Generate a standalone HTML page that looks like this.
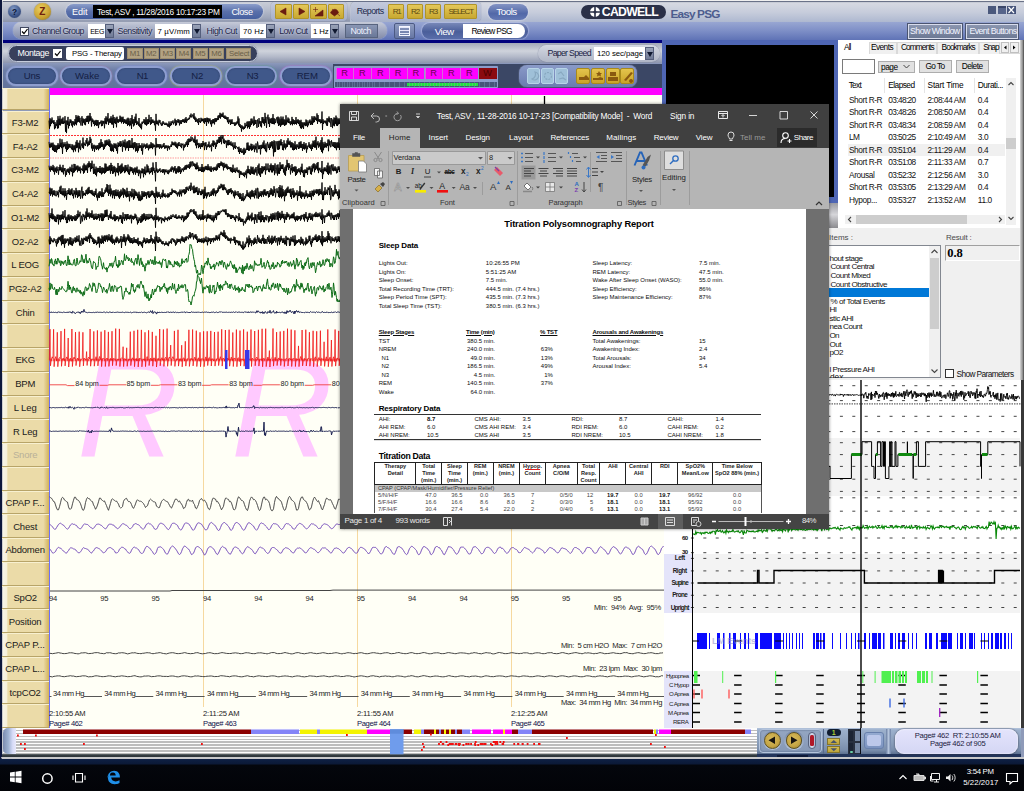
<!DOCTYPE html><html><head><meta charset="utf-8"><title>Easy PSG</title><style>

*{box-sizing:border-box;margin:0;padding:0}
html,body{width:1024px;height:791px;overflow:hidden}
body{position:relative;background:#8e9ab8;font-family:"Liberation Sans",sans-serif;font-size:10px;color:#000}
.a{position:absolute}
.t{position:absolute;white-space:pre;line-height:1}
svg{position:absolute;overflow:visible}


.r1{left:0;top:0;width:1024px;height:22px;background:linear-gradient(#f0f0f0 0,#f0f0f0 1.500px,#6a7288 1.500px,#6a7288 2.500px,#c8ccd6 2.500px,#b6bccb 10px,#9ea6ba 18px,#8c94aa 22px)}
.r2{left:0;top:22px;width:1024px;height:18px;background:linear-gradient(#98a6d2,#7d8ec6 50%,#5f73b6)}
.r2p{left:13px;top:22.400px;width:374px;height:16.600px;border-radius:8.300px;background:linear-gradient(#c6cad8,#a4acc4 45%,#828ba8);box-shadow:0 0 1px #dfe4f0}
.navy{left:0;top:40px;width:662px;height:3px;background:#00007c}
.r3{left:0;top:43px;width:662px;height:20px;background:linear-gradient(#a2a8b8,#cfd3dc 40%,#b2b8c8 70%,#8d96ae)}
.r4{left:0;top:63px;width:662px;height:25px;background:linear-gradient(#8c99bb,#6c7da6 30%,#61729c)}
.wb{background:#fff;top:24px;height:14px}
.ar{top:24px;height:14px;width:9px;background:linear-gradient(#9aa3b8,#6f7a96);border:1px solid #555f7c}
.ar:after{content:"";position:absolute;left:1px;top:4px;border:3px solid transparent;border-top:5px solid #101830;border-bottom:0}
.yb{background:linear-gradient(#e4c85a,#c8a830);border:1px solid #b09428;top:4px;height:15px;border-radius:1px}
.pill{border-radius:9px}
.stg{top:66.4px;height:19.800px;width:52.800px;border-radius:10px;background:#40588a;border:2.400px solid #8e9ecf}
.mb{top:47.8px;height:11.400px;background:#b3a383;border:1px solid #9c8d6e}
.rb{top:67.5px;height:11.800px;width:17.8px;background:#ff00ff;border-left:1px solid #d868d8}
.sh{text-shadow:0 0 2px #e8ecf8}


.lc{left:2px;width:46.5px;background:linear-gradient(90deg,#bcbcc4 0,#f8f4e6 1.500px,#f6f0dc 4.500px,#ebdba8 6px,#ebdba8 88%,#d2b25a 100%);border-top:1px solid #f8f0d0;border-bottom:1px solid #b8a468;height:23.75px}


.tab{top:42px;height:12px;background:#f0f0f0;border:1px solid #d9d9d9;border-bottom:0}
.btn{background:#e1e1e1;border:1px solid #adadad}


.wg{color:#222}


</style></head><body>
<div class="a r1"></div><div class="a r2"></div><div class="a r2p"></div>
<div class="a" style="left:350px;top:2.500px;width:674px;height:19.500px;background:linear-gradient(#d6d9e2,#c6ccdb 50%,#aeb8d0);border-radius:6px 0 0 0"></div>
<div class="a" style="left:7.800px;top:5.300px;width:12.800px;height:12.800px;border-radius:7px;background:radial-gradient(circle at 40% 30%,#8098c4,#3c5488 60%,#283c68);box-shadow:0 0 1px #5a6a8c"></div>
<div class="t" style="left:11.90px;top:8.19px;font-size:8.4px;color:#0c1838;font-weight:bold;">?</div>
<div class="a" style="left:34px;top:3.300px;width:17px;height:17px;border-radius:9px;background:radial-gradient(circle at 40% 35%,#ecd060,#c8a030 60%,#8a6c14);box-shadow:0 0 1px #6a5a20"></div>
<div class="t" style="left:39.30px;top:7.04px;font-size:10px;color:#70200c;font-weight:bold;">Z</div>
<div class="a pill" style="left:65.500px;top:4.300px;width:197px;height:14.700px;border-radius:7.500px;background:linear-gradient(#8c9ecc,#5a70aa 50%,#4660a0);box-shadow:0 0 2px #e8ecf8"></div>
<div class="t" style="left:72.10px;top:8.30px;font-size:9.1px;color:#fff;letter-spacing:-0.118px;">Edit</div>
<div class="a" style="left:93px;top:5px;width:129px;height:13.2px;background:#000;"></div>
<div class="t" style="left:97.00px;top:7.57px;font-size:8.3px;color:#fff;letter-spacing:-0.313px;">Test, ASV , 11/28/2016 10:17:23 PM</div>
<div class="t" style="left:231.50px;top:8.10px;font-size:9.1px;color:#fff;letter-spacing:-0.452px;">Close</div>
<div class="a" style="left:271px;top:2px;width:76px;height:19px;border-radius:4px;background:linear-gradient(#c4cadc,#a4aec8);box-shadow:0 0 1px #6a7694"></div>
<div class="a yb" style="left:275px;width:16.5px"></div>
<div class="a yb" style="left:292.5px;width:16.5px"></div>
<div class="a yb" style="left:310px;width:16.5px"></div>
<div class="a yb" style="left:327.5px;width:16.5px"></div>
<svg style="left:275px;top:4px" width="70" height="15" viewBox="0 0 70 15"><g fill="#6a1c10" stroke="#6a1c10" stroke-width="0.6"><path d="M5 7.5l6-3.5v7zM30 7.5l-6-3.5v7z"/><path d="M38 5.5h5M40.500 3v5M40 12l8-6v6z"/><path d="M57 5l8 7M55.500 9c2-5 7-5 8 0l-4 3z"/></g></svg>
<div class="a" style="left:351px;top:2px;width:130px;height:19px;border-radius:4px;background:linear-gradient(#c4cadc,#a8b2cc);box-shadow:0 0 1px #6a7694"></div>
<div class="t" style="left:356.80px;top:7.15px;font-size:8.8px;color:#20284a;letter-spacing:-0.585px;">Reports</div>
<div class="a yb" style="left:388px;width:16px"></div>
<div class="a yb" style="left:406.5px;width:16px"></div>
<div class="a yb" style="left:425px;width:16px"></div>
<div class="a yb" style="left:444px;width:33px"></div>
<div class="t" style="left:392.80px;top:7.73px;font-size:8px;color:#5a4810;letter-spacing:-1.263px;">R1</div>
<div class="t" style="left:411.00px;top:7.73px;font-size:8px;color:#5a4810;letter-spacing:-1.113px;">R2</div>
<div class="t" style="left:429.00px;top:7.73px;font-size:8px;color:#5a4810;letter-spacing:-1.113px;">R3</div>
<div class="t" style="left:448.50px;top:7.73px;font-size:8px;color:#5a4810;letter-spacing:-1.104px;">SELECT</div>
<div class="a pill" style="left:488px;top:4px;width:40px;height:16px;background:linear-gradient(#8494c4,#5268a8 60%,#6478b4);box-shadow:0 0 2px #eef"></div>
<div class="t" style="left:496.30px;top:6.90px;font-size:9.8px;color:#fff;letter-spacing:-0.474px;">Tools</div>
<div class="a" style="left:581px;top:5px;width:85px;height:14px;background:#2a3048;border-radius:7px"></div>
<svg style="left:589px;top:6px" width="12" height="12" viewBox="0 0 12 12"><circle cx="6" cy="6" r="5" fill="#fff"/><path d="M6 0v12M0 6h12" stroke="#2a3048" stroke-width="1.6"/><circle cx="6" cy="6" r="1.6" fill="#2a3048"/></svg>
<div class="t" style="left:601.80px;top:5.79px;font-size:12.3px;color:#fff;letter-spacing:-0.753px;font-weight:bold;">CADWELL</div>
<div class="t" style="left:670.50px;top:8.61px;font-size:11.8px;color:#4d5c8e;letter-spacing:-0.843px;font-weight:bold;">Easy PSG</div>
<div class="a" style="left:988px;top:5.500px;width:8px;height:8px;background:#4a587c"></div><div class="a" style="left:997.500px;top:5.500px;width:8px;height:8px;background:#56648a;border-top:2px solid #3a4668"></div><div class="a" style="left:1007px;top:5.500px;width:8.500px;height:8px;background:#46547a"></div><svg style="left:1007px;top:5.500px" width="9" height="8"><path d="M1.500 1l5.500 6M7 1l-5.500 6" stroke="#fff" stroke-width="1.200"/></svg>
<div class="a" style="left:20px;top:27px;width:9px;height:9px;background:#fff;border:1px solid #404860"></div><svg style="left:21px;top:28px" width="7" height="7"><path d="M1 3.500l2 2 3.500-4.500" stroke="#000" stroke-width="1.2" fill="none"/></svg>
<div class="t" style="left:32.00px;top:27.05px;font-size:8.8px;color:#1c2446;letter-spacing:-0.604px;text-shadow:0 0 2px #e8ecf8;">Channel Group</div>
<div class="a wb" style="left:88px;width:17px"></div><div class="a ar" style="left:105px"></div>
<div class="t" style="left:90.30px;top:28.47px;font-size:7.0px;color:#000;letter-spacing:-0.360px;">EEG</div>
<div class="t" style="left:117.50px;top:27.05px;font-size:8.8px;color:#1c2446;letter-spacing:-0.481px;text-shadow:0 0 2px #e8ecf8;">Sensitivity</div>
<div class="a wb" style="left:155px;width:37px"></div><div class="a ar" style="left:192px"></div>
<div class="t" style="left:157.50px;top:27.90px;font-size:7.8px;color:#000;letter-spacing:0.164px;">7 &micro;V/mm</div>
<div class="t" style="left:206.50px;top:27.05px;font-size:8.8px;color:#1c2446;letter-spacing:-0.465px;text-shadow:0 0 2px #e8ecf8;">High Cut</div>
<div class="a wb" style="left:240px;width:26px"></div><div class="a ar" style="left:266px"></div>
<div class="t" style="left:243.00px;top:27.90px;font-size:7.8px;color:#000;letter-spacing:0.127px;">70 Hz</div>
<div class="t" style="left:279.30px;top:27.05px;font-size:8.8px;color:#1c2446;letter-spacing:-0.609px;text-shadow:0 0 2px #e8ecf8;">Low Cut</div>
<div class="a wb" style="left:311px;width:19px"></div><div class="a ar" style="left:330px"></div>
<div class="t" style="left:313.00px;top:27.90px;font-size:7.8px;color:#000;letter-spacing:-0.133px;">1 Hz</div>
<div class="a" style="left:345px;top:24px;width:33px;height:14px;background:linear-gradient(#8a96b4,#6a7898);border:1px solid #58647e"></div>
<div class="t" style="left:350.50px;top:27.05px;font-size:8.8px;color:#eef2ff;letter-spacing:-0.495px;">Notch</div>
<div class="a" style="left:394px;top:23px;width:21px;height:16px;background:linear-gradient(#8e9cc0,#6676a4);border:1px solid #4c5a84;border-radius:2px"></div>
<div class="a" style="left:399px;top:26px;width:11px;height:10px;border:1px solid #f4f6ff;background:repeating-linear-gradient(#e4e8f8 0 1px,transparent 1px 3px)"></div>
<div class="a pill" style="left:422px;top:23px;width:106px;height:16px;background:linear-gradient(#7888b8,#4a5e9a 55%,#5a6eaa);box-shadow:0 0 2px #eef"></div>
<div class="t" style="left:434.80px;top:26.50px;font-size:9.8px;color:#fff;letter-spacing:-0.590px;">View</div>
<div class="a" style="left:463px;top:24px;width:62px;height:14px;background:#fff;border-radius:0 7px 7px 0"></div>
<div class="t" style="left:471.50px;top:27.19px;font-size:8.4px;color:#000;letter-spacing:-0.711px;">Review PSG</div>
<div class="a" style="left:908px;top:24px;width:54px;height:15px;background:linear-gradient(#8b96b0,#6d7994);border:1px solid #d8dcec;outline:1px solid #4a5470"></div>
<div class="a" style="left:966px;top:24px;width:52px;height:15px;background:linear-gradient(#8b96b0,#6d7994);border:1px solid #d8dcec;outline:1px solid #4a5470"></div>
<div class="t" style="left:910.00px;top:27.35px;font-size:8.8px;color:#f2f4ff;letter-spacing:-0.557px;">Show Window</div>
<div class="t" style="left:969.40px;top:27.35px;font-size:8.8px;color:#f2f4ff;letter-spacing:-0.590px;">Event Buttons</div>
<div class="a navy"></div><div class="a r3"></div><div class="a r4"></div>
<div class="a pill" style="left:8px;top:45px;width:250px;height:17px;background:#38405c;border:1.500px solid #c6ccdc;box-shadow:0 0 1px #707890"></div>
<div class="t" style="left:17.50px;top:48.85px;font-size:8.8px;color:#fff;letter-spacing:-0.390px;">Montage</div>
<div class="a" style="left:53px;top:49px;width:9px;height:9px;background:#fff"></div><svg style="left:54px;top:50px" width="7" height="7"><path d="M1 3.500l2 2 3.500-4.500" stroke="#000" stroke-width="1.2" fill="none"/></svg>
<div class="a" style="left:66px;top:47px;width:58px;height:13px;background:#fff;border-radius:2px"></div>
<div class="t" style="left:72.00px;top:49.90px;font-size:7.8px;color:#000;letter-spacing:-0.158px;">PSG - Therapy</div>
<div class="a mb" style="left:127.3px;width:15.300px"></div>
<div class="t" style="left:129.80px;top:49.80px;font-size:7.8px;color:#6a5e48;letter-spacing:-0.216px;">M1</div>
<div class="a mb" style="left:143.6px;width:15.300px"></div>
<div class="t" style="left:146.10px;top:49.80px;font-size:7.8px;color:#6a5e48;letter-spacing:-0.216px;">M2</div>
<div class="a mb" style="left:159.9px;width:15.300px"></div>
<div class="t" style="left:162.40px;top:49.80px;font-size:7.8px;color:#6a5e48;letter-spacing:-0.216px;">M3</div>
<div class="a mb" style="left:176.2px;width:15.300px"></div>
<div class="t" style="left:178.70px;top:49.80px;font-size:7.8px;color:#6a5e48;letter-spacing:-0.216px;">M4</div>
<div class="a mb" style="left:192.5px;width:15.300px"></div>
<div class="t" style="left:195.00px;top:49.80px;font-size:7.8px;color:#6a5e48;letter-spacing:-0.216px;">M5</div>
<div class="a mb" style="left:208.8px;width:15.300px"></div>
<div class="t" style="left:211.30px;top:49.80px;font-size:7.8px;color:#6a5e48;letter-spacing:-0.216px;">M6</div>
<div class="a mb" style="left:226.300px;width:24.700px"></div>
<div class="t" style="left:229.00px;top:49.80px;font-size:7.8px;color:#6a5e48;letter-spacing:-0.228px;">Select</div>
<div class="a pill" style="left:538px;top:45px;width:122px;height:17px;background:linear-gradient(#d4d8e2,#b0b6c6);box-shadow:0 0 1px #5a6480"></div>
<div class="t" style="left:547.50px;top:49.05px;font-size:8.8px;color:#1c2446;letter-spacing:-0.731px;">Paper Speed</div>
<div class="a wb" style="left:594px;top:47px;width:51px;height:13px"></div><div class="a ar" style="left:645px;top:47px;height:13px"></div>
<div class="t" style="left:597.00px;top:49.90px;font-size:7.8px;color:#000;letter-spacing:-0.068px;">120 sec/page</div>
<div class="a stg" style="left:5.6px;box-shadow:0 0 1.500px .3px #8b9ccc,inset 0 0 2px #2a3a60"></div>
<div class="t" style="left:23.80px;top:70.87px;font-size:9.6px;color:#141e44;letter-spacing:-0.289px;">Uns</div>
<div class="a stg" style="left:59.6px;box-shadow:0 0 1.500px .3px #9a7aa8,inset 0 0 2px #2a3a60"></div>
<div class="t" style="left:75.00px;top:70.87px;font-size:9.6px;color:#141e44;letter-spacing:0.081px;">Wake</div>
<div class="a stg" style="left:114.6px;box-shadow:0 0 1.500px .3px #7a8cd8,inset 0 0 2px #2a3a60"></div>
<div class="t" style="left:136.80px;top:70.87px;font-size:9.6px;color:#141e44;letter-spacing:-0.783px;">N1</div>
<div class="a stg" style="left:169.6px;box-shadow:0 0 1.500px .3px #a8b070,inset 0 0 2px #2a3a60"></div>
<div class="t" style="left:191.30px;top:70.87px;font-size:9.6px;color:#141e44;letter-spacing:-0.283px;">N2</div>
<div class="a stg" style="left:224.6px;box-shadow:0 0 1.500px .3px #5a9a90,inset 0 0 2px #2a3a60"></div>
<div class="t" style="left:246.80px;top:70.87px;font-size:9.6px;color:#141e44;letter-spacing:-0.533px;">N3</div>
<div class="a stg" style="left:279.6px;box-shadow:0 0 1.500px .3px #b070d0,inset 0 0 2px #2a3a60"></div>
<div class="t" style="left:296.80px;top:70.87px;font-size:9.6px;color:#141e44;letter-spacing:-0.109px;">REM</div>
<div class="a" style="left:333px;top:64px;width:329px;height:24px;background:#3b4765;"></div>
<div class="a" style="left:333.500px;top:66px;width:164.500px;height:21.500px;background:#8c9cca;border-radius:1px"></div>
<div class="a rb" style="left:335.5px"></div>
<div class="t" style="left:341.30px;top:68.91px;font-size:9.2px;color:#6a0050;">R</div>
<div class="a rb" style="left:353.3px"></div>
<div class="t" style="left:359.10px;top:68.91px;font-size:9.2px;color:#6a0050;">R</div>
<div class="a rb" style="left:371.1px"></div>
<div class="t" style="left:376.90px;top:68.91px;font-size:9.2px;color:#6a0050;">R</div>
<div class="a rb" style="left:388.9px"></div>
<div class="t" style="left:394.70px;top:68.91px;font-size:9.2px;color:#6a0050;">R</div>
<div class="a rb" style="left:406.7px"></div>
<div class="t" style="left:412.50px;top:68.91px;font-size:9.2px;color:#6a0050;">R</div>
<div class="a rb" style="left:424.5px"></div>
<div class="t" style="left:430.30px;top:68.91px;font-size:9.2px;color:#6a0050;">R</div>
<div class="a rb" style="left:442.3px"></div>
<div class="t" style="left:448.10px;top:68.91px;font-size:9.2px;color:#6a0050;">R</div>
<div class="a rb" style="left:460.1px"></div>
<div class="t" style="left:465.90px;top:68.91px;font-size:9.2px;color:#6a0050;">R</div>
<div class="a rb" style="left:478.5px;width:18px;background:#8b0a10;border:0"></div>
<div class="t" style="left:483.30px;top:68.91px;font-size:9.2px;color:#4a0000;">W</div>
<div class="a" style="left:335px;top:81.800px;width:161.500px;height:5px;background:repeating-linear-gradient(90deg,#46547a 0 1.500px,#5c6c96 1.500px 2.500px)"></div>
<div class="a" style="left:406.800px;top:82.500px;width:71.200px;height:3.500px;background:repeating-linear-gradient(90deg,#20e040 0 2px,#50c868 2px 3px)"></div>
<div class="a" style="left:519px;top:65px;width:118px;height:22px;border-radius:8px;background:linear-gradient(#8a9ac8,#6a7cb0);box-shadow:0 0 1px #c0c8e8"></div>
<div class="a" style="left:527px;top:68px;width:13px;height:16px;background:#9fc0d8;border:1px solid #b8d4e8;border-radius:2px"></div>
<div class="a" style="left:541px;top:68px;width:13px;height:16px;background:#9fc0d8;border:1px solid #b8d4e8;border-radius:2px"></div>
<div class="a" style="left:555px;top:68px;width:13px;height:16px;background:#9fc0d8;border:1px solid #b8d4e8;border-radius:2px"></div>
<div class="a" style="left:576px;top:68px;width:14px;height:16px;background:linear-gradient(#e4c44c,#caa428);border:1px solid #a88a1c;border-radius:2px"></div>
<div class="a" style="left:591px;top:68px;width:14px;height:16px;background:linear-gradient(#e4c44c,#caa428);border:1px solid #a88a1c;border-radius:2px"></div>
<div class="a" style="left:605.5px;top:68px;width:14px;height:16px;background:linear-gradient(#e4c44c,#caa428);border:1px solid #a88a1c;border-radius:2px"></div>
<div class="a" style="left:620px;top:68px;width:14px;height:16px;background:linear-gradient(#e4c44c,#caa428);border:1px solid #a88a1c;border-radius:2px"></div>
<svg style="left:527px;top:68px" width="110" height="16" viewBox="0 0 110 16"><g fill="none" stroke="#88a8c0" stroke-width="1.2"><path d="M8 4a4 4 0 1 1-3 7 5 5 0 0 0 3-7z"/><circle cx="21" cy="8" r="3.5" stroke-dasharray="2 1"/><path d="M31 6l3-2 3 4M32 11l4-1 3 2"/></g><g fill="#8a5a10" stroke="none"><path d="M52 12h10v-2l-3-3-2 2h-5zM66 12h10v-2l-3-1-2 1h-5zM72 3l1 2h2l-1.500 1.500.5 2-2-1-2 1 .5-2L69 5h2zM81 13h10V9h-10zM83 8h6V4h-6zM97 12l7-8 2 1-7 8zM104 11a2 2 0 1 0 .1 0z"/></g></svg>
<div class="a" style="left:50px;top:87.8px;width:612px;height:7.8px;background:#ff00ff;"></div>
<div class="a" style="left:0px;top:0px;width:1.5px;height:759.5px;background:#0c163c;"></div>
<div class="a" style="left:1.5px;top:1px;width:1.5px;height:758px;background:#c4c8d0;"></div>
<div class="a lc" style="top:88px;height:22px"></div>
<div class="a lc" style="top:110.60px"></div>
<div class="t" style="left:11.85px;top:117.86px;font-size:9.5px;color:#1a1a1a;letter-spacing:-0.166px;">F3-M2</div>
<div class="a lc" style="top:134.35px"></div>
<div class="t" style="left:12.63px;top:141.61px;font-size:9.5px;color:#1a1a1a;letter-spacing:-0.157px;">F4-A2</div>
<div class="a lc" style="top:158.10px"></div>
<div class="t" style="left:11.34px;top:165.36px;font-size:9.5px;color:#1a1a1a;letter-spacing:-0.173px;">C3-M2</div>
<div class="a lc" style="top:181.85px"></div>
<div class="t" style="left:12.11px;top:189.11px;font-size:9.5px;color:#1a1a1a;letter-spacing:-0.163px;">C4-A2</div>
<div class="a lc" style="top:205.60px"></div>
<div class="t" style="left:11.08px;top:212.86px;font-size:9.5px;color:#1a1a1a;letter-spacing:-0.176px;">O1-M2</div>
<div class="a lc" style="top:229.35px"></div>
<div class="t" style="left:11.85px;top:236.61px;font-size:9.5px;color:#1a1a1a;letter-spacing:-0.166px;">O2-A2</div>
<div class="a lc" style="top:253.10px"></div>
<div class="t" style="left:11.24px;top:260.36px;font-size:9.5px;color:#1a1a1a;letter-spacing:-0.174px;">L EOG</div>
<div class="a lc" style="top:276.85px"></div>
<div class="t" style="left:8.74px;top:284.11px;font-size:9.5px;color:#1a1a1a;letter-spacing:-0.171px;">PG2-A2</div>
<div class="a lc" style="top:300.60px"></div>
<div class="t" style="left:15.73px;top:307.86px;font-size:9.5px;color:#1a1a1a;letter-spacing:-0.148px;">Chin</div>
<div class="a lc" style="top:324.35px"></div>
<div class="a lc" style="top:348.10px"></div>
<div class="t" style="left:15.47px;top:355.36px;font-size:9.5px;color:#1a1a1a;letter-spacing:-0.203px;">EKG</div>
<div class="a lc" style="top:371.85px"></div>
<div class="t" style="left:15.21px;top:379.11px;font-size:9.5px;color:#1a1a1a;letter-spacing:-0.208px;">BPM</div>
<div class="a lc" style="top:395.60px"></div>
<div class="t" style="left:13.83px;top:402.86px;font-size:9.5px;color:#1a1a1a;letter-spacing:-0.142px;">L Leg</div>
<div class="a lc" style="top:419.35px"></div>
<div class="t" style="left:12.88px;top:426.61px;font-size:9.5px;color:#1a1a1a;letter-spacing:-0.154px;">R Leg</div>
<div class="a lc" style="top:443.10px"></div>
<div class="t" style="left:12.88px;top:450.36px;font-size:9.5px;color:#b8b098;letter-spacing:-0.154px;">Snore</div>
<div class="a lc" style="top:466.85px"></div>
<div class="a lc" style="top:490.60px"></div>
<div class="t" style="left:5.55px;top:497.86px;font-size:9.5px;color:#1a1a1a;letter-spacing:-0.136px;">CPAP F...</div>
<div class="a lc" style="top:514.35px"></div>
<div class="t" style="left:13.14px;top:521.61px;font-size:9.5px;color:#1a1a1a;letter-spacing:-0.150px;">Chest</div>
<div class="a lc" style="top:538.10px"></div>
<div class="t" style="left:5.38px;top:545.36px;font-size:9.5px;color:#1a1a1a;letter-spacing:-0.176px;">Abdomen</div>
<div class="a lc" style="top:561.85px"></div>
<div class="a lc" style="top:585.60px"></div>
<div class="t" style="left:13.40px;top:592.86px;font-size:9.5px;color:#1a1a1a;letter-spacing:-0.184px;">SpO2</div>
<div class="a lc" style="top:609.35px"></div>
<div class="t" style="left:8.74px;top:616.61px;font-size:9.5px;color:#1a1a1a;letter-spacing:-0.128px;">Position</div>
<div class="a lc" style="top:633.10px"></div>
<div class="t" style="left:5.37px;top:640.36px;font-size:9.5px;color:#1a1a1a;letter-spacing:-0.137px;">CPAP P...</div>
<div class="a lc" style="top:656.85px"></div>
<div class="t" style="left:5.30px;top:664.11px;font-size:9.5px;color:#1a1a1a;letter-spacing:-0.140px;">CPAP L...</div>
<div class="a lc" style="top:680.60px"></div>
<div class="t" style="left:9.52px;top:687.86px;font-size:9.5px;color:#1a1a1a;letter-spacing:-0.163px;">tcpCO2</div>
<div class="a lc" style="top:704.35px"></div>
<div class="a" style="left:49px;top:95px;width:615px;height:633px;background:#fffff6;"></div>
<div class="a" style="left:48.5px;top:88px;width:1.5px;height:640px;background:#7070f6;"></div>
<svg style="left:0;top:0" width="1024" height="791" viewBox="0 0 1024 791" fill="none" stroke-linejoin="round"><g font-family="Liberation Sans,sans-serif" font-style="italic" font-size="141" fill="#ffc9ff" stroke="none"><text x="77" y="456">R</text><text x="231" y="456">R</text></g><path d="M203.5 95V707" stroke="#f6d9a0" stroke-width="1"/><path d="M357.5 95V707" stroke="#f6d9a0" stroke-width="1"/><path d="M511.5 95V707" stroke="#f6d9a0" stroke-width="1"/><path d="M50 135.500H662" stroke="#ff3030" stroke-width="1" stroke-dasharray="2 1"/><path d="M50 158H662" stroke="#ff9a9a" stroke-width="1.2" stroke-dasharray="1.500 1"/><path d="M49.0 120.6L49.5 128.7L50.0 118.2L50.5 126.2L51.0 119.4L51.5 123.8L52.0 117.5L52.5 122.6L53.0 120.6L53.5 124.0L54.0 120.2L54.5 129.2L55.0 122.1L55.5 128.2L56.0 123.8L56.5 125.7L57.0 120.2L57.5 128.6L58.0 116.1L58.5 128.2L59.0 118.7L59.5 125.1L60.0 115.8L60.5 125.4L61.0 119.4L61.5 123.6L62.0 118.6L62.5 123.8L63.0 117.4L63.5 124.0L64.0 121.3L64.5 123.2L65.0 116.2L65.5 131.7L66.0 120.5L66.5 133.1L67.0 120.7L67.5 124.8L68.0 116.9L68.5 128.4L69.0 121.5L69.5 126.0L70.0 119.3L70.5 122.8L71.0 119.7L71.5 125.5L72.0 121.2L72.5 127.3L73.0 121.1L73.5 124.5L74.0 121.8L74.5 125.6L75.0 119.1L75.5 124.2L76.0 115.1L76.5 125.2L77.0 116.8L77.5 122.3L78.0 115.5L78.5 121.8L79.0 116.0L79.5 122.5L80.0 117.8L80.5 122.9L81.0 125.6L81.5 119.8L82.0 116.2L82.5 125.6L83.0 118.4L83.5 122.7L84.0 119.3L84.5 124.5L85.0 118.9L85.5 125.2L86.0 118.3L86.5 122.0L87.0 116.0L87.5 121.8L88.0 115.7L88.5 123.8L89.0 115.8L89.5 121.4L90.0 113.0L90.5 120.5L91.0 116.4L91.5 126.5L92.0 118.4L92.5 122.1L93.0 119.6L93.5 124.0L94.0 120.6L94.5 126.1L95.0 120.7L95.5 124.9L96.0 119.9L96.5 125.8L97.0 120.2L97.5 125.5L98.0 120.2L98.5 128.1L99.0 122.0L99.5 124.4L100.0 122.1L100.5 123.4L101.0 120.6L101.5 126.2L102.0 120.7L102.5 125.7L103.0 120.9L103.5 123.5L104.0 120.9L104.5 128.3L105.0 118.2L105.5 123.6L106.0 116.3L106.5 124.2L107.0 117.7L107.5 121.4L108.0 113.1L108.5 124.9L109.0 119.0L109.5 122.6L110.0 118.2L110.5 122.8L111.0 116.3L111.5 124.3L112.0 117.9L112.5 124.5L113.0 114.8L113.5 127.9L114.0 117.0L114.5 123.1L115.0 118.9L115.5 123.9L116.0 117.6L116.5 127.3L117.0 116.7L117.5 122.4L118.0 119.2L118.5 122.7L119.0 119.3L119.5 121.6L120.0 115.7L120.5 121.7L121.0 116.7L121.5 123.3L122.0 117.4L122.5 121.9L123.0 116.7L123.5 123.9L124.0 119.1L124.5 122.7L125.0 119.3L125.5 123.5L126.0 120.1L126.5 123.9L127.0 118.6L127.5 125.8L128.0 117.7L128.5 124.9L129.0 118.5L129.5 126.2L130.0 120.8L130.5 125.3L131.0 118.0L131.5 129.0L132.0 115.1L132.5 123.6L133.0 119.4L133.5 126.4L134.0 119.1L134.5 125.3L135.0 116.7L135.5 122.8L136.0 113.7L136.5 124.9L137.0 120.9L137.5 124.2L138.0 122.2L138.5 125.6L139.0 118.0L139.5 126.7L140.0 123.9L140.5 128.1L141.0 123.5L141.5 129.3L142.0 121.8L142.5 123.9L143.0 121.5L143.5 122.6L144.0 119.1L144.5 124.2L145.0 119.7L145.5 124.7L146.0 117.2L146.5 125.6L147.0 119.6L147.5 124.4L148.0 119.0L148.5 124.0L149.0 114.8L149.5 122.2L150.0 120.3L150.5 124.8L151.0 117.0L151.5 123.8L152.0 119.6L152.5 122.7L153.0 119.6L153.5 122.9L154.0 121.3L154.5 125.2L155.0 120.7L155.5 130.7L156.0 113.9L156.5 124.1L157.0 120.5L157.5 124.3L158.0 121.3L158.5 125.5L159.0 119.8L159.5 122.6L160.0 120.2L160.5 124.0L161.0 123.7L161.5 125.8L162.0 122.5L162.5 125.4L163.0 121.1L163.5 123.7L164.0 122.5L164.5 124.9L165.0 123.4L165.5 124.9L166.0 122.7L166.5 125.1L167.0 123.4L167.5 126.4L168.0 123.9L168.5 126.7L169.0 121.4L169.5 127.5L170.0 123.2L170.5 125.9L171.0 121.3L171.5 125.1L172.0 121.6L172.5 122.8L173.0 120.4L173.5 124.4L174.0 122.2L174.5 122.7L175.0 118.7L175.5 125.7L176.0 120.0L176.5 125.2L177.0 120.8L177.5 122.4L178.0 119.1L178.5 122.7L179.0 119.7L179.5 125.4L180.0 120.5L180.5 123.6L181.0 120.1L181.5 123.9L182.0 120.0L182.5 121.9L183.0 119.0L183.5 122.2L184.0 119.7L184.5 123.0L185.0 118.5L185.5 122.3L186.0 117.1L186.5 122.8L187.0 119.1L187.5 120.5L188.0 118.5L188.5 119.8L189.0 117.7L189.5 119.2L190.0 115.1L190.5 117.3L191.0 113.6L191.5 117.2L192.0 117.4L192.5 114.8L193.0 114.6L193.5 118.5L194.0 113.2L194.5 119.6L195.0 116.6L195.5 121.9L196.0 117.8L196.5 121.5L197.0 119.5L197.5 122.6L198.0 118.9L198.5 125.0L199.0 118.0L199.5 122.1L200.0 120.8L200.5 123.0L201.0 117.8L201.5 121.4L202.0 118.7L202.5 121.1L203.0 118.7L203.5 122.5L204.0 118.7L204.5 123.7L205.0 118.0L205.5 122.0L206.0 118.4L206.5 125.9L207.0 117.6L207.5 121.9L208.0 118.0L208.5 123.4L209.0 118.6L209.5 121.3L210.0 118.5L210.5 124.2L211.0 120.2L211.5 126.6L212.0 120.1L212.5 123.4L213.0 119.0L213.5 123.2L214.0 119.0L214.5 124.4L215.0 118.1L215.5 121.8L216.0 118.2L216.5 121.5L217.0 118.1L217.5 120.1L218.0 115.7L218.5 119.7L219.0 115.0L219.5 117.7L220.0 112.8L220.5 118.6L221.0 113.6L221.5 116.7L222.0 113.9L222.5 116.9L223.0 112.6L223.5 117.7L224.0 115.8L224.5 118.5L225.0 115.5L225.5 119.0L226.0 116.5L226.5 119.4L227.0 117.3L227.5 122.2L228.0 117.0L228.5 123.8L229.0 120.4L229.5 122.1L230.0 119.3L230.5 125.0L231.0 120.2L231.5 123.9L232.0 119.2L232.5 123.9L233.0 122.8L233.5 123.9L234.0 122.3L234.5 125.8L235.0 122.6L235.5 125.5L236.0 122.3L236.5 124.4L237.0 121.4L237.5 123.4L238.0 116.4L238.5 125.4L239.0 118.5L239.5 126.9L240.0 124.0L240.5 128.0L241.0 125.3L241.5 131.6L242.0 125.4L242.5 128.7L243.0 126.4L243.5 129.5L244.0 126.8L244.5 129.0L245.0 122.9L245.5 127.6L246.0 124.9L246.5 126.0L247.0 121.7L247.5 128.3L248.0 121.4L248.5 127.1L249.0 121.5L249.5 128.9L250.0 121.2L250.5 126.6L251.0 118.7L251.5 124.9L252.0 118.6L252.5 123.3L253.0 120.5L253.5 125.7L254.0 116.4L254.5 124.8L255.0 119.8L255.5 123.9L256.0 120.0L256.5 124.8L257.0 127.9L257.5 119.5L258.0 120.8L258.5 127.0L259.0 118.1L259.5 123.5L260.0 121.1L260.5 126.3L261.0 121.3L261.5 127.4L262.0 117.2L262.5 122.6L263.0 117.1L263.5 123.6L264.0 119.1L264.5 125.7L265.0 112.9L265.5 122.8L266.0 116.9L266.5 127.9L267.0 121.1L267.5 118.0L268.0 114.6L268.5 123.8L269.0 117.3L269.5 127.0L270.0 118.9L270.5 122.8L271.0 118.4L271.5 123.5L272.0 117.9L272.5 124.0L273.0 114.1L273.5 124.1L274.0 118.1L274.5 124.3L275.0 118.9L275.5 123.0L276.0 121.3L276.5 118.0L277.0 117.2L277.5 123.3L278.0 116.6L278.5 126.0L279.0 117.4L279.5 125.2L280.0 119.3L280.5 126.9L281.0 116.5L281.5 125.3L282.0 118.6L282.5 124.7L283.0 116.6L283.5 124.6L284.0 119.3L284.5 126.0L285.0 119.8L285.5 125.2L286.0 115.3L286.5 124.5L287.0 119.6L287.5 122.3L288.0 117.5L288.5 123.0L289.0 118.6L289.5 123.3L290.0 121.5L290.5 125.1L291.0 121.1L291.5 124.1L292.0 116.9L292.5 125.3L293.0 119.0L293.5 124.0L294.0 120.0L294.5 124.4L295.0 120.5L295.5 123.9L296.0 117.1L296.5 124.6L297.0 120.1L297.5 123.1L298.0 119.2L298.5 124.0L299.0 120.0L299.5 126.1L300.0 120.9L300.5 128.2L301.0 119.8L301.5 128.7L302.0 122.1L302.5 127.4L303.0 122.8L303.5 129.0L304.0 122.2L304.5 125.3L305.0 122.6L305.5 126.1L306.0 119.5L306.5 125.6L307.0 120.3L307.5 127.1L308.0 122.1L308.5 125.3L309.0 120.5L309.5 123.1L310.0 119.5L310.5 125.0L311.0 120.9L311.5 124.4L312.0 116.2L312.5 125.0L313.0 117.7L313.5 122.6L314.0 116.2L314.5 122.1L315.0 116.6L315.5 119.8L316.0 118.1L316.5 120.8L317.0 113.4L317.5 123.9L318.0 115.0L318.5 121.4L319.0 119.5L319.5 121.9L320.0 119.0L320.5 123.3L321.0 120.2L321.5 123.0L322.0 111.5L322.5 130.0L323.0 119.3L323.5 124.0L324.0 120.8L324.5 122.4L325.0 120.5L325.5 123.3L326.0 120.8L326.5 125.5L327.0 118.2L327.5 125.9L328.0 118.5L328.5 121.6L329.0 116.5L329.5 122.4L330.0 118.0L330.5 123.0L331.0 127.0L331.5 118.1L332.0 119.2L332.5 128.1L333.0 119.6L333.5 125.5L334.0 117.4L334.5 126.2L335.0 118.0L335.5 123.8L336.0 115.6L336.5 125.6L337.0 117.6L337.5 126.0L338.0 119.2L338.5 124.4L339.0 118.2L339.5 123.9L340.0 119.5L340.5 123.1L341.0 118.5L341.5 123.0L342.0 116.8L342.5 124.8L343.0 119.3L343.5 123.3L344.0 117.4L344.5 121.8L345.0 119.6L345.5 125.9L346.0 119.6" stroke="#000" stroke-width="0.9"/><path d="M49.0 141.9L49.5 147.5L50.0 144.0L50.5 147.6L51.0 142.7L51.5 147.1L52.0 143.3L52.5 150.1L53.0 142.6L53.5 150.8L54.0 144.6L54.5 152.0L55.0 145.0L55.5 151.8L56.0 146.0L56.5 152.5L57.0 145.0L57.5 149.7L58.0 143.2L58.5 149.0L59.0 144.7L59.5 148.6L60.0 138.7L60.5 146.9L61.0 142.8L61.5 148.1L62.0 139.3L62.5 153.9L63.0 142.3L63.5 147.2L64.0 144.1L64.5 146.3L65.0 142.2L65.5 148.7L66.0 144.0L66.5 151.8L67.0 141.4L67.5 150.0L68.0 143.6L68.5 148.7L69.0 144.1L69.5 147.5L70.0 143.9L70.5 147.6L71.0 146.5L71.5 149.3L72.0 144.2L72.5 150.1L73.0 144.8L73.5 152.2L74.0 146.0L74.5 149.6L75.0 144.9L75.5 151.4L76.0 141.8L76.5 148.1L77.0 140.1L77.5 147.6L78.0 142.7L78.5 152.3L79.0 142.9L79.5 148.5L80.0 140.4L80.5 150.1L81.0 146.5L81.5 145.0L82.0 143.3L82.5 147.7L83.0 137.6L83.5 148.7L84.0 142.5L84.5 145.2L85.0 143.9L85.5 145.9L86.0 140.2L86.5 143.6L87.0 138.0L87.5 146.4L88.0 142.1L88.5 145.4L89.0 140.7L89.5 144.8L90.0 136.8L90.5 142.8L91.0 138.8L91.5 148.4L92.0 143.2L92.5 150.9L93.0 145.4L93.5 148.6L94.0 144.7L94.5 151.8L95.0 145.4L95.5 148.6L96.0 145.8L96.5 149.9L97.0 145.3L97.5 148.8L98.0 145.1L98.5 150.2L99.0 143.1L99.5 148.5L100.0 142.5L100.5 148.1L101.0 139.2L101.5 146.8L102.0 142.0L102.5 146.7L103.0 143.7L103.5 150.0L104.0 144.3L104.5 148.7L105.0 140.5L105.5 146.5L106.0 140.5L106.5 145.4L107.0 139.8L107.5 145.0L108.0 141.4L108.5 145.9L109.0 139.3L109.5 146.9L110.0 140.7L110.5 150.7L111.0 143.5L111.5 151.4L112.0 144.3L112.5 150.8L113.0 145.2L113.5 152.0L114.0 143.3L114.5 147.8L115.0 143.8L115.5 148.5L116.0 143.5L116.5 151.0L117.0 144.9L117.5 153.5L118.0 142.4L118.5 147.0L119.0 143.1L119.5 146.2L120.0 141.3L120.5 147.0L121.0 141.2L121.5 146.2L122.0 143.5L122.5 151.7L123.0 140.4L123.5 146.8L124.0 142.0L124.5 147.3L125.0 139.5L125.5 150.4L126.0 142.7L126.5 148.2L127.0 141.5L127.5 147.8L128.0 141.2L128.5 150.9L129.0 140.0L129.5 147.9L130.0 140.5L130.5 147.9L131.0 144.8L131.5 147.8L132.0 138.1L132.5 148.0L133.0 143.1L133.5 149.3L134.0 142.3L134.5 147.6L135.0 142.1L135.5 151.5L136.0 143.3L136.5 150.9L137.0 143.1L137.5 152.5L138.0 145.8L138.5 150.6L139.0 143.0L139.5 148.1L140.0 145.0L140.5 147.7L141.0 145.6L141.5 150.9L142.0 143.3L142.5 154.5L143.0 145.5L143.5 147.7L144.0 143.5L144.5 146.6L145.0 144.8L145.5 148.7L146.0 144.3L146.5 147.8L147.0 143.3L147.5 147.8L148.0 145.6L148.5 150.3L149.0 144.7L149.5 148.4L150.0 144.5L150.5 148.2L151.0 142.2L151.5 147.9L152.0 143.3L152.5 149.1L153.0 143.6L153.5 147.3L154.0 144.5L154.5 146.9L155.0 145.2L155.5 155.4L156.0 138.0L156.5 147.5L157.0 143.9L157.5 147.3L158.0 144.1L158.5 147.3L159.0 144.2L159.5 148.8L160.0 144.1L160.5 147.5L161.0 144.5L161.5 148.5L162.0 146.1L162.5 147.5L163.0 144.4L163.5 147.0L164.0 143.0L164.5 148.6L165.0 145.8L165.5 148.3L166.0 145.1L166.5 147.7L167.0 146.0L167.5 150.7L168.0 145.4L168.5 148.1L169.0 146.0L169.5 149.5L170.0 146.3L170.5 146.8L171.0 144.5L171.5 146.8L172.0 141.5L172.5 145.1L173.0 142.3L173.5 145.2L174.0 142.9L174.5 145.4L175.0 141.7L175.5 146.6L176.0 142.5L176.5 147.7L177.0 144.0L177.5 148.6L178.0 142.9L178.5 146.1L179.0 142.0L179.5 146.0L180.0 145.2L180.5 146.7L181.0 143.3L181.5 148.1L182.0 143.8L182.5 145.1L183.0 143.6L183.5 150.4L184.0 144.8L184.5 147.6L185.0 143.9L185.5 146.5L186.0 142.2L186.5 144.9L187.0 140.7L187.5 147.0L188.0 139.0L188.5 145.0L189.0 138.4L189.5 142.1L190.0 139.0L190.5 141.6L191.0 136.5L191.5 140.8L192.0 140.9L192.5 137.5L193.0 138.3L193.5 142.2L194.0 139.1L194.5 142.7L195.0 136.2L195.5 145.4L196.0 140.0L196.5 148.2L197.0 139.4L197.5 145.0L198.0 143.2L198.5 148.1L199.0 142.9L199.5 147.0L200.0 144.3L200.5 148.8L201.0 143.2L201.5 147.0L202.0 143.0L202.5 147.1L203.0 141.0L203.5 145.4L204.0 143.1L204.5 150.1L205.0 142.5L205.5 146.2L206.0 142.3L206.5 149.8L207.0 145.5L207.5 147.2L208.0 144.2L208.5 146.6L209.0 141.6L209.5 147.5L210.0 145.4L210.5 146.9L211.0 144.4L211.5 151.3L212.0 143.2L212.5 145.6L213.0 140.5L213.5 146.8L214.0 140.8L214.5 144.8L215.0 142.7L215.5 149.0L216.0 142.6L216.5 146.6L217.0 139.9L217.5 143.9L218.0 139.5L218.5 142.6L219.0 137.0L219.5 142.9L220.0 136.8L220.5 141.8L221.0 135.2L221.5 144.2L222.0 136.9L222.5 138.6L223.0 135.0L223.5 143.2L224.0 138.7L224.5 144.0L225.0 140.3L225.5 142.4L226.0 140.6L226.5 147.9L227.0 140.9L227.5 145.2L228.0 139.9L228.5 145.3L229.0 140.0L229.5 145.0L230.0 142.3L230.5 145.3L231.0 141.4L231.5 145.7L232.0 143.6L232.5 146.6L233.0 142.4L233.5 149.6L234.0 145.4L234.5 148.1L235.0 142.3L235.5 148.9L236.0 145.9L236.5 146.7L237.0 146.9L237.5 148.5L238.0 147.2L238.5 152.0L239.0 146.7L239.5 154.0L240.0 148.6L240.5 152.0L241.0 148.1L241.5 152.8L242.0 150.8L242.5 152.7L243.0 149.2L243.5 154.7L244.0 147.8L244.5 154.4L245.0 149.4L245.5 152.8L246.0 148.6L246.5 149.9L247.0 142.8L247.5 150.0L248.0 142.5L248.5 150.7L249.0 145.4L249.5 150.6L250.0 146.0L250.5 149.2L251.0 143.7L251.5 150.6L252.0 144.1L252.5 150.1L253.0 146.2L253.5 148.6L254.0 144.7L254.5 152.1L255.0 146.0L255.5 149.3L256.0 143.4L256.5 148.3L257.0 152.7L257.5 141.6L258.0 143.9L258.5 149.2L259.0 145.4L259.5 148.9L260.0 145.3L260.5 154.4L261.0 144.9L261.5 149.0L262.0 144.7L262.5 148.1L263.0 142.4L263.5 148.2L264.0 140.5L264.5 149.1L265.0 145.1L265.5 151.2L266.0 143.5L266.5 152.2L267.0 148.0L267.5 141.9L268.0 144.1L268.5 148.0L269.0 144.3L269.5 150.0L270.0 142.5L270.5 147.8L271.0 142.0L271.5 146.3L272.0 141.0L272.5 148.5L273.0 141.9L273.5 156.4L274.0 140.3L274.5 152.2L275.0 141.1L275.5 151.9L276.0 146.8L276.5 142.2L277.0 141.2L277.5 149.6L278.0 141.3L278.5 149.8L279.0 140.8L279.5 149.2L280.0 140.7L280.5 145.3L281.0 139.1L281.5 145.3L282.0 142.0L282.5 150.0L283.0 144.2L283.5 150.3L284.0 140.3L284.5 147.6L285.0 143.4L285.5 149.4L286.0 144.1L286.5 147.4L287.0 140.4L287.5 146.8L288.0 138.2L288.5 144.5L289.0 141.6L289.5 144.8L290.0 140.7L290.5 147.4L291.0 142.2L291.5 147.4L292.0 142.3L292.5 149.9L293.0 143.0L293.5 150.3L294.0 144.3L294.5 150.0L295.0 141.3L295.5 148.8L296.0 145.1L296.5 149.7L297.0 144.1L297.5 147.2L298.0 145.5L298.5 149.0L299.0 142.3L299.5 148.4L300.0 141.8L300.5 147.7L301.0 141.3L301.5 147.8L302.0 144.0L302.5 150.9L303.0 143.9L303.5 148.8L304.0 142.1L304.5 149.5L305.0 144.5L305.5 148.5L306.0 143.1L306.5 152.7L307.0 145.6L307.5 149.2L308.0 145.8L308.5 146.5L309.0 142.2L309.5 147.9L310.0 144.3L310.5 148.8L311.0 145.1L311.5 150.9L312.0 143.6L312.5 149.0L313.0 140.7L313.5 146.9L314.0 141.4L314.5 147.6L315.0 140.1L315.5 147.6L316.0 136.7L316.5 149.7L317.0 142.6L317.5 145.2L318.0 141.2L318.5 147.7L319.0 143.4L319.5 146.4L320.0 142.4L320.5 149.5L321.0 140.1L321.5 151.9L322.0 137.3L322.5 153.2L323.0 142.2L323.5 150.2L324.0 143.8L324.5 147.7L325.0 141.8L325.5 147.3L326.0 143.2L326.5 147.5L327.0 143.3L327.5 146.0L328.0 139.5L328.5 151.2L329.0 139.6L329.5 145.4L330.0 141.1L330.5 147.1L331.0 147.1L331.5 140.3L332.0 143.7L332.5 146.2L333.0 142.1L333.5 146.8L334.0 142.3L334.5 148.0L335.0 142.1L335.5 148.2L336.0 142.6L336.5 150.2L337.0 142.6L337.5 147.6L338.0 142.3L338.5 147.8L339.0 137.8L339.5 150.0L340.0 143.2L340.5 147.4L341.0 140.8L341.5 149.3L342.0 146.4L342.5 151.8L343.0 146.8L343.5 149.0L344.0 144.4L344.5 148.4L345.0 143.9L345.5 149.0L346.0 146.5" stroke="#000" stroke-width="0.9"/><path d="M49.0 165.7L49.5 169.9L50.0 167.5L50.5 171.6L51.0 165.9L51.5 170.0L52.0 167.2L52.5 170.4L53.0 164.9L53.5 171.7L54.0 166.4L54.5 174.5L55.0 168.2L55.5 171.5L56.0 167.4L56.5 172.9L57.0 166.5L57.5 170.7L58.0 169.4L58.5 174.7L59.0 167.0L59.5 170.4L60.0 164.7L60.5 170.4L61.0 166.9L61.5 172.1L62.0 168.2L62.5 172.3L63.0 164.9L63.5 174.4L64.0 168.3L64.5 170.7L65.0 168.0L65.5 176.6L66.0 170.4L66.5 174.9L67.0 169.2L67.5 171.6L68.0 168.6L68.5 172.8L69.0 168.6L69.5 174.6L70.0 166.8L70.5 171.2L71.0 168.4L71.5 171.9L72.0 164.6L72.5 176.3L73.0 168.1L73.5 172.8L74.0 163.9L74.5 172.2L75.0 164.1L75.5 170.7L76.0 166.5L76.5 169.6L77.0 165.6L77.5 172.2L78.0 165.7L78.5 170.7L79.0 167.3L79.5 170.9L80.0 166.6L80.5 173.3L81.0 168.4L81.5 169.8L82.0 168.7L82.5 170.8L83.0 165.5L83.5 173.7L84.0 163.5L84.5 172.6L85.0 164.8L85.5 170.3L86.0 165.7L86.5 170.2L87.0 164.5L87.5 173.0L88.0 163.1L88.5 167.5L89.0 161.3L89.5 167.1L90.0 163.2L90.5 171.5L91.0 163.3L91.5 169.0L92.0 160.7L92.5 168.1L93.0 166.9L93.5 174.0L94.0 163.8L94.5 173.5L95.0 168.9L95.5 174.9L96.0 166.6L96.5 176.3L97.0 168.2L97.5 172.3L98.0 167.8L98.5 171.9L99.0 168.0L99.5 172.8L100.0 166.0L100.5 173.1L101.0 168.1L101.5 174.4L102.0 167.3L102.5 173.4L103.0 167.8L103.5 172.7L104.0 167.9L104.5 173.7L105.0 163.5L105.5 172.8L106.0 163.8L106.5 171.5L107.0 166.6L107.5 171.0L108.0 166.9L108.5 170.7L109.0 165.7L109.5 170.3L110.0 165.0L110.5 173.7L111.0 162.9L111.5 170.9L112.0 165.0L112.5 173.9L113.0 167.0L113.5 173.4L114.0 165.9L114.5 172.1L115.0 166.9L115.5 176.3L116.0 168.5L116.5 172.2L117.0 167.8L117.5 172.7L118.0 163.0L118.5 175.3L119.0 166.1L119.5 171.5L120.0 165.7L120.5 173.6L121.0 164.7L121.5 173.1L122.0 163.5L122.5 172.1L123.0 166.7L123.5 170.8L124.0 167.4L124.5 173.1L125.0 165.3L125.5 172.2L126.0 165.1L126.5 170.9L127.0 167.4L127.5 172.2L128.0 164.6L128.5 174.2L129.0 169.3L129.5 174.9L130.0 166.6L130.5 171.3L131.0 167.2L131.5 171.1L132.0 167.5L132.5 172.9L133.0 168.6L133.5 174.5L134.0 168.5L134.5 172.2L135.0 167.4L135.5 174.7L136.0 168.1L136.5 172.5L137.0 166.6L137.5 172.9L138.0 169.9L138.5 176.1L139.0 169.5L139.5 173.4L140.0 170.3L140.5 178.4L141.0 171.0L141.5 173.2L142.0 168.4L142.5 173.2L143.0 168.8L143.5 177.3L144.0 169.2L144.5 174.0L145.0 166.6L145.5 175.1L146.0 170.5L146.5 172.5L147.0 164.4L147.5 172.3L148.0 165.8L148.5 172.3L149.0 168.4L149.5 174.2L150.0 170.9L150.5 172.9L151.0 167.9L151.5 172.1L152.0 167.2L152.5 174.7L153.0 162.5L153.5 170.8L154.0 167.8L154.5 172.7L155.0 170.3L155.5 181.3L156.0 162.0L156.5 171.4L157.0 168.7L157.5 172.9L158.0 170.4L158.5 172.2L159.0 169.0L159.5 171.0L160.0 168.3L160.5 172.3L161.0 171.1L161.5 171.8L162.0 169.6L162.5 172.9L163.0 169.1L163.5 172.4L164.0 169.2L164.5 174.6L165.0 169.8L165.5 172.2L166.0 169.4L166.5 172.2L167.0 171.1L167.5 173.7L168.0 169.8L168.5 174.2L169.0 170.5L169.5 172.4L170.0 169.3L170.5 171.4L171.0 167.6L171.5 171.7L172.0 166.4L172.5 169.7L173.0 167.7L173.5 172.4L174.0 167.5L174.5 170.6L175.0 166.0L175.5 173.4L176.0 168.3L176.5 173.6L177.0 168.5L177.5 172.2L178.0 166.5L178.5 172.5L179.0 166.1L179.5 172.0L180.0 167.1L180.5 174.0L181.0 169.5L181.5 172.2L182.0 168.4L182.5 170.1L183.0 168.5L183.5 171.5L184.0 167.2L184.5 169.9L185.0 165.7L185.5 169.5L186.0 165.0L186.5 169.4L187.0 164.7L187.5 167.6L188.0 165.4L188.5 167.8L189.0 164.0L189.5 168.9L190.0 161.9L190.5 167.4L191.0 161.4L191.5 163.4L192.0 166.4L192.5 161.6L193.0 161.6L193.5 165.8L194.0 163.3L194.5 166.6L195.0 163.8L195.5 169.2L196.0 163.9L196.5 169.4L197.0 162.5L197.5 169.0L198.0 165.5L198.5 171.2L199.0 167.0L199.5 170.8L200.0 168.8L200.5 171.0L201.0 166.9L201.5 172.0L202.0 164.0L202.5 171.9L203.0 166.9L203.5 172.2L204.0 167.4L204.5 171.2L205.0 166.5L205.5 169.5L206.0 165.9L206.5 169.8L207.0 166.3L207.5 170.2L208.0 164.2L208.5 170.1L209.0 166.3L209.5 170.4L210.0 167.7L210.5 171.5L211.0 166.3L211.5 172.0L212.0 167.7L212.5 169.4L213.0 167.9L213.5 171.2L214.0 166.9L214.5 170.0L215.0 167.7L215.5 170.3L216.0 166.6L216.5 170.7L217.0 164.5L217.5 169.6L218.0 163.4L218.5 167.2L219.0 163.1L219.5 167.9L220.0 163.0L220.5 165.7L221.0 161.5L221.5 165.6L222.0 162.3L222.5 166.5L223.0 163.0L223.5 170.4L224.0 162.8L224.5 167.8L225.0 164.6L225.5 167.3L226.0 163.8L226.5 168.4L227.0 164.5L227.5 169.6L228.0 166.2L228.5 169.0L229.0 167.3L229.5 169.2L230.0 167.0L230.5 171.3L231.0 167.2L231.5 172.1L232.0 168.0L232.5 172.7L233.0 164.7L233.5 171.9L234.0 169.4L234.5 172.1L235.0 167.8L235.5 172.8L236.0 169.7L236.5 171.2L237.0 167.4L237.5 172.2L238.0 170.2L238.5 172.6L239.0 169.8L239.5 178.0L240.0 170.9L240.5 174.5L241.0 171.3L241.5 174.7L242.0 172.6L242.5 174.9L243.0 173.3L243.5 176.0L244.0 172.3L244.5 177.1L245.0 172.8L245.5 174.8L246.0 170.7L246.5 178.3L247.0 169.3L247.5 173.2L248.0 165.8L248.5 173.2L249.0 169.0L249.5 174.2L250.0 169.6L250.5 175.0L251.0 166.5L251.5 173.5L252.0 167.6L252.5 173.9L253.0 166.8L253.5 174.3L254.0 169.7L254.5 174.5L255.0 168.6L255.5 172.4L256.0 167.0L256.5 171.1L257.0 175.7L257.5 168.3L258.0 165.3L258.5 173.5L259.0 163.6L259.5 175.2L260.0 168.0L260.5 177.0L261.0 167.8L261.5 173.4L262.0 166.0L262.5 173.3L263.0 167.0L263.5 171.3L264.0 166.3L264.5 170.0L265.0 166.4L265.5 174.5L266.0 163.5L266.5 170.3L267.0 169.3L267.5 169.7L268.0 163.5L268.5 171.7L269.0 168.5L269.5 172.2L270.0 165.1L270.5 170.2L271.0 163.5L271.5 172.3L272.0 165.2L272.5 172.4L273.0 165.2L273.5 170.6L274.0 165.3L274.5 175.1L275.0 163.4L275.5 169.4L276.0 173.4L276.5 169.0L277.0 164.9L277.5 175.5L278.0 164.4L278.5 173.6L279.0 167.7L279.5 173.9L280.0 162.2L280.5 170.9L281.0 165.1L281.5 168.9L282.0 164.4L282.5 169.0L283.0 164.4L283.5 172.5L284.0 168.5L284.5 174.6L285.0 166.8L285.5 175.7L286.0 165.3L286.5 170.6L287.0 159.8L287.5 167.2L288.0 163.2L288.5 169.8L289.0 163.2L289.5 168.0L290.0 165.4L290.5 174.4L291.0 167.9L291.5 170.4L292.0 164.1L292.5 172.7L293.0 167.1L293.5 171.2L294.0 166.8L294.5 171.7L295.0 166.3L295.5 175.9L296.0 166.7L296.5 174.9L297.0 169.3L297.5 173.2L298.0 169.2L298.5 171.6L299.0 168.1L299.5 172.3L300.0 169.7L300.5 174.6L301.0 166.8L301.5 172.1L302.0 163.7L302.5 172.8L303.0 170.4L303.5 176.9L304.0 169.9L304.5 177.3L305.0 169.4L305.5 173.1L306.0 169.8L306.5 173.0L307.0 167.4L307.5 174.8L308.0 168.2L308.5 169.7L309.0 166.5L309.5 169.5L310.0 166.5L310.5 174.1L311.0 168.2L311.5 174.6L312.0 165.5L312.5 171.5L313.0 163.9L313.5 168.3L314.0 163.3L314.5 172.3L315.0 164.2L315.5 170.1L316.0 165.6L316.5 168.6L317.0 162.9L317.5 170.4L318.0 162.0L318.5 173.1L319.0 167.9L319.5 170.2L320.0 167.8L320.5 171.8L321.0 169.8L321.5 172.6L322.0 161.0L322.5 179.0L323.0 169.1L323.5 174.2L324.0 167.6L324.5 171.2L325.0 167.3L325.5 171.2L326.0 168.6L326.5 172.1L327.0 165.4L327.5 173.7L328.0 162.7L328.5 175.0L329.0 166.4L329.5 173.3L330.0 165.4L330.5 169.7L331.0 174.6L331.5 164.6L332.0 167.1L332.5 170.5L333.0 164.2L333.5 171.2L334.0 167.6L334.5 170.6L335.0 166.3L335.5 170.9L336.0 167.4L336.5 173.3L337.0 168.8L337.5 172.7L338.0 166.6L338.5 169.9L339.0 166.3L339.5 172.0L340.0 167.7L340.5 171.6L341.0 167.9L341.5 172.5L342.0 167.4L342.5 174.8L343.0 165.6L343.5 174.0L344.0 168.3L344.5 171.7L345.0 163.9L345.5 174.0L346.0 167.6" stroke="#000" stroke-width="0.9"/><path d="M49.0 191.9L49.5 193.6L50.0 187.7L50.5 195.7L51.0 188.7L51.5 194.2L52.0 188.4L52.5 196.5L53.0 190.9L53.5 194.8L54.0 190.2L54.5 195.4L55.0 190.8L55.5 195.9L56.0 195.7L56.5 196.1L57.0 190.8L57.5 194.9L58.0 191.9L58.5 197.3L59.0 189.9L59.5 192.2L60.0 186.7L60.5 193.9L61.0 185.7L61.5 194.3L62.0 191.2L62.5 195.2L63.0 188.2L63.5 195.4L64.0 190.9L64.5 197.3L65.0 188.3L65.5 196.0L66.0 190.8L66.5 199.8L67.0 193.0L67.5 194.3L68.0 190.0L68.5 194.1L69.0 188.3L69.5 194.9L70.0 190.5L70.5 195.2L71.0 189.4L71.5 194.3L72.0 188.4L72.5 196.0L73.0 193.4L73.5 198.4L74.0 190.2L74.5 194.3L75.0 191.3L75.5 197.4L76.0 187.9L76.5 194.8L77.0 190.3L77.5 197.9L78.0 191.5L78.5 196.5L79.0 190.1L79.5 196.1L80.0 190.6L80.5 198.8L81.0 196.5L81.5 189.0L82.0 186.7L82.5 198.4L83.0 191.0L83.5 195.6L84.0 192.8L84.5 195.1L85.0 192.8L85.5 195.9L86.0 190.1L86.5 193.8L87.0 189.4L87.5 194.4L88.0 187.8L88.5 193.7L89.0 186.9L89.5 193.1L90.0 190.1L90.5 193.3L91.0 190.4L91.5 194.2L92.0 189.9L92.5 195.2L93.0 191.3L93.5 195.8L94.0 192.9L94.5 196.7L95.0 191.0L95.5 194.9L96.0 188.7L96.5 197.4L97.0 194.6L97.5 200.5L98.0 193.2L98.5 197.6L99.0 191.7L99.5 197.9L100.0 191.1L100.5 195.6L101.0 192.4L101.5 197.1L102.0 188.3L102.5 196.7L103.0 192.3L103.5 196.8L104.0 192.5L104.5 193.9L105.0 189.7L105.5 192.6L106.0 187.5L106.5 191.6L107.0 184.0L107.5 192.6L108.0 185.0L108.5 196.0L109.0 189.4L109.5 193.8L110.0 184.7L110.5 196.3L111.0 188.5L111.5 194.4L112.0 190.5L112.5 198.2L113.0 190.9L113.5 195.4L114.0 190.1L114.5 198.7L115.0 190.5L115.5 195.8L116.0 189.4L116.5 196.2L117.0 191.8L117.5 195.8L118.0 189.8L118.5 197.3L119.0 192.1L119.5 198.8L120.0 191.1L120.5 197.2L121.0 189.5L121.5 195.7L122.0 191.6L122.5 194.6L123.0 187.9L123.5 197.7L124.0 189.0L124.5 194.5L125.0 189.7L125.5 196.4L126.0 191.4L126.5 197.4L127.0 187.8L127.5 196.9L128.0 191.1L128.5 196.5L129.0 193.7L129.5 201.3L130.0 191.0L130.5 196.1L131.0 192.3L131.5 197.3L132.0 188.8L132.5 196.6L133.0 193.3L133.5 199.7L134.0 189.2L134.5 198.3L135.0 190.6L135.5 195.7L136.0 191.6L136.5 196.0L137.0 192.5L137.5 198.2L138.0 193.8L138.5 200.5L139.0 191.7L139.5 200.6L140.0 194.6L140.5 201.1L141.0 196.2L141.5 200.1L142.0 191.0L142.5 199.3L143.0 192.6L143.5 196.8L144.0 191.3L144.5 196.7L145.0 192.0L145.5 195.9L146.0 192.7L146.5 198.6L147.0 192.2L147.5 195.1L148.0 191.3L148.5 197.3L149.0 191.4L149.5 197.9L150.0 193.9L150.5 196.6L151.0 191.2L151.5 195.4L152.0 190.5L152.5 194.9L153.0 191.3L153.5 196.4L154.0 192.9L154.5 198.0L155.0 193.1L155.5 203.9L156.0 186.9L156.5 196.6L157.0 191.6L157.5 197.8L158.0 192.8L158.5 196.7L159.0 191.9L159.5 196.7L160.0 194.2L160.5 198.9L161.0 195.8L161.5 197.1L162.0 192.7L162.5 197.4L163.0 189.7L163.5 196.3L164.0 193.9L164.5 196.9L165.0 193.4L165.5 197.4L166.0 195.3L166.5 196.4L167.0 194.6L167.5 197.5L168.0 193.1L168.5 197.3L169.0 194.0L169.5 196.5L170.0 192.3L170.5 194.9L171.0 192.0L171.5 194.8L172.0 188.7L172.5 193.4L173.0 190.0L173.5 192.3L174.0 190.5L174.5 193.0L175.0 190.3L175.5 193.4L176.0 191.0L176.5 194.3L177.0 192.9L177.5 196.3L178.0 192.2L178.5 194.3L179.0 191.6L179.5 196.7L180.0 189.5L180.5 194.2L181.0 191.1L181.5 196.3L182.0 189.5L182.5 192.5L183.0 190.2L183.5 192.6L184.0 189.0L184.5 194.3L185.0 189.6L185.5 193.8L186.0 187.1L186.5 192.4L187.0 186.7L187.5 189.7L188.0 188.4L188.5 190.9L189.0 186.4L189.5 188.6L190.0 185.4L190.5 191.0L191.0 182.7L191.5 187.5L192.0 190.1L192.5 188.2L193.0 186.4L193.5 193.2L194.0 185.6L194.5 193.2L195.0 187.8L195.5 192.5L196.0 187.4L196.5 192.1L197.0 186.9L197.5 194.8L198.0 190.6L198.5 194.9L199.0 188.3L199.5 192.5L200.0 191.3L200.5 195.1L201.0 191.0L201.5 195.1L202.0 189.4L202.5 193.9L203.0 190.5L203.5 198.8L204.0 189.3L204.5 198.2L205.0 186.8L205.5 195.9L206.0 192.6L206.5 198.4L207.0 192.9L207.5 196.3L208.0 192.1L208.5 194.3L209.0 192.3L209.5 196.9L210.0 194.5L210.5 195.7L211.0 191.5L211.5 195.8L212.0 190.5L212.5 194.5L213.0 188.8L213.5 195.6L214.0 188.4L214.5 193.3L215.0 190.3L215.5 196.2L216.0 191.1L216.5 193.6L217.0 190.0L217.5 192.9L218.0 187.6L218.5 191.4L219.0 185.5L219.5 188.9L220.0 186.4L220.5 188.3L221.0 183.8L221.5 187.5L222.0 184.5L222.5 190.1L223.0 184.9L223.5 190.2L224.0 184.4L224.5 189.4L225.0 187.1L225.5 190.1L226.0 188.5L226.5 192.7L227.0 190.2L227.5 194.7L228.0 189.7L228.5 194.6L229.0 189.0L229.5 192.8L230.0 188.9L230.5 192.2L231.0 188.2L231.5 194.1L232.0 190.0L232.5 192.5L233.0 191.0L233.5 196.3L234.0 192.1L234.5 198.3L235.0 190.5L235.5 195.5L236.0 191.6L236.5 195.1L237.0 194.3L237.5 195.5L238.0 191.0L238.5 196.8L239.0 193.6L239.5 198.8L240.0 192.9L240.5 198.8L241.0 193.9L241.5 200.9L242.0 196.8L242.5 200.5L243.0 193.1L243.5 201.2L244.0 197.8L244.5 200.1L245.0 195.9L245.5 198.3L246.0 194.4L246.5 196.3L247.0 190.1L247.5 196.2L248.0 192.5L248.5 197.0L249.0 193.5L249.5 197.7L250.0 191.7L250.5 199.2L251.0 191.2L251.5 196.7L252.0 189.9L252.5 196.6L253.0 190.9L253.5 196.6L254.0 193.0L254.5 198.3L255.0 190.3L255.5 195.3L256.0 188.4L256.5 193.8L257.0 198.4L257.5 187.8L258.0 188.6L258.5 198.7L259.0 191.6L259.5 196.9L260.0 193.2L260.5 195.9L261.0 191.0L261.5 197.1L262.0 191.8L262.5 194.6L263.0 190.8L263.5 196.6L264.0 189.5L264.5 194.6L265.0 189.4L265.5 195.5L266.0 192.0L266.5 195.5L267.0 191.1L267.5 193.9L268.0 191.0L268.5 197.5L269.0 192.8L269.5 196.9L270.0 190.2L270.5 194.6L271.0 188.2L271.5 194.5L272.0 189.2L272.5 196.1L273.0 190.3L273.5 195.6L274.0 186.2L274.5 192.8L275.0 188.8L275.5 197.3L276.0 193.3L276.5 192.2L277.0 188.3L277.5 193.1L278.0 190.8L278.5 196.9L279.0 187.0L279.5 197.8L280.0 185.1L280.5 196.6L281.0 187.8L281.5 198.3L282.0 185.6L282.5 196.6L283.0 189.1L283.5 195.9L284.0 191.6L284.5 201.2L285.0 190.2L285.5 196.3L286.0 189.2L286.5 195.5L287.0 187.8L287.5 192.8L288.0 186.6L288.5 192.6L289.0 189.9L289.5 193.1L290.0 188.9L290.5 197.0L291.0 188.7L291.5 199.0L292.0 191.2L292.5 194.8L293.0 188.2L293.5 197.6L294.0 190.5L294.5 197.2L295.0 192.4L295.5 195.4L296.0 192.9L296.5 195.1L297.0 190.3L297.5 200.6L298.0 192.6L298.5 196.0L299.0 191.3L299.5 195.8L300.0 186.0L300.5 197.6L301.0 191.6L301.5 198.9L302.0 191.8L302.5 196.7L303.0 193.3L303.5 196.4L304.0 192.5L304.5 198.8L305.0 194.3L305.5 196.6L306.0 190.5L306.5 196.2L307.0 193.2L307.5 198.1L308.0 194.3L308.5 196.7L309.0 193.7L309.5 197.0L310.0 191.1L310.5 197.1L311.0 193.0L311.5 199.9L312.0 190.6L312.5 195.7L313.0 190.9L313.5 196.4L314.0 189.6L314.5 194.9L315.0 191.3L315.5 192.6L316.0 189.5L316.5 193.7L317.0 189.1L317.5 193.4L318.0 189.9L318.5 195.7L319.0 189.0L319.5 195.1L320.0 188.9L320.5 194.1L321.0 190.9L321.5 194.5L322.0 182.5L322.5 200.0L323.0 192.2L323.5 200.1L324.0 190.9L324.5 195.1L325.0 187.2L325.5 195.0L326.0 191.8L326.5 193.7L327.0 189.6L327.5 195.0L328.0 187.4L328.5 189.9L329.0 187.8L329.5 195.0L330.0 185.7L330.5 200.1L331.0 198.9L331.5 188.2L332.0 192.1L332.5 196.3L333.0 190.2L333.5 196.5L334.0 191.9L334.5 194.4L335.0 184.9L335.5 193.4L336.0 189.1L336.5 193.5L337.0 191.6L337.5 195.9L338.0 191.4L338.5 199.3L339.0 189.5L339.5 198.1L340.0 190.7L340.5 197.3L341.0 188.1L341.5 196.4L342.0 190.9L342.5 195.4L343.0 192.3L343.5 196.8L344.0 191.7L344.5 194.1L345.0 190.4L345.5 196.3L346.0 190.3" stroke="#000" stroke-width="0.9"/><path d="M49.0 213.1L49.5 221.8L50.0 214.9L50.5 218.0L51.0 213.1L51.5 218.6L52.0 208.5L52.5 219.3L53.0 213.9L53.5 219.2L54.0 215.5L54.5 221.2L55.0 216.1L55.5 221.9L56.0 216.9L56.5 222.1L57.0 214.7L57.5 219.0L58.0 214.6L58.5 224.4L59.0 214.8L59.5 219.6L60.0 215.1L60.5 222.1L61.0 214.8L61.5 219.5L62.0 214.4L62.5 219.1L63.0 211.3L63.5 219.4L64.0 216.0L64.5 217.5L65.0 210.1L65.5 219.9L66.0 217.3L66.5 223.1L67.0 216.6L67.5 223.0L68.0 214.8L68.5 219.8L69.0 214.5L69.5 221.3L70.0 216.4L70.5 219.1L71.0 215.1L71.5 220.8L72.0 216.2L72.5 221.1L73.0 216.3L73.5 219.1L74.0 216.6L74.5 220.5L75.0 215.2L75.5 220.8L76.0 216.0L76.5 220.3L77.0 214.0L77.5 218.7L78.0 210.5L78.5 217.3L79.0 214.1L79.5 216.4L80.0 211.8L80.5 223.7L81.0 222.2L81.5 215.7L82.0 217.2L82.5 221.4L83.0 213.9L83.5 216.8L84.0 214.8L84.5 220.2L85.0 215.5L85.5 218.2L86.0 211.5L86.5 219.9L87.0 208.4L87.5 216.9L88.0 213.3L88.5 216.7L89.0 212.4L89.5 218.5L90.0 213.6L90.5 217.2L91.0 213.0L91.5 217.7L92.0 210.4L92.5 217.8L93.0 214.8L93.5 219.6L94.0 213.8L94.5 219.7L95.0 216.3L95.5 218.9L96.0 213.6L96.5 219.7L97.0 216.0L97.5 219.2L98.0 214.0L98.5 217.9L99.0 213.8L99.5 220.7L100.0 215.0L100.5 217.3L101.0 213.4L101.5 220.8L102.0 213.6L102.5 221.1L103.0 213.6L103.5 220.5L104.0 214.5L104.5 217.8L105.0 210.2L105.5 217.0L106.0 209.9L106.5 216.7L107.0 209.6L107.5 216.4L108.0 215.4L108.5 220.0L109.0 215.2L109.5 217.6L110.0 213.7L110.5 218.5L111.0 211.0L111.5 218.6L112.0 216.6L112.5 219.5L113.0 217.1L113.5 219.2L114.0 214.6L114.5 221.1L115.0 214.7L115.5 221.1L116.0 216.3L116.5 219.7L117.0 216.0L117.5 218.8L118.0 216.5L118.5 221.3L119.0 217.4L119.5 219.2L120.0 214.9L120.5 218.9L121.0 215.1L121.5 222.8L122.0 216.5L122.5 223.9L123.0 212.4L123.5 218.7L124.0 217.2L124.5 220.8L125.0 214.0L125.5 218.7L126.0 214.7L126.5 220.3L127.0 214.0L127.5 219.1L128.0 214.0L128.5 219.0L129.0 216.4L129.5 219.3L130.0 215.2L130.5 218.5L131.0 214.7L131.5 223.3L132.0 215.7L132.5 218.9L133.0 215.9L133.5 219.7L134.0 216.0L134.5 218.6L135.0 213.7L135.5 218.1L136.0 214.7L136.5 220.3L137.0 216.8L137.5 224.4L138.0 219.6L138.5 222.9L139.0 217.4L139.5 220.6L140.0 218.5L140.5 222.8L141.0 216.0L141.5 222.4L142.0 214.5L142.5 221.4L143.0 214.2L143.5 220.2L144.0 213.2L144.5 219.2L145.0 214.2L145.5 221.0L146.0 216.1L146.5 219.5L147.0 214.0L147.5 219.3L148.0 216.8L148.5 219.4L149.0 213.9L149.5 219.0L150.0 217.1L150.5 218.2L151.0 213.9L151.5 218.1L152.0 214.9L152.5 219.2L153.0 216.6L153.5 220.4L154.0 216.6L154.5 219.7L155.0 215.0L155.5 227.7L156.0 207.8L156.5 220.0L157.0 216.9L157.5 219.5L158.0 215.8L158.5 221.4L159.0 217.2L159.5 220.3L160.0 217.5L160.5 218.6L161.0 217.3L161.5 223.3L162.0 217.8L162.5 220.2L163.0 218.2L163.5 220.9L164.0 218.9L164.5 222.1L165.0 216.6L165.5 219.6L166.0 218.1L166.5 219.6L167.0 217.8L167.5 221.1L168.0 217.1L168.5 219.1L169.0 216.3L169.5 220.1L170.0 217.3L170.5 219.0L171.0 214.9L171.5 219.0L172.0 216.2L172.5 217.0L173.0 214.3L173.5 216.7L174.0 216.3L174.5 217.9L175.0 215.3L175.5 218.1L176.0 214.3L176.5 218.8L177.0 217.0L177.5 218.8L178.0 216.3L178.5 218.3L179.0 215.2L179.5 218.3L180.0 216.6L180.5 218.3L181.0 216.9L181.5 220.1L182.0 215.3L182.5 218.1L183.0 215.5L183.5 222.1L184.0 216.9L184.5 220.7L185.0 215.8L185.5 219.5L186.0 216.0L186.5 219.2L187.0 212.7L187.5 217.8L188.0 212.5L188.5 216.5L189.0 212.4L189.5 213.9L190.0 210.2L190.5 212.3L191.0 209.0L191.5 211.7L192.0 212.1L192.5 210.9L193.0 209.7L193.5 213.7L194.0 209.2L194.5 214.4L195.0 211.3L195.5 215.6L196.0 211.5L196.5 217.5L197.0 214.5L197.5 218.9L198.0 216.3L198.5 219.9L199.0 214.9L199.5 218.8L200.0 214.4L200.5 220.3L201.0 216.6L201.5 219.6L202.0 214.2L202.5 219.6L203.0 210.1L203.5 219.9L204.0 216.0L204.5 218.6L205.0 215.1L205.5 217.8L206.0 216.7L206.5 221.6L207.0 214.5L207.5 218.6L208.0 213.7L208.5 218.2L209.0 215.1L209.5 218.5L210.0 214.7L210.5 219.2L211.0 215.0L211.5 220.3L212.0 217.5L212.5 220.5L213.0 215.3L213.5 222.2L214.0 216.6L214.5 220.3L215.0 214.8L215.5 218.0L216.0 212.8L216.5 219.7L217.0 213.4L217.5 215.4L218.0 211.2L218.5 215.1L219.0 211.0L219.5 214.7L220.0 212.8L220.5 212.8L221.0 210.7L221.5 212.1L222.0 210.6L222.5 211.2L223.0 209.4L223.5 211.5L224.0 210.0L224.5 212.1L225.0 209.4L225.5 214.5L226.0 209.3L226.5 214.5L227.0 213.3L227.5 217.1L228.0 213.0L228.5 216.6L229.0 214.0L229.5 216.6L230.0 214.9L230.5 218.9L231.0 214.8L231.5 218.9L232.0 215.0L232.5 217.8L233.0 215.1L233.5 218.1L234.0 216.5L234.5 220.0L235.0 217.1L235.5 221.6L236.0 215.3L236.5 218.1L237.0 216.0L237.5 218.3L238.0 217.9L238.5 221.1L239.0 213.1L239.5 220.1L240.0 217.1L240.5 222.0L241.0 218.4L241.5 221.8L242.0 218.8L242.5 221.8L243.0 218.9L243.5 225.5L244.0 221.4L244.5 222.5L245.0 220.7L245.5 223.5L246.0 218.6L246.5 221.5L247.0 216.6L247.5 220.1L248.0 212.5L248.5 219.5L249.0 215.3L249.5 220.4L250.0 216.0L250.5 218.3L251.0 214.5L251.5 221.3L252.0 212.7L252.5 220.2L253.0 217.5L253.5 219.5L254.0 217.2L254.5 223.9L255.0 214.1L255.5 219.7L256.0 214.6L256.5 221.2L257.0 222.9L257.5 215.7L258.0 214.1L258.5 219.5L259.0 211.9L259.5 219.9L260.0 216.1L260.5 222.3L261.0 211.4L261.5 221.8L262.0 215.3L262.5 220.0L263.0 215.3L263.5 222.1L264.0 217.0L264.5 222.2L265.0 217.1L265.5 219.5L266.0 215.0L266.5 220.4L267.0 217.5L267.5 215.7L268.0 216.9L268.5 222.4L269.0 216.4L269.5 221.3L270.0 216.0L270.5 218.7L271.0 213.7L271.5 221.8L272.0 214.5L272.5 220.4L273.0 213.0L273.5 219.3L274.0 214.5L274.5 219.8L275.0 212.6L275.5 217.6L276.0 219.8L276.5 214.3L277.0 212.4L277.5 219.6L278.0 211.1L278.5 221.1L279.0 212.8L279.5 218.0L280.0 212.5L280.5 220.1L281.0 214.0L281.5 218.4L282.0 210.9L282.5 217.7L283.0 213.9L283.5 218.7L284.0 213.9L284.5 222.8L285.0 216.2L285.5 219.4L286.0 214.1L286.5 219.8L287.0 212.2L287.5 217.3L288.0 213.7L288.5 216.7L289.0 214.4L289.5 219.5L290.0 215.9L290.5 218.3L291.0 214.9L291.5 218.2L292.0 213.9L292.5 218.2L293.0 213.6L293.5 218.3L294.0 212.3L294.5 219.7L295.0 216.6L295.5 221.6L296.0 216.4L296.5 220.1L297.0 215.6L297.5 220.8L298.0 215.9L298.5 219.5L299.0 216.1L299.5 218.7L300.0 216.1L300.5 220.7L301.0 215.3L301.5 219.3L302.0 214.8L302.5 216.4L303.0 215.2L303.5 219.4L304.0 213.9L304.5 221.4L305.0 214.2L305.5 218.1L306.0 212.1L306.5 218.7L307.0 216.9L307.5 221.9L308.0 216.5L308.5 219.7L309.0 213.4L309.5 218.0L310.0 212.9L310.5 219.9L311.0 215.7L311.5 219.5L312.0 213.7L312.5 220.7L313.0 215.2L313.5 216.6L314.0 214.1L314.5 216.5L315.0 213.2L315.5 217.1L316.0 211.9L316.5 216.9L317.0 213.8L317.5 217.1L318.0 212.9L318.5 216.6L319.0 214.2L319.5 216.4L320.0 212.5L320.5 218.5L321.0 215.7L321.5 220.0L322.0 209.3L322.5 224.0L323.0 214.6L323.5 218.2L324.0 216.1L324.5 223.0L325.0 215.1L325.5 217.2L326.0 216.1L326.5 216.9L327.0 213.4L327.5 216.5L328.0 212.4L328.5 215.8L329.0 210.5L329.5 216.4L330.0 212.8L330.5 216.8L331.0 219.8L331.5 212.8L332.0 214.0L332.5 218.2L333.0 215.2L333.5 219.9L334.0 215.3L334.5 220.0L335.0 214.9L335.5 216.9L336.0 214.6L336.5 220.0L337.0 214.2L337.5 216.8L338.0 213.0L338.5 218.8L339.0 213.8L339.5 216.7L340.0 210.3L340.5 220.4L341.0 211.0L341.5 221.1L342.0 216.7L342.5 219.8L343.0 217.6L343.5 222.1L344.0 215.3L344.5 219.3L345.0 214.8L345.5 219.0L346.0 212.7" stroke="#000" stroke-width="0.9"/><path d="M49.0 239.5L49.5 244.3L50.0 236.4L50.5 244.1L51.0 237.9L51.5 241.2L52.0 239.6L52.5 242.2L53.0 240.4L53.5 242.3L54.0 238.2L54.5 240.7L55.0 239.3L55.5 242.6L56.0 241.4L56.5 246.5L57.0 239.1L57.5 244.1L58.0 237.8L58.5 242.5L59.0 236.8L59.5 239.7L60.0 237.4L60.5 241.3L61.0 235.9L61.5 245.3L62.0 235.1L62.5 244.0L63.0 234.9L63.5 244.1L64.0 239.2L64.5 247.7L65.0 238.3L65.5 243.6L66.0 239.6L66.5 242.6L67.0 238.7L67.5 240.9L68.0 238.6L68.5 245.5L69.0 239.3L69.5 244.2L70.0 237.1L70.5 244.6L71.0 237.7L71.5 245.3L72.0 240.8L72.5 245.7L73.0 238.5L73.5 243.5L74.0 240.2L74.5 241.3L75.0 237.4L75.5 242.6L76.0 237.6L76.5 242.1L77.0 235.8L77.5 241.4L78.0 238.9L78.5 241.6L79.0 235.3L79.5 245.4L80.0 240.5L80.5 244.4L81.0 245.9L81.5 238.2L82.0 238.6L82.5 244.5L83.0 238.6L83.5 244.1L84.0 237.7L84.5 239.9L85.0 238.1L85.5 240.8L86.0 236.4L86.5 241.2L87.0 236.9L87.5 241.6L88.0 236.3L88.5 238.9L89.0 234.7L89.5 243.0L90.0 233.1L90.5 238.2L91.0 235.2L91.5 238.9L92.0 236.9L92.5 242.0L93.0 237.9L93.5 243.9L94.0 238.9L94.5 243.7L95.0 239.7L95.5 243.0L96.0 240.5L96.5 245.1L97.0 242.0L97.5 243.8L98.0 236.8L98.5 243.3L99.0 236.7L99.5 247.5L100.0 238.3L100.5 243.2L101.0 239.0L101.5 244.0L102.0 235.5L102.5 242.8L103.0 237.0L103.5 243.6L104.0 235.8L104.5 241.0L105.0 235.3L105.5 241.8L106.0 236.0L106.5 239.6L107.0 234.9L107.5 241.6L108.0 236.3L108.5 240.2L109.0 234.2L109.5 240.3L110.0 237.2L110.5 241.5L111.0 235.6L111.5 242.5L112.0 234.8L112.5 243.8L113.0 238.7L113.5 243.0L114.0 239.9L114.5 244.8L115.0 239.4L115.5 242.3L116.0 237.6L116.5 242.8L117.0 236.6L117.5 241.4L118.0 238.3L118.5 243.3L119.0 240.3L119.5 242.8L120.0 238.8L120.5 241.5L121.0 236.0L121.5 248.0L122.0 238.8L122.5 241.8L123.0 236.7L123.5 241.6L124.0 234.2L124.5 242.2L125.0 236.6L125.5 245.6L126.0 238.0L126.5 241.3L127.0 236.8L127.5 239.5L128.0 234.3L128.5 241.0L129.0 235.6L129.5 242.4L130.0 237.3L130.5 243.1L131.0 238.3L131.5 243.0L132.0 238.0L132.5 243.7L133.0 240.1L133.5 243.1L134.0 237.2L134.5 242.5L135.0 239.0L135.5 242.7L136.0 239.4L136.5 243.1L137.0 239.3L137.5 244.2L138.0 237.8L138.5 246.0L139.0 241.2L139.5 244.3L140.0 241.0L140.5 244.3L141.0 242.0L141.5 246.2L142.0 241.8L142.5 247.8L143.0 240.4L143.5 242.9L144.0 237.5L144.5 242.0L145.0 238.6L145.5 243.7L146.0 240.3L146.5 243.1L147.0 238.0L147.5 242.4L148.0 239.6L148.5 243.2L149.0 239.2L149.5 243.1L150.0 239.0L150.5 242.4L151.0 235.0L151.5 241.2L152.0 238.2L152.5 243.7L153.0 239.1L153.5 242.5L154.0 239.6L154.5 243.8L155.0 236.7L155.5 251.0L156.0 231.7L156.5 241.4L157.0 236.5L157.5 242.6L158.0 239.8L158.5 243.0L159.0 237.0L159.5 241.6L160.0 238.7L160.5 241.7L161.0 239.8L161.5 243.6L162.0 241.5L162.5 244.3L163.0 241.1L163.5 244.0L164.0 243.3L164.5 245.5L165.0 243.0L165.5 244.6L166.0 241.4L166.5 244.6L167.0 243.0L167.5 245.4L168.0 242.8L168.5 246.1L169.0 241.4L169.5 243.5L170.0 241.5L170.5 242.8L171.0 239.4L171.5 243.7L172.0 238.3L172.5 239.6L173.0 238.6L173.5 241.7L174.0 239.2L174.5 242.6L175.0 240.1L175.5 245.6L176.0 241.6L176.5 244.4L177.0 238.6L177.5 242.5L178.0 239.2L178.5 242.0L179.0 238.9L179.5 241.7L180.0 239.4L180.5 243.4L181.0 238.5L181.5 240.8L182.0 236.3L182.5 241.3L183.0 237.3L183.5 241.8L184.0 238.7L184.5 242.6L185.0 237.3L185.5 240.7L186.0 236.6L186.5 240.4L187.0 236.3L187.5 237.8L188.0 237.4L188.5 239.3L189.0 235.0L189.5 237.5L190.0 232.1L190.5 238.3L191.0 233.3L191.5 235.5L192.0 237.2L192.5 233.0L193.0 233.8L193.5 239.4L194.0 235.7L194.5 237.4L195.0 234.5L195.5 238.6L196.0 234.3L196.5 239.7L197.0 236.3L197.5 243.0L198.0 239.1L198.5 242.0L199.0 238.4L199.5 242.1L200.0 239.0L200.5 242.1L201.0 238.9L201.5 242.6L202.0 238.3L202.5 242.3L203.0 239.8L203.5 243.2L204.0 237.8L204.5 242.3L205.0 239.1L205.5 241.4L206.0 236.6L206.5 242.0L207.0 239.9L207.5 245.3L208.0 237.4L208.5 241.9L209.0 238.2L209.5 240.8L210.0 238.4L210.5 244.0L211.0 238.3L211.5 242.0L212.0 238.4L212.5 240.2L213.0 238.0L213.5 242.3L214.0 237.7L214.5 240.3L215.0 238.1L215.5 240.6L216.0 235.4L216.5 239.5L217.0 235.5L217.5 240.4L218.0 236.8L218.5 238.9L219.0 234.6L219.5 240.5L220.0 233.8L220.5 234.8L221.0 231.7L221.5 234.7L222.0 232.7L222.5 236.1L223.0 232.7L223.5 236.6L224.0 230.1L224.5 237.4L225.0 232.5L225.5 238.9L226.0 235.1L226.5 238.2L227.0 236.1L227.5 240.3L228.0 237.3L228.5 240.9L229.0 238.3L229.5 240.7L230.0 238.6L230.5 243.4L231.0 237.8L231.5 240.6L232.0 239.6L232.5 240.4L233.0 239.0L233.5 240.5L234.0 236.6L234.5 242.9L235.0 237.2L235.5 245.0L236.0 239.9L236.5 242.2L237.0 240.2L237.5 243.1L238.0 240.9L238.5 245.3L239.0 240.8L239.5 245.2L240.0 241.3L240.5 246.2L241.0 244.6L241.5 247.8L242.0 245.1L242.5 249.4L243.0 241.4L243.5 249.5L244.0 246.3L244.5 248.2L245.0 243.7L245.5 247.1L246.0 241.8L246.5 243.6L247.0 237.5L247.5 242.8L248.0 238.9L248.5 247.1L249.0 235.5L249.5 244.5L250.0 238.1L250.5 242.8L251.0 239.9L251.5 246.1L252.0 240.3L252.5 242.8L253.0 240.6L253.5 244.7L254.0 238.6L254.5 244.0L255.0 237.5L255.5 242.8L256.0 239.1L256.5 243.6L257.0 243.7L257.5 235.2L258.0 238.8L258.5 241.9L259.0 237.7L259.5 243.0L260.0 239.5L260.5 243.1L261.0 239.4L261.5 243.7L262.0 238.1L262.5 241.0L263.0 234.8L263.5 243.3L264.0 237.9L264.5 244.0L265.0 239.1L265.5 243.4L266.0 238.9L266.5 242.9L267.0 243.8L267.5 237.1L268.0 238.6L268.5 241.8L269.0 235.5L269.5 243.8L270.0 239.4L270.5 242.8L271.0 237.8L271.5 244.6L272.0 235.7L272.5 243.5L273.0 238.4L273.5 242.7L274.0 236.8L274.5 240.8L275.0 235.8L275.5 242.4L276.0 242.4L276.5 238.0L277.0 239.1L277.5 245.5L278.0 237.6L278.5 241.2L279.0 237.5L279.5 244.6L280.0 237.8L280.5 241.6L281.0 235.8L281.5 240.3L282.0 238.1L282.5 243.0L283.0 239.3L283.5 242.7L284.0 237.9L284.5 244.3L285.0 239.9L285.5 244.3L286.0 235.9L286.5 245.9L287.0 237.6L287.5 240.0L288.0 237.7L288.5 239.5L289.0 238.4L289.5 245.9L290.0 238.9L290.5 245.3L291.0 236.9L291.5 241.4L292.0 238.8L292.5 241.6L293.0 235.7L293.5 242.2L294.0 239.4L294.5 246.0L295.0 235.3L295.5 245.2L296.0 239.8L296.5 243.6L297.0 240.5L297.5 243.0L298.0 240.0L298.5 242.1L299.0 239.0L299.5 242.5L300.0 240.4L300.5 244.8L301.0 236.8L301.5 243.3L302.0 238.6L302.5 243.7L303.0 239.2L303.5 245.4L304.0 242.8L304.5 243.5L305.0 241.3L305.5 245.3L306.0 237.5L306.5 244.2L307.0 239.1L307.5 243.4L308.0 240.8L308.5 242.2L309.0 235.8L309.5 241.0L310.0 235.7L310.5 244.3L311.0 241.0L311.5 246.7L312.0 238.7L312.5 242.8L313.0 237.2L313.5 240.5L314.0 237.9L314.5 240.1L315.0 235.7L315.5 240.1L316.0 234.4L316.5 242.0L317.0 236.8L317.5 241.9L318.0 236.2L318.5 240.7L319.0 235.1L319.5 239.9L320.0 236.0L320.5 242.4L321.0 238.7L321.5 244.4L322.0 231.2L322.5 246.1L323.0 236.0L323.5 242.3L324.0 238.5L324.5 241.9L325.0 237.2L325.5 241.7L326.0 238.5L326.5 240.9L327.0 236.1L327.5 242.4L328.0 231.1L328.5 240.0L329.0 233.3L329.5 240.5L330.0 236.1L330.5 239.9L331.0 243.3L331.5 238.3L332.0 236.7L332.5 241.1L333.0 238.0L333.5 241.1L334.0 239.4L334.5 241.5L335.0 237.3L335.5 240.3L336.0 236.5L336.5 242.6L337.0 238.9L337.5 241.8L338.0 236.2L338.5 241.1L339.0 236.5L339.5 241.9L340.0 236.7L340.5 243.9L341.0 239.5L341.5 245.5L342.0 241.7L342.5 244.4L343.0 240.4L343.5 246.4L344.0 240.1L344.5 243.3L345.0 240.1L345.5 243.2L346.0 241.8" stroke="#000" stroke-width="0.9"/><path d="M544.500 104V96" stroke="#000" stroke-width="1.300"/><path d="M49.0 266.3L49.5 263.1L50.0 259.3L50.5 261.7L51.0 263.4L51.5 258.5L52.0 259.7L52.5 264.2L53.0 264.9L53.5 264.4L54.0 266.1L54.5 261.0L55.0 260.7L55.5 258.9L56.0 264.2L56.5 261.1L57.0 264.2L57.5 258.1L58.0 258.6L58.5 258.8L59.0 262.7L59.5 262.6L60.0 260.6L60.5 265.8L61.0 265.2L61.5 261.1L62.0 261.1L62.5 263.4L63.0 261.7L63.5 264.6L64.0 263.7L64.5 261.2L65.0 261.5L65.5 260.0L66.0 263.6L66.5 265.8L67.0 265.3L67.5 261.7L68.0 255.8L68.5 259.5L69.0 264.9L69.5 259.7L70.0 264.9L70.5 263.0L71.0 263.4L71.5 264.9L72.0 265.0L72.5 264.9L73.0 264.8L73.5 261.6L74.0 259.5L74.5 259.3L75.0 265.0L75.5 265.8L76.0 265.9L76.5 261.6L77.0 258.0L77.5 261.0L78.0 264.5L78.5 264.0L79.0 263.6L79.5 263.2L80.0 260.6L80.5 261.7L81.0 261.9L81.5 254.8L82.0 255.1L82.5 257.9L83.0 262.1L83.5 262.6L84.0 259.3L84.5 263.0L85.0 259.9L85.5 257.4L86.0 254.2L86.5 260.0L87.0 263.3L87.5 260.7L88.0 262.2L88.5 262.8L89.0 260.3L89.5 258.1L90.0 260.3L90.5 261.0L91.0 264.1L91.5 267.4L92.0 268.1L92.5 268.9L93.0 264.9L93.5 261.4L94.0 262.4L94.5 262.3L95.0 263.1L95.5 263.3L96.0 269.6L96.5 267.9L97.0 266.2L97.5 266.6L98.0 266.9L98.5 261.7L99.0 256.3L99.5 256.4L100.0 257.4L100.5 258.6L101.0 260.9L101.5 265.6L102.0 265.8L102.5 269.2L103.0 265.9L103.5 262.7L104.0 266.7L104.5 268.2L105.0 268.6L105.5 267.9L106.0 269.7L106.5 267.5L107.0 272.1L107.5 268.0L108.0 267.5L108.5 267.8L109.0 265.5L109.5 265.8L110.0 263.0L110.5 265.1L111.0 266.3L111.5 264.2L112.0 262.8L112.5 267.6L113.0 266.3L113.5 264.7L114.0 262.2L114.5 261.0L115.0 261.2L115.5 256.2L116.0 261.3L116.5 266.0L117.0 264.3L117.5 267.5L118.0 265.2L118.5 267.3L119.0 260.1L119.5 265.6L120.0 265.3L120.5 264.3L121.0 262.5L121.5 260.2L122.0 260.9L122.5 262.4L123.0 264.9L123.5 260.9L124.0 259.5L124.5 253.8L125.0 260.8L125.5 260.5L126.0 258.9L126.5 255.3L127.0 258.0L127.5 258.6L128.0 257.2L128.5 261.0L129.0 259.4L129.5 258.3L130.0 260.8L130.5 261.4L131.0 261.3L131.5 258.3L132.0 262.9L132.5 261.5L133.0 261.9L133.5 262.7L134.0 265.3L134.5 262.5L135.0 260.0L135.5 259.0L136.0 258.0L136.5 263.2L137.0 264.2L137.5 260.2L138.0 254.6L138.5 257.7L139.0 260.3L139.5 265.5L140.0 261.7L140.5 258.8L141.0 257.9L141.5 264.5L142.0 261.5L142.5 262.4L143.0 267.0L143.5 264.6L144.0 265.0L144.5 268.0L145.0 271.2L145.5 268.3L146.0 263.4L146.5 265.1L147.0 264.9L147.5 263.2L148.0 260.3L148.5 263.0L149.0 264.6L149.5 262.0L150.0 261.1L150.5 259.3L151.0 260.1L151.5 261.4L152.0 263.9L152.5 260.1L153.0 259.9L153.5 263.9L154.0 264.9L154.5 260.9L155.0 256.4L155.5 264.4L156.0 263.3L156.5 261.5L157.0 261.8L157.5 262.5L158.0 263.7L158.5 262.1L159.0 263.4L159.5 260.8L160.0 264.3L160.5 264.3L161.0 262.5L161.5 267.6L162.0 265.1L162.5 261.0L163.0 258.8L163.5 259.2L164.0 259.7L164.5 260.5L165.0 260.6L165.5 259.1L166.0 262.1L166.5 268.0L167.0 265.9L167.5 268.1L168.0 264.8L168.5 260.4L169.0 260.9L169.5 260.7L170.0 264.7L170.5 261.7L171.0 264.1L171.5 265.1L172.0 264.4L172.5 264.9L173.0 267.2L173.5 266.4L174.0 267.0L174.5 260.9L175.0 264.1L175.5 261.9L176.0 264.2L176.5 264.9L177.0 261.1L177.5 261.7L178.0 266.1L178.5 262.7L179.0 263.3L179.5 267.2L180.0 266.0L180.5 265.2L181.0 266.1L181.5 262.0L182.0 258.7L182.5 263.5L183.0 262.3L183.5 261.0L184.0 261.2L184.5 262.6L185.0 260.8L185.5 259.0L186.0 259.7L186.5 258.1L187.0 262.4L187.5 261.9L188.0 261.2L188.5 255.3L189.0 254.3L189.5 251.8L190.0 244.4L190.5 244.9L191.0 244.5L191.5 246.2L192.0 248.7L192.5 249.3L193.0 254.1L193.5 256.8L194.0 259.7L194.5 261.2L195.0 266.7L195.5 265.1L196.0 268.7L196.5 273.0L197.0 273.2L197.5 270.0L198.0 273.7L198.5 273.8L199.0 274.9L199.5 273.5L200.0 274.3L200.5 274.8L201.0 271.4L201.5 265.0L202.0 266.0L202.5 269.7L203.0 273.7L203.5 270.5L204.0 265.9L204.5 267.4L205.0 262.9L205.5 263.8L206.0 263.0L206.5 261.2L207.0 264.1L207.5 265.2L208.0 257.9L208.5 262.1L209.0 263.0L209.5 264.8L210.0 264.0L210.5 268.6L211.0 266.5L211.5 268.6L212.0 266.5L212.5 266.7L213.0 265.5L213.5 267.0L214.0 263.9L214.5 269.6L215.0 267.3L215.5 265.5L216.0 265.5L216.5 262.4L217.0 263.5L217.5 263.0L218.0 263.3L218.5 266.2L219.0 263.5L219.5 261.2L220.0 263.3L220.5 261.6L221.0 264.9L221.5 261.3L222.0 260.3L222.5 261.0L223.0 263.2L223.5 267.3L224.0 262.8L224.5 262.0L225.0 264.5L225.5 265.6L226.0 268.5L226.5 269.4L227.0 266.3L227.5 263.7L228.0 266.7L228.5 265.0L229.0 266.1L229.5 263.7L230.0 262.5L230.5 260.9L231.0 262.3L231.5 263.9L232.0 264.8L232.5 267.7L233.0 264.8L233.5 268.8L234.0 268.9L234.5 264.5L235.0 268.5L235.5 267.5L236.0 272.7L236.5 267.8L237.0 272.7L237.5 271.1L238.0 269.7L238.5 269.2L239.0 269.3L239.5 266.8L240.0 268.2L240.5 268.4L241.0 267.7L241.5 271.1L242.0 273.1L242.5 265.0L243.0 274.1L243.5 271.4L244.0 266.7L244.5 270.7L245.0 266.4L245.5 266.0L246.0 269.2L246.5 267.2L247.0 263.2L247.5 265.9L248.0 268.1L248.5 269.1L249.0 269.8L249.5 266.1L250.0 266.6L250.5 264.4L251.0 268.9L251.5 266.4L252.0 265.5L252.5 266.4L253.0 269.1L253.5 271.2L254.0 268.8L254.5 260.8L255.0 263.0L255.5 263.2L256.0 265.3L256.5 263.7L257.0 264.3L257.5 265.5L258.0 265.6L258.5 264.6L259.0 265.6L259.5 264.4L260.0 264.9L260.5 263.1L261.0 258.3L261.5 262.5L262.0 267.4L262.5 266.2L263.0 266.7L263.5 264.5L264.0 262.3L264.5 264.5L265.0 268.6L265.5 267.4L266.0 266.7L266.5 264.1L267.0 262.6L267.5 260.4L268.0 262.8L268.5 262.0L269.0 267.1L269.5 265.6L270.0 269.5L270.5 269.1L271.0 269.0L271.5 264.9L272.0 264.8L272.5 266.7L273.0 262.4L273.5 263.0L274.0 268.9L274.5 267.0L275.0 266.8L275.5 264.9L276.0 267.3L276.5 265.6L277.0 266.1L277.5 262.0L278.0 264.2L278.5 263.5L279.0 264.3L279.5 264.3L280.0 267.2L280.5 265.7L281.0 266.1L281.5 261.4L282.0 264.0L282.5 260.1L283.0 262.5L283.5 262.4L284.0 263.3L284.5 263.0L285.0 261.1L285.5 262.9L286.0 262.0L286.5 261.0L287.0 262.7L287.5 265.4L288.0 264.7L288.5 262.6L289.0 266.7L289.5 264.9L290.0 262.8L290.5 261.7L291.0 264.2L291.5 266.4L292.0 263.7L292.5 265.0L293.0 264.6L293.5 260.2L294.0 261.8L294.5 267.1L295.0 269.2L295.5 264.9L296.0 265.3L296.5 258.0L297.0 259.3L297.5 260.0L298.0 266.4L298.5 264.1L299.0 265.1L299.5 262.2L300.0 261.5L300.5 261.3L301.0 260.4L301.5 265.1L302.0 268.1L302.5 265.2L303.0 269.7L303.5 266.2L304.0 268.4L304.5 263.1L305.0 262.6L305.5 266.0L306.0 261.9L306.5 263.2L307.0 259.2L307.5 258.9L308.0 257.6L308.5 262.4L309.0 267.3L309.5 268.8L310.0 266.1L310.5 265.2L311.0 262.8L311.5 267.8L312.0 267.0L312.5 262.6L313.0 264.6L313.5 265.5L314.0 262.4L314.5 264.6L315.0 268.0L315.5 272.8L316.0 270.6L316.5 267.6L317.0 265.0L317.5 262.4L318.0 264.4L318.5 264.0L319.0 265.1L319.5 261.3L320.0 261.5L320.5 266.8L321.0 266.8L321.5 264.4L322.0 265.5L322.5 262.9L323.0 259.7L323.5 261.5L324.0 265.2L324.5 265.5L325.0 264.0L325.5 259.6L326.0 261.8L326.5 261.7L327.0 258.5L327.5 260.3L328.0 260.0L328.5 261.8L329.0 259.2L329.5 263.2L330.0 267.0L330.5 263.5L331.0 264.1L331.5 263.6L332.0 266.4L332.5 266.8L333.0 261.0L333.5 256.8L334.0 258.3L334.5 263.4L335.0 263.3L335.5 260.7L336.0 256.2L336.5 249.3L337.0 255.4L337.5 253.6L338.0 251.4L338.5 257.6L339.0 258.4L339.5 259.1L340.0 256.9L340.5 258.9L341.0 261.6L341.5 264.7L342.0 260.8L342.5 269.0L343.0 271.5L343.5 268.3L344.0 269.0L344.5 262.4L345.0 262.7L345.5 262.9L346.0 264.8" stroke="#0a6a14" stroke-width="1"/><path d="M49.0 287.9L49.5 290.5L50.0 282.9L50.5 289.4L51.0 287.9L51.5 284.1L52.0 284.2L52.5 288.6L53.0 288.7L53.5 289.4L54.0 289.3L54.5 287.3L55.0 289.5L55.5 290.3L56.0 294.7L56.5 289.0L57.0 295.0L57.5 294.0L58.0 289.1L58.5 291.5L59.0 291.6L59.5 287.4L60.0 289.0L60.5 289.0L61.0 289.7L61.5 289.1L62.0 286.3L62.5 287.6L63.0 288.5L63.5 288.9L64.0 289.4L64.5 290.4L65.0 290.6L65.5 291.4L66.0 292.1L66.5 290.6L67.0 291.1L67.5 286.6L68.0 281.3L68.5 285.1L69.0 289.8L69.5 285.0L70.0 289.3L70.5 287.0L71.0 289.4L71.5 291.9L72.0 293.1L72.5 290.9L73.0 286.8L73.5 286.7L74.0 290.8L74.5 288.0L75.0 289.4L75.5 290.7L76.0 292.3L76.5 289.3L77.0 287.8L77.5 289.7L78.0 291.5L78.5 290.1L79.0 289.7L79.5 292.3L80.0 293.1L80.5 290.4L81.0 294.2L81.5 292.2L82.0 292.2L82.5 295.4L83.0 296.2L83.5 291.6L84.0 294.8L84.5 294.6L85.0 288.3L85.5 286.8L86.0 287.0L86.5 290.4L87.0 290.9L87.5 288.7L88.0 287.9L88.5 289.3L89.0 286.6L89.5 283.5L90.0 285.5L90.5 285.6L91.0 287.9L91.5 288.7L92.0 291.5L92.5 287.8L93.0 282.7L93.5 285.4L94.0 286.3L94.5 283.4L95.0 286.0L95.5 287.8L96.0 292.5L96.5 293.0L97.0 292.1L97.5 289.1L98.0 288.6L98.5 283.3L99.0 282.9L99.5 283.6L100.0 283.7L100.5 286.8L101.0 285.9L101.5 288.3L102.0 289.2L102.5 292.6L103.0 289.7L103.5 287.0L104.0 288.0L104.5 289.7L105.0 290.4L105.5 292.1L106.0 291.4L106.5 289.2L107.0 293.3L107.5 291.1L108.0 289.9L108.5 287.8L109.0 287.1L109.5 283.4L110.0 286.7L110.5 291.2L111.0 291.8L111.5 287.0L112.0 286.0L112.5 286.0L113.0 291.4L113.5 291.3L114.0 288.6L114.5 285.5L115.0 285.6L115.5 286.1L116.0 287.6L116.5 290.3L117.0 291.8L117.5 289.3L118.0 287.3L118.5 288.3L119.0 288.1L119.5 287.0L120.0 287.4L120.5 286.0L121.0 286.0L121.5 287.2L122.0 292.9L122.5 297.5L123.0 299.4L123.5 297.1L124.0 296.2L124.5 291.4L125.0 292.1L125.5 290.4L126.0 287.8L126.5 290.7L127.0 291.9L127.5 291.2L128.0 292.9L128.5 293.1L129.0 294.4L129.5 292.0L130.0 294.3L130.5 291.2L131.0 288.9L131.5 283.2L132.0 287.0L132.5 286.3L133.0 284.0L133.5 291.1L134.0 290.5L134.5 292.5L135.0 289.6L135.5 291.3L136.0 287.4L136.5 286.8L137.0 285.4L137.5 287.4L138.0 284.3L138.5 285.6L139.0 288.2L139.5 288.2L140.0 283.8L140.5 283.4L141.0 281.0L141.5 283.5L142.0 284.7L142.5 285.0L143.0 287.9L143.5 285.4L144.0 289.8L144.5 293.0L145.0 296.6L145.5 293.9L146.0 291.7L146.5 298.0L147.0 298.4L147.5 298.3L148.0 293.9L148.5 298.1L149.0 301.0L149.5 298.5L150.0 299.5L150.5 297.0L151.0 294.4L151.5 298.0L152.0 291.7L152.5 289.0L153.0 292.0L153.5 294.8L154.0 292.4L154.5 292.0L155.0 288.9L155.5 291.4L156.0 291.6L156.5 288.1L157.0 288.2L157.5 285.5L158.0 286.3L158.5 286.2L159.0 286.9L159.5 286.2L160.0 291.7L160.5 291.2L161.0 287.1L161.5 289.2L162.0 289.5L162.5 287.1L163.0 286.1L163.5 287.0L164.0 283.5L164.5 283.5L165.0 288.2L165.5 287.2L166.0 288.0L166.5 291.5L167.0 287.9L167.5 293.5L168.0 290.9L168.5 287.7L169.0 289.7L169.5 286.8L170.0 287.7L170.5 286.3L171.0 287.4L171.5 290.1L172.0 287.2L172.5 283.1L173.0 288.4L173.5 288.8L174.0 287.7L174.5 283.9L175.0 289.4L175.5 291.3L176.0 293.5L176.5 291.4L177.0 289.8L177.5 288.3L178.0 290.9L178.5 284.2L179.0 286.8L179.5 288.7L180.0 288.4L180.5 285.9L181.0 285.9L181.5 287.5L182.0 284.6L182.5 287.7L183.0 287.3L183.5 287.6L184.0 284.9L184.5 284.9L185.0 284.2L185.5 284.8L186.0 291.4L186.5 290.8L187.0 291.3L187.5 289.4L188.0 291.7L188.5 298.6L189.0 301.6L189.5 301.0L190.0 301.9L190.5 302.1L191.0 305.0L191.5 303.1L192.0 300.2L192.5 296.6L193.0 295.9L193.5 295.3L194.0 296.3L194.5 293.3L195.0 291.5L195.5 290.1L196.0 288.0L196.5 281.6L197.0 281.6L197.5 274.6L198.0 276.3L198.5 276.8L199.0 277.1L199.5 280.7L200.0 280.3L200.5 283.6L201.0 280.7L201.5 278.0L202.0 283.7L202.5 289.9L203.0 293.2L203.5 288.9L204.0 286.8L204.5 289.0L205.0 288.6L205.5 288.9L206.0 287.0L206.5 285.6L207.0 285.9L207.5 287.9L208.0 286.1L208.5 288.1L209.0 292.0L209.5 293.2L210.0 284.9L210.5 290.9L211.0 292.3L211.5 292.8L212.0 291.1L212.5 288.5L213.0 285.4L213.5 286.8L214.0 285.2L214.5 294.1L215.0 293.6L215.5 290.9L216.0 291.9L216.5 287.9L217.0 286.8L217.5 282.1L218.0 285.5L218.5 285.7L219.0 288.5L219.5 285.2L220.0 290.9L220.5 284.4L221.0 287.9L221.5 285.8L222.0 287.4L222.5 289.8L223.0 284.9L223.5 284.5L224.0 285.5L224.5 284.1L225.0 284.9L225.5 280.9L226.0 281.8L226.5 282.5L227.0 284.6L227.5 283.3L228.0 287.9L228.5 287.1L229.0 287.0L229.5 284.4L230.0 288.8L230.5 284.7L231.0 284.6L231.5 283.9L232.0 286.6L232.5 287.9L233.0 288.4L233.5 289.7L234.0 289.1L234.5 286.3L235.0 285.3L235.5 290.7L236.0 289.7L236.5 287.9L237.0 290.1L237.5 290.0L238.0 286.9L238.5 286.8L239.0 292.6L239.5 288.1L240.0 291.4L240.5 290.6L241.0 289.4L241.5 290.6L242.0 287.2L242.5 287.5L243.0 290.2L243.5 290.4L244.0 290.6L244.5 289.7L245.0 292.0L245.5 286.9L246.0 284.2L246.5 285.0L247.0 286.0L247.5 286.8L248.0 284.0L248.5 287.1L249.0 287.8L249.5 284.2L250.0 286.7L250.5 286.5L251.0 286.9L251.5 285.7L252.0 287.8L252.5 287.0L253.0 292.7L253.5 291.7L254.0 291.6L254.5 288.5L255.0 287.9L255.5 288.6L256.0 288.7L256.5 286.0L257.0 287.6L257.5 290.9L258.0 289.2L258.5 286.1L259.0 286.6L259.5 286.8L260.0 285.9L260.5 288.2L261.0 288.3L261.5 289.7L262.0 291.3L262.5 289.0L263.0 286.3L263.5 284.5L264.0 288.5L264.5 287.3L265.0 288.5L265.5 287.8L266.0 288.9L266.5 284.0L267.0 281.4L267.5 278.9L268.0 284.6L268.5 286.2L269.0 289.2L269.5 287.4L270.0 289.8L270.5 290.0L271.0 290.0L271.5 284.8L272.0 287.1L272.5 286.2L273.0 282.9L273.5 283.1L274.0 285.7L274.5 288.4L275.0 287.6L275.5 283.9L276.0 287.5L276.5 286.9L277.0 286.5L277.5 283.2L278.0 289.1L278.5 290.5L279.0 285.4L279.5 283.7L280.0 286.7L280.5 284.3L281.0 287.1L281.5 287.7L282.0 288.0L282.5 289.5L283.0 288.0L283.5 289.8L284.0 291.8L284.5 288.5L285.0 290.6L285.5 292.5L286.0 292.2L286.5 287.9L287.0 288.6L287.5 294.8L288.0 292.7L288.5 288.3L289.0 293.1L289.5 293.0L290.0 293.1L290.5 291.4L291.0 292.1L291.5 291.2L292.0 288.3L292.5 288.2L293.0 286.0L293.5 286.2L294.0 284.1L294.5 285.8L295.0 291.4L295.5 285.7L296.0 287.3L296.5 279.4L297.0 283.9L297.5 285.7L298.0 284.5L298.5 286.9L299.0 287.3L299.5 286.5L300.0 289.3L300.5 286.1L301.0 282.9L301.5 287.2L302.0 283.5L302.5 286.0L303.0 287.7L303.5 289.5L304.0 292.7L304.5 289.1L305.0 290.4L305.5 289.0L306.0 287.9L306.5 290.1L307.0 287.0L307.5 284.1L308.0 283.0L308.5 289.6L309.0 291.6L309.5 291.2L310.0 288.3L310.5 288.1L311.0 286.1L311.5 290.8L312.0 293.9L312.5 291.4L313.0 290.0L313.5 288.4L314.0 286.9L314.5 286.4L315.0 293.3L315.5 296.2L316.0 292.5L316.5 293.5L317.0 287.9L317.5 287.7L318.0 287.3L318.5 290.2L319.0 287.5L319.5 285.7L320.0 286.0L320.5 286.7L321.0 288.9L321.5 288.1L322.0 290.2L322.5 289.3L323.0 285.8L323.5 285.7L324.0 292.1L324.5 289.1L325.0 291.0L325.5 290.4L326.0 287.5L326.5 287.0L327.0 286.6L327.5 284.0L328.0 289.3L328.5 286.3L329.0 283.2L329.5 287.5L330.0 289.7L330.5 288.0L331.0 287.1L331.5 291.8L332.0 297.5L332.5 294.4L333.0 289.8L333.5 282.9L334.0 286.5L334.5 295.1L335.0 295.0L335.5 291.4L336.0 294.8L336.5 297.5L337.0 301.3L337.5 299.1L338.0 302.0L338.5 300.9L339.0 300.4L339.5 301.8L340.0 299.8L340.5 299.1L341.0 293.5L341.5 292.2L342.0 288.8L342.5 292.7L343.0 293.2L343.5 286.4L344.0 286.7L344.5 284.7L345.0 287.1L345.5 288.6L346.0 289.9" stroke="#0a6a14" stroke-width="1"/><path d="M49.0 312.5L49.5 312.0L50.0 312.1L50.5 312.3L51.0 312.8L51.5 311.9L52.0 312.1L52.5 312.7L53.0 312.2L53.5 312.2L54.0 312.1L54.5 312.5L55.0 312.4L55.5 312.3L56.0 312.2L56.5 312.6L57.0 312.3L57.5 312.7L58.0 311.7L58.5 311.9L59.0 312.4L59.5 312.2L60.0 312.0L60.5 312.3L61.0 312.4L61.5 312.4L62.0 312.3L62.5 312.6L63.0 312.2L63.5 312.1L64.0 312.4L64.5 312.3L65.0 312.1L65.5 312.7L66.0 312.1L66.5 312.4L67.0 312.3L67.5 312.1L68.0 312.8L68.5 312.0L69.0 312.2L69.5 312.0L70.0 312.0L70.5 311.9L71.0 312.8L71.5 312.1L72.0 313.3L72.5 311.3L73.0 311.7L73.5 312.1L74.0 311.8L74.5 312.7L75.0 313.7L75.5 313.4L76.0 313.1L76.5 312.4L77.0 312.0L77.5 312.2L78.0 312.3L78.5 312.2L79.0 311.8L79.5 313.2L80.0 312.2L80.5 313.5L81.0 312.9L81.5 311.0L82.0 311.7L82.5 311.4L83.0 312.4L83.5 311.2L84.0 309.4L84.5 311.7L85.0 312.1L85.5 312.1L86.0 312.2L86.5 312.4L87.0 312.3L87.5 312.9L88.0 312.6L88.5 312.4L89.0 312.1L89.5 312.4L90.0 312.2L90.5 312.5L91.0 312.6L91.5 312.6L92.0 312.1L92.5 312.6L93.0 312.5L93.5 312.3L94.0 312.4L94.5 312.6L95.0 312.4L95.5 312.3L96.0 311.9L96.5 312.3L97.0 312.6L97.5 311.9L98.0 312.2L98.5 312.4L99.0 312.7L99.5 312.3L100.0 312.3L100.5 312.3L101.0 312.2L101.5 312.4L102.0 312.4L102.5 312.5L103.0 312.0L103.5 312.1L104.0 312.5L104.5 312.1L105.0 312.3L105.5 312.7L106.0 312.3L106.5 312.1L107.0 312.2L107.5 312.3L108.0 312.4L108.5 312.7L109.0 312.1L109.5 312.0L110.0 312.1L110.5 312.2L111.0 312.0L111.5 312.7L112.0 312.0L112.5 312.3L113.0 312.6L113.5 312.1L114.0 312.4L114.5 312.5L115.0 312.4L115.5 312.4L116.0 312.6L116.5 312.3L117.0 312.5L117.5 312.1L118.0 312.3L118.5 312.3L119.0 312.4L119.5 312.4L120.0 312.7L120.5 312.4L121.0 312.5L121.5 312.4L122.0 312.2L122.5 312.2L123.0 311.9L123.5 312.4L124.0 312.3L124.5 312.6L125.0 312.6L125.5 312.2L126.0 312.6L126.5 312.3L127.0 312.0L127.5 312.3L128.0 312.6L128.5 312.4L129.0 312.2L129.5 312.8L130.0 312.3L130.5 312.1L131.0 312.5L131.5 312.8L132.0 312.4L132.5 312.5L133.0 312.3L133.5 312.2L134.0 312.3L134.5 312.2L135.0 312.3L135.5 312.3L136.0 311.8L136.5 312.6L137.0 312.3L137.5 312.4L138.0 312.0L138.5 312.6L139.0 312.8L139.5 312.4L140.0 312.1L140.5 312.6L141.0 312.2L141.5 311.9L142.0 312.5L142.5 312.6L143.0 312.3L143.5 312.4L144.0 312.3L144.5 312.2L145.0 312.2L145.5 312.5L146.0 312.5L146.5 312.8L147.0 312.4L147.5 312.4L148.0 312.0L148.5 312.0L149.0 311.9L149.5 312.5L150.0 312.3L150.5 310.7L151.0 311.7L151.5 312.6L152.0 311.6L152.5 310.6L153.0 313.6L153.5 312.4L154.0 312.2L154.5 312.0L155.0 311.6L155.5 312.7L156.0 312.3L156.5 314.1L157.0 313.2L157.5 312.0L158.0 312.3L158.5 313.0L159.0 312.0L159.5 312.3L160.0 312.1L160.5 312.9L161.0 312.4L161.5 312.0L162.0 312.6L162.5 312.4L163.0 312.4L163.5 312.5L164.0 312.4L164.5 312.4L165.0 312.2L165.5 312.5L166.0 311.9L166.5 312.2L167.0 312.6L167.5 312.1L168.0 311.6L168.5 312.3L169.0 312.2L169.5 312.5L170.0 312.6L170.5 311.8L171.0 312.6L171.5 312.4L172.0 312.7L172.5 312.3L173.0 312.2L173.5 312.1L174.0 311.9L174.5 312.6L175.0 312.5L175.5 311.9L176.0 312.2L176.5 312.7L177.0 312.4L177.5 312.4L178.0 312.3L178.5 312.6L179.0 312.2L179.5 312.5L180.0 312.2L180.5 312.4L181.0 312.2L181.5 312.2L182.0 312.5L182.5 312.2L183.0 312.6L183.5 312.1L184.0 312.3L184.5 312.0L185.0 311.8L185.5 312.7L186.0 312.6L186.5 311.9L187.0 312.1L187.5 312.3L188.0 312.1L188.5 312.5L189.0 312.0L189.5 312.8L190.0 312.0L190.5 312.6L191.0 312.0L191.5 311.8L192.0 312.1L192.5 312.3L193.0 312.3L193.5 312.2L194.0 312.6L194.5 312.4L195.0 312.4L195.5 312.3L196.0 312.4L196.5 312.3L197.0 312.7L197.5 312.0L198.0 311.9L198.5 312.2L199.0 312.2L199.5 312.2L200.0 312.7L200.5 312.5L201.0 312.4L201.5 312.4L202.0 312.1L202.5 312.1L203.0 312.1L203.5 312.6L204.0 312.4L204.5 312.1L205.0 312.2L205.5 312.2L206.0 312.2L206.5 312.0L207.0 312.3L207.5 312.4L208.0 312.5L208.5 312.3L209.0 312.2L209.5 312.6L210.0 312.0L210.5 312.6L211.0 312.0L211.5 312.2L212.0 312.4L212.5 312.3L213.0 312.3L213.5 312.0L214.0 312.2L214.5 312.6L215.0 312.6L215.5 312.4L216.0 312.3L216.5 312.0L217.0 312.3L217.5 312.6L218.0 312.0L218.5 312.4L219.0 312.3L219.5 311.9L220.0 312.2L220.5 312.0L221.0 312.2L221.5 311.8L222.0 312.3L222.5 312.3L223.0 312.2L223.5 312.3L224.0 312.1L224.5 312.3L225.0 312.1L225.5 312.3L226.0 312.3L226.5 312.2L227.0 311.9L227.5 312.4L228.0 312.1L228.5 312.3L229.0 312.2L229.5 312.1L230.0 312.7L230.5 312.4L231.0 312.3L231.5 312.2L232.0 312.4L232.5 312.4L233.0 312.2L233.5 311.9L234.0 312.1L234.5 312.5L235.0 311.9L235.5 312.1L236.0 311.8L236.5 311.9L237.0 312.4L237.5 312.4L238.0 312.0L238.5 312.1L239.0 312.4L239.5 312.2L240.0 311.8L240.5 312.4L241.0 312.4L241.5 312.3L242.0 312.3L242.5 312.3L243.0 312.2L243.5 312.6L244.0 312.5L244.5 311.7L245.0 312.2L245.5 312.0L246.0 312.4L246.5 312.2L247.0 312.2L247.5 312.1L248.0 312.9L248.5 311.8L249.0 312.1L249.5 312.6L250.0 311.9L250.5 311.8L251.0 312.6L251.5 312.2L252.0 312.2L252.5 312.1L253.0 312.2L253.5 312.2L254.0 312.1L254.5 312.1L255.0 312.6L255.5 312.8L256.0 313.0L256.5 310.9L257.0 311.1L257.5 312.3L258.0 310.7L258.5 311.6L259.0 312.3L259.5 312.0L260.0 312.6L260.5 313.2L261.0 311.9L261.5 313.0L262.0 312.2L262.5 311.6L263.0 313.7L263.5 312.3L264.0 313.1L264.5 313.2L265.0 311.5L265.5 311.8L266.0 312.2L266.5 312.8L267.0 313.5L267.5 313.0L268.0 311.5L268.5 312.4L269.0 311.9L269.5 312.7L270.0 310.3L270.5 312.6L271.0 313.3L271.5 312.2L272.0 311.9L272.5 312.2L273.0 311.4L273.5 310.6L274.0 312.7L274.5 312.9L275.0 313.2L275.5 312.5L276.0 313.3L276.5 311.3L277.0 313.0L277.5 312.2L278.0 311.9L278.5 312.7L279.0 312.2L279.5 312.3L280.0 312.5L280.5 312.7L281.0 312.8L281.5 312.1L282.0 311.8L282.5 311.8L283.0 312.8L283.5 313.0L284.0 312.1L284.5 312.1L285.0 313.7L285.5 313.1L286.0 311.9L286.5 313.5L287.0 310.6L287.5 312.3L288.0 311.2L288.5 312.3L289.0 311.8L289.5 310.6L290.0 311.4L290.5 310.5L291.0 311.9L291.5 312.7L292.0 312.1L292.5 311.6L293.0 311.4L293.5 312.8L294.0 313.9L294.5 311.1L295.0 313.5L295.5 311.2L296.0 311.8L296.5 310.5L297.0 311.0L297.5 312.1L298.0 312.2L298.5 310.9L299.0 312.3L299.5 312.4L300.0 312.3L300.5 311.9L301.0 312.5L301.5 312.4L302.0 312.2L302.5 312.5L303.0 312.6L303.5 312.0L304.0 312.7L304.5 312.7L305.0 312.3L305.5 312.0L306.0 312.6L306.5 312.2L307.0 312.8L307.5 312.3L308.0 311.9L308.5 312.4L309.0 312.0L309.5 312.7L310.0 312.3L310.5 311.6L311.0 311.8L311.5 312.3L312.0 312.2L312.5 312.2L313.0 312.3L313.5 312.2L314.0 312.4L314.5 312.0L315.0 312.7L315.5 312.7L316.0 312.3L316.5 311.6L317.0 312.1L317.5 312.4L318.0 312.0L318.5 312.1L319.0 312.1L319.5 312.4L320.0 312.5L320.5 312.8L321.0 312.3L321.5 312.2L322.0 312.0L322.5 311.5L323.0 312.5L323.5 312.5L324.0 312.7L324.5 312.4L325.0 312.5L325.5 312.5L326.0 312.5L326.5 312.2L327.0 312.5L327.5 311.9L328.0 312.7L328.5 312.6L329.0 312.3L329.5 312.5L330.0 312.2L330.5 312.6L331.0 312.0L331.5 312.1L332.0 312.1L332.5 312.7L333.0 312.5L333.5 312.5L334.0 311.8L334.5 312.3L335.0 312.2L335.5 311.8L336.0 312.3L336.5 312.5L337.0 312.1L337.5 312.0L338.0 311.9L338.5 312.0L339.0 312.2L339.5 312.3L340.0 312.1L340.5 312.0L341.0 312.4L341.5 312.3L342.0 312.2L342.5 312.5L343.0 312.3L343.5 312.4L344.0 312.2L344.5 312.7L345.0 312.3L345.5 312.4L346.0 312.6" stroke="#1a2050" stroke-width="1"/><path d="M49.5 360.0L49.4 359.5L50.0 329.2L50.5 365.8L51.2 359.9L52.2 356.8L53.0 358.6L53.6 329.3L54.1 366.7L54.8 359.7L55.8 356.6L56.7 360.9L57.3 332.3L57.8 366.7L58.5 359.4L59.5 357.5L60.4 358.6L61.0 331.1L61.5 366.3L62.2 360.2L63.2 358.1L64.0 360.6L64.6 328.9L65.1 365.9L65.8 359.5L66.8 356.9L67.6 359.2L68.2 338.0L68.7 367.0L69.4 359.8L70.4 358.2L71.3 361.3L71.9 329.0L72.4 366.5L73.1 359.4L74.1 357.0L74.9 359.0L75.5 332.1L76.0 365.6L76.7 360.3L77.7 358.1L78.6 360.4L79.2 331.7L79.7 366.7L80.4 360.1L81.4 359.4L82.3 358.8L82.9 332.3L83.4 365.9L84.1 358.1L85.1 359.5L86.0 359.8L86.6 351.6L87.1 365.5L87.8 358.7L88.8 357.1L89.5 359.0L90.1 329.0L90.6 366.2L91.3 360.1L92.3 359.0L93.2 359.8L93.8 331.4L94.3 366.2L95.0 361.0L96.0 356.7L96.8 360.3L97.4 330.4L97.9 365.9L98.6 360.0L99.6 356.5L100.5 359.6L101.1 331.7L101.6 366.6L102.3 358.7L103.3 358.5L104.2 359.1L104.8 330.2L105.3 366.5L106.0 359.6L107.0 358.0L107.8 359.6L108.4 331.9L108.9 366.4L109.6 360.9L110.6 358.4L111.4 360.4L112.0 331.2L112.5 365.7L113.2 358.5L114.2 358.9L115.1 359.4L115.7 328.6L116.2 365.6L116.9 360.0L117.9 359.4L118.8 360.0L119.4 328.9L119.9 366.5L120.6 358.6L121.6 358.1L122.5 358.8L123.1 346.7L123.6 366.6L124.3 358.7L125.3 359.2L126.1 360.4L126.7 347.8L127.2 366.3L127.9 360.9L128.9 359.3L129.7 360.0L130.3 331.7L130.8 365.6L131.5 360.2L132.5 357.8L133.4 359.9L134.0 330.8L134.5 366.7L135.2 360.2L136.2 358.4L137.1 361.0L137.7 329.8L138.2 366.9L138.9 358.5L139.9 358.5L140.8 359.1L141.4 329.9L141.9 366.8L142.6 360.6L143.6 358.9L144.4 360.2L145.0 332.3L145.5 366.6L146.2 358.8L147.2 356.6L148.0 360.1L148.6 330.3L149.1 365.6L149.8 359.9L150.8 358.1L151.7 360.7L152.3 331.9L152.8 366.2L153.5 358.1L154.5 358.1L155.4 361.3L156.0 335.8L156.5 367.0L157.2 360.7L158.2 358.3L159.1 360.5L159.7 329.0L160.2 365.8L160.9 360.5L161.9 357.7L162.8 360.3L163.4 329.5L163.9 366.4L164.6 358.9L165.6 357.3L166.5 359.6L167.1 328.6L167.6 366.3L168.3 359.4L169.3 357.0L170.1 358.7L170.7 345.1L171.2 365.6L171.9 359.0L172.9 356.7L173.8 358.9L174.4 330.9L174.9 366.4L175.6 360.7L176.6 358.8L177.4 359.8L178.0 329.8L178.5 366.1L179.2 360.8L180.2 358.6L181.1 361.4L181.7 345.2L182.2 366.8L182.9 358.4L183.9 357.9L184.7 361.1L185.3 341.3L185.8 366.1L186.5 360.2L187.5 358.7L188.3 359.4L188.9 329.8L189.4 366.4L190.1 361.0L191.1 358.2L192.0 359.9L192.6 329.5L193.1 365.9L193.8 359.8L194.8 357.1L195.7 360.0L196.3 330.7L196.8 366.5L197.5 360.2L198.5 357.8L199.4 361.2L200.0 332.3L200.5 366.7L201.2 359.2L202.2 358.5L203.0 359.6L203.6 331.3L204.1 366.7L204.8 360.6L205.8 356.9L206.6 360.7L207.2 331.3L207.7 365.6L208.4 358.3L209.4 357.4L210.2 360.7L210.8 330.9L211.3 366.0L212.0 358.7L213.0 359.5L213.9 361.1L214.5 332.0L215.0 366.1L215.7 360.9L216.7 358.9L217.5 359.2L218.1 331.7L218.6 365.6L219.3 360.5L220.3 356.7L221.1 359.7L221.7 329.3L222.2 366.1L222.9 358.2L223.9 358.7L224.8 361.3L225.4 330.0L225.9 366.3L226.6 360.1L227.6 358.0L228.5 360.1L229.1 329.7L229.6 366.2L230.3 360.8L231.3 357.1L232.2 360.5L232.8 332.5L233.3 366.5L234.0 358.0L235.0 358.8L235.8 359.0L236.4 329.6L236.9 366.7L237.6 358.3L238.6 357.8L239.4 361.5L240.0 330.6L240.5 365.9L241.2 359.1L242.2 359.2L243.0 360.1L243.6 329.4L244.1 366.2L244.8 359.1L245.8 359.4L246.7 358.6L247.3 331.7L247.8 366.1L248.5 358.7L249.5 359.1L250.4 360.4L251.0 329.5L251.5 366.5L252.2 358.1L253.2 359.5L254.1 358.6L254.7 331.0L255.2 365.8L255.9 358.2L256.9 357.1L257.8 359.8L258.4 329.8L258.9 366.1L259.6 360.1L260.6 359.3L261.5 360.2L262.1 328.8L262.6 366.8L263.3 358.3L264.3 359.0L265.1 359.1L265.7 328.7L266.2 366.6L266.9 360.9L267.9 357.0L268.8 360.5L269.4 350.6L269.9 367.0L270.6 359.0L271.6 358.1L272.4 358.6L273.0 328.5L273.5 366.1L274.2 359.9L275.2 357.2L276.0 360.5L276.6 332.1L277.1 365.6L277.8 359.8L278.8 357.9L279.6 359.9L280.2 331.5L280.7 365.6L281.4 358.9L282.4 359.4L283.2 358.6L283.8 330.9L284.3 366.5L285.0 359.6L286.0 358.6L286.9 358.7L287.5 328.7L288.0 366.0L288.7 358.8L289.7 358.3L290.6 359.9L291.2 329.6L291.7 366.5L292.4 358.9L293.4 358.5L294.3 359.0L294.9 330.3L295.4 366.5L296.1 358.5L297.1 359.5L297.9 360.0L298.5 345.9L299.0 366.6L299.7 360.1L300.7 356.5L301.5 359.6L302.1 330.0L302.6 365.9L303.3 360.9L304.3 358.4L305.2 359.8L305.8 329.7L306.3 366.0L307.0 360.0L308.0 358.3L308.8 359.0L309.4 332.2L309.9 366.2L310.6 358.6L311.6 358.9L312.5 358.7L313.1 330.8L313.6 366.7L314.3 359.2L315.3 356.8L316.1 359.6L316.7 331.3L317.2 366.6L317.9 360.1L318.9 357.5L319.8 360.1L320.4 330.7L320.9 365.8L321.6 358.2L322.6 359.1L323.5 360.0L324.1 341.8L324.6 366.4L325.3 360.7L326.3 356.8L327.2 361.0L327.8 329.4L328.3 366.7L329.0 360.2L330.0 357.1L330.8 361.3L331.4 340.0L331.9 366.5L332.6 359.9L333.6 356.8L334.5 361.5L335.1 329.5L335.6 366.1L336.3 359.7L337.3 357.9L338.1 359.8L338.7 330.9L339.2 365.8L339.9 359.0L340.9 357.2L341.8 359.9L342.4 328.7L342.9 366.5L343.6 359.3L344.6 359.0" stroke="#f01010" stroke-width="0.75"/><path d="M49.500 360H346" stroke="#f01010" stroke-width="2.500" stroke-dasharray="1 0.6" opacity=".8"/><rect x="225" y="350" width="2.500" height="19" fill="#3838e8" stroke="none"/><rect x="245" y="350" width="4.500" height="19" fill="#3838e8" stroke="none"/><path d="M49.500 384.800H66l1.500 .8H74.500M99.5 385.300H107.5l1.500-.5H126.0M150.8 385.300H158.8l1.500-.5H177.3M202.1 385.300H210.1l1.500-.5H228.6M253.4 385.300H261.4l1.500-.5H279.9M304.7 385.300H312.7l1.500-.5H331.2M356.0 385.300H364.0l1.500-.5H382.5" stroke="#f04040" stroke-width="0.9"/><path d="M49.0 407.5L49.5 407.5L50.0 407.6L50.5 407.6L51.0 407.5L51.5 407.9L52.0 407.6L52.5 407.6L53.0 407.7L53.5 407.5L54.0 407.8L54.5 407.7L55.0 407.4L55.5 407.8L56.0 407.6L56.5 407.6L57.0 407.7L57.5 407.7L58.0 407.5L58.5 407.6L59.0 407.4L59.5 407.6L60.0 407.4L60.5 407.6L61.0 407.5L61.5 407.4L62.0 407.8L62.5 407.7L63.0 407.7L63.5 407.6L64.0 407.4L64.5 407.7L65.0 407.6L65.5 407.2L66.0 407.4L66.5 407.6L67.0 407.7L67.5 407.6L68.0 408.2L68.5 406.8L69.0 408.2L69.5 407.6L70.0 406.3L70.5 407.6L71.0 407.5L71.5 407.7L72.0 407.6L72.5 407.3L73.0 407.7L73.5 408.1L74.0 409.3L74.5 407.2L75.0 407.6L75.5 408.0L76.0 408.1L76.5 407.7L77.0 408.0L77.5 407.2L78.0 407.4L78.5 407.1L79.0 407.6L79.5 407.7L80.0 407.5L80.5 407.7L81.0 407.5L81.5 407.8L82.0 407.5L82.5 407.5L83.0 407.6L83.5 407.6L84.0 407.6L84.5 407.8L85.0 407.6L85.5 407.3L86.0 407.4L86.5 407.3L87.0 407.5L87.5 407.6L88.0 407.8L88.5 407.6L89.0 407.7L89.5 407.6L90.0 407.6L90.5 407.7L91.0 407.6L91.5 407.7L92.0 407.5L92.5 407.8L93.0 407.5L93.5 407.6L94.0 407.6L94.5 407.5L95.0 407.6L95.5 407.3L96.0 407.6L96.5 407.0L97.0 407.5L97.5 407.2L98.0 407.4L98.5 407.6L99.0 407.8L99.5 408.1L100.0 407.9L100.5 408.0L101.0 406.9L101.5 407.3L102.0 407.0L102.5 407.4L103.0 407.8L103.5 408.0L104.0 407.5L104.5 407.5L105.0 407.6L105.5 408.2L106.0 407.8L106.5 406.8L107.0 408.2L107.5 408.0L108.0 407.7L108.5 407.8L109.0 407.6L109.5 407.6L110.0 407.6L110.5 407.5L111.0 407.6L111.5 407.6L112.0 407.6L112.5 407.4L113.0 407.7L113.5 407.4L114.0 408.0L114.5 407.8L115.0 407.6L115.5 407.8L116.0 407.7L116.5 407.7L117.0 407.5L117.5 407.7L118.0 407.9L118.5 407.6L119.0 407.6L119.5 407.6L120.0 407.3L120.5 407.4L121.0 407.9L121.5 407.6L122.0 407.8L122.5 407.5L123.0 408.0L123.5 407.9L124.0 407.6L124.5 407.9L125.0 407.7L125.5 407.8L126.0 407.4L126.5 407.5L127.0 407.6L127.5 407.6L128.0 407.7L128.5 407.3L129.0 407.7L129.5 407.8L130.0 407.7L130.5 407.6L131.0 407.7L131.5 407.7L132.0 407.5L132.5 407.7L133.0 407.5L133.5 407.6L134.0 407.7L134.5 407.6L135.0 407.7L135.5 407.4L136.0 407.9L136.5 407.5L137.0 407.6L137.5 407.4L138.0 407.6L138.5 407.4L139.0 407.6L139.5 407.6L140.0 407.5L140.5 407.6L141.0 407.5L141.5 407.8L142.0 407.6L142.5 407.5L143.0 407.9L143.5 407.4L144.0 407.5L144.5 407.6L145.0 407.7L145.5 407.5L146.0 407.7L146.5 407.6L147.0 407.5L147.5 407.6L148.0 407.5L148.5 407.5L149.0 407.7L149.5 407.7L150.0 407.8L150.5 407.6L151.0 407.5L151.5 407.5L152.0 407.9L152.5 407.6L153.0 407.5L153.5 407.9L154.0 407.7L154.5 407.6L155.0 407.9L155.5 407.2L156.0 407.6L156.5 407.3L157.0 407.8L157.5 407.5L158.0 408.0L158.5 407.7L159.0 407.3L159.5 407.4L160.0 407.6L160.5 407.8L161.0 407.3L161.5 407.5L162.0 407.2L162.5 407.5L163.0 407.6L163.5 407.6L164.0 407.7L164.5 407.3L165.0 407.6L165.5 407.8L166.0 407.5L166.5 407.2L167.0 407.8L167.5 407.8L168.0 407.6L168.5 407.4L169.0 407.8L169.5 407.9L170.0 407.6L170.5 407.7L171.0 407.3L171.5 407.7L172.0 407.5L172.5 407.6L173.0 407.6L173.5 407.6L174.0 407.5L174.5 407.5L175.0 407.5L175.5 407.7L176.0 407.7L176.5 407.7L177.0 407.6L177.5 407.9L178.0 407.6L178.5 407.9L179.0 407.5L179.5 407.4L180.0 407.6L180.5 407.8L181.0 407.8L181.5 407.6L182.0 407.7L182.5 407.8L183.0 407.8L183.5 407.6L184.0 407.7L184.5 407.6L185.0 407.7L185.5 407.4L186.0 407.5L186.5 407.6L187.0 407.8L187.5 407.8L188.0 407.6L188.5 407.5L189.0 407.7L189.5 407.5L190.0 407.5L190.5 407.7L191.0 407.2L191.5 407.8L192.0 407.6L192.5 407.4L193.0 407.6L193.5 407.8L194.0 407.5L194.5 407.5L195.0 407.4L195.5 407.6L196.0 407.7L196.5 407.5L197.0 407.4L197.5 407.8L198.0 407.7L198.5 407.7L199.0 407.7L199.5 407.4L200.0 407.6L200.5 407.5L201.0 407.7L201.5 407.5L202.0 407.4L202.5 407.4L203.0 407.5L203.5 407.7L204.0 407.4L204.5 407.8L205.0 407.5L205.5 407.4L206.0 407.7L206.5 407.7L207.0 407.6L207.5 407.6L208.0 407.6L208.5 407.4L209.0 407.9L209.5 407.3L210.0 407.6L210.5 407.5L211.0 407.6L211.5 407.7L212.0 407.5L212.5 407.7L213.0 407.4L213.5 407.2L214.0 407.5L214.5 407.7L215.0 407.7L215.5 407.6L216.0 407.6L216.5 407.8L217.0 407.9L217.5 407.9L218.0 407.5L218.5 407.9L219.0 407.4L219.5 407.6L220.0 407.2L220.5 407.8L221.0 407.6L221.5 407.7L222.0 407.7L222.5 407.6L223.0 407.8L223.5 407.4L224.0 407.5L224.5 407.6L225.0 407.6L225.5 406.6L226.0 408.2L226.5 405.9L227.0 407.8L227.5 407.6L228.0 407.4L228.5 407.3L229.0 407.8L229.5 407.2L230.0 407.6L230.5 407.7L231.0 407.9L231.5 407.7L232.0 407.8L232.5 407.7L233.0 407.7L233.5 407.6L234.0 407.5L234.5 407.9L235.0 407.6L235.5 407.5L236.0 407.6L236.5 407.5L237.0 407.5L237.5 407.7L238.0 404.9L238.5 404.9L239.0 403.1L239.5 407.5L240.0 407.7L240.5 407.6L241.0 407.5L241.5 407.6L242.0 407.7L242.5 407.5L243.0 407.7L243.5 407.6L244.0 407.9L244.5 407.5L245.0 407.5L245.5 407.6L246.0 407.4L246.5 407.5L247.0 407.5L247.5 407.7L248.0 407.5L248.5 407.6L249.0 407.5L249.5 407.8L250.0 407.6L250.5 407.5L251.0 407.6L251.5 407.6L252.0 407.5L252.5 407.3L253.0 407.0L253.5 405.8L254.0 405.8L254.5 408.4L255.0 408.3L255.5 407.4L256.0 407.5L256.5 407.5L257.0 407.6L257.5 407.5L258.0 407.7L258.5 407.6L259.0 407.8L259.5 407.9L260.0 407.6L260.5 407.4L261.0 407.8L261.5 407.7L262.0 407.9L262.5 407.7L263.0 407.6L263.5 407.6L264.0 407.8L264.5 407.7L265.0 407.6L265.5 407.8L266.0 407.6L266.5 407.6L267.0 407.8L267.5 407.9L268.0 407.6L268.5 407.5L269.0 407.2L269.5 407.6L270.0 407.4L270.5 407.4L271.0 407.5L271.5 407.5L272.0 407.8L272.5 407.7L273.0 407.5L273.5 407.6L274.0 407.5L274.5 407.8L275.0 407.5L275.5 407.6L276.0 407.7L276.5 407.6L277.0 407.7L277.5 407.7L278.0 407.6L278.5 407.7L279.0 407.6L279.5 407.7L280.0 407.5L280.5 407.6L281.0 407.8L281.5 407.3L282.0 407.6L282.5 407.4L283.0 407.5L283.5 407.8L284.0 407.7L284.5 407.7L285.0 407.6L285.5 407.5L286.0 407.3L286.5 407.8L287.0 407.5L287.5 407.6L288.0 407.6L288.5 407.5L289.0 407.8L289.5 407.4L290.0 407.9L290.5 407.3L291.0 407.5L291.5 407.7L292.0 407.7L292.5 407.5L293.0 407.7L293.5 407.8L294.0 407.6L294.5 407.8L295.0 407.4L295.5 407.7L296.0 407.6L296.5 407.3L297.0 407.8L297.5 407.4L298.0 407.6L298.5 407.8L299.0 407.6L299.5 407.4L300.0 407.5L300.5 407.6L301.0 407.6L301.5 407.6L302.0 407.4L302.5 407.8L303.0 407.4L303.5 407.6L304.0 407.5L304.5 407.7L305.0 407.5L305.5 407.8L306.0 407.8L306.5 407.6L307.0 407.5L307.5 407.7L308.0 407.7L308.5 407.9L309.0 407.8L309.5 407.6L310.0 407.8L310.5 407.7L311.0 407.8L311.5 407.5L312.0 407.6L312.5 407.2L313.0 407.7L313.5 407.7L314.0 407.8L314.5 407.9L315.0 407.5L315.5 407.5L316.0 407.8L316.5 407.6L317.0 407.4L317.5 407.7L318.0 407.5L318.5 407.6L319.0 407.5L319.5 407.5L320.0 407.7L320.5 407.6L321.0 407.5L321.5 407.6L322.0 407.7L322.5 407.5L323.0 407.7L323.5 407.4L324.0 407.8L324.5 407.5L325.0 407.8L325.5 407.6L326.0 407.8L326.5 407.6L327.0 407.6L327.5 407.8L328.0 407.8L328.5 407.4L329.0 407.4L329.5 407.5L330.0 407.3L330.5 407.9L331.0 407.6L331.5 407.6L332.0 407.4L332.5 407.4L333.0 407.6L333.5 407.6L334.0 407.6L334.5 407.7L335.0 407.6L335.5 407.5L336.0 407.4L336.5 407.7L337.0 407.6L337.5 408.1L338.0 407.6L338.5 407.8L339.0 407.6L339.5 407.7L340.0 407.6L340.5 407.7L341.0 407.7L341.5 407.6L342.0 407.7L342.5 407.5L343.0 407.7L343.5 407.4L344.0 407.6L344.5 407.5L345.0 407.5L345.5 407.6L346.0 407.6" stroke="#1a2050" stroke-width="1"/><path d="M49.0 431.1L49.5 431.0L50.0 431.2L50.5 431.1L51.0 431.0L51.5 431.5L52.0 431.7L52.5 431.2L53.0 431.3L53.5 431.2L54.0 431.3L54.5 431.3L55.0 431.2L55.5 431.2L56.0 431.2L56.5 431.2L57.0 431.4L57.5 431.4L58.0 431.2L58.5 431.3L59.0 431.4L59.5 431.2L60.0 431.1L60.5 431.0L61.0 431.3L61.5 431.3L62.0 431.3L62.5 431.2L63.0 431.2L63.5 431.1L64.0 431.1L64.5 431.3L65.0 431.3L65.5 431.1L66.0 431.1L66.5 431.1L67.0 431.2L67.5 431.2L68.0 431.3L68.5 431.2L69.0 430.9L69.5 431.1L70.0 431.1L70.5 431.2L71.0 431.4L71.5 431.3L72.0 431.1L72.5 431.2L73.0 430.8L73.5 431.2L74.0 431.1L74.5 431.4L75.0 431.1L75.5 431.1L76.0 431.2L76.5 431.2L77.0 431.3L77.5 431.0L78.0 431.4L78.5 431.3L79.0 431.4L79.5 430.7L80.0 430.5L80.5 431.0L81.0 431.4L81.5 431.0L82.0 431.0L82.5 431.1L83.0 431.2L83.5 431.1L84.0 431.0L84.5 431.2L85.0 431.2L85.5 431.4L86.0 431.4L86.5 431.2L87.0 431.2L87.5 431.1L88.0 432.2L88.5 430.2L89.0 431.3L89.5 432.6L90.0 432.9L90.5 432.1L91.0 431.1L91.5 432.8L92.0 430.2L92.5 431.1L93.0 431.1L93.5 431.6L94.0 431.2L94.5 431.3L95.0 431.0L95.5 431.3L96.0 431.4L96.5 431.2L97.0 431.3L97.5 431.3L98.0 431.1L98.5 431.3L99.0 431.1L99.5 431.2L100.0 431.3L100.5 431.2L101.0 431.4L101.5 431.2L102.0 431.1L102.5 431.3L103.0 431.1L103.5 431.2L104.0 431.1L104.5 431.3L105.0 431.2L105.5 431.3L106.0 431.2L106.5 431.3L107.0 431.3L107.5 431.4L108.0 431.3L108.5 431.4L109.0 431.3L109.5 429.8L110.0 430.6L110.5 432.2L111.0 430.1L111.5 427.9L112.0 430.2L112.5 430.3L113.0 431.3L113.5 431.2L114.0 431.6L114.5 431.3L115.0 431.4L115.5 431.2L116.0 431.2L116.5 431.3L117.0 431.3L117.5 431.3L118.0 431.3L118.5 431.2L119.0 431.5L119.5 431.4L120.0 431.4L120.5 431.1L121.0 431.1L121.5 431.2L122.0 431.2L122.5 431.0L123.0 431.3L123.5 431.1L124.0 431.2L124.5 431.2L125.0 431.2L125.5 431.1L126.0 431.2L126.5 431.2L127.0 431.1L127.5 431.2L128.0 431.3L128.5 431.4L129.0 430.9L129.5 431.2L130.0 431.5L130.5 431.2L131.0 431.1L131.5 431.3L132.0 431.0L132.5 431.5L133.0 431.3L133.5 431.3L134.0 431.2L134.5 430.9L135.0 431.2L135.5 431.2L136.0 431.5L136.5 431.6L137.0 431.1L137.5 430.9L138.0 431.1L138.5 431.2L139.0 431.1L139.5 431.3L140.0 431.2L140.5 431.2L141.0 431.3L141.5 431.3L142.0 431.3L142.5 431.4L143.0 431.3L143.5 431.1L144.0 431.3L144.5 431.3L145.0 431.3L145.5 431.4L146.0 431.0L146.5 431.4L147.0 431.3L147.5 431.2L148.0 431.4L148.5 431.3L149.0 431.3L149.5 431.3L150.0 431.1L150.5 431.2L151.0 431.1L151.5 431.2L152.0 431.2L152.5 431.1L153.0 431.2L153.5 431.2L154.0 431.0L154.5 431.3L155.0 431.2L155.5 431.2L156.0 431.2L156.5 431.3L157.0 431.2L157.5 431.1L158.0 431.0L158.5 431.0L159.0 431.1L159.5 431.2L160.0 431.3L160.5 431.1L161.0 431.3L161.5 431.3L162.0 431.1L162.5 431.3L163.0 431.5L163.5 431.2L164.0 431.3L164.5 431.6L165.0 431.0L165.5 431.1L166.0 431.2L166.5 431.3L167.0 431.2L167.5 431.5L168.0 431.0L168.5 431.3L169.0 431.3L169.5 431.5L170.0 431.4L170.5 431.2L171.0 431.2L171.5 431.0L172.0 431.4L172.5 431.1L173.0 430.8L173.5 431.0L174.0 431.2L174.5 431.0L175.0 431.2L175.5 431.3L176.0 431.0L176.5 431.2L177.0 431.2L177.5 431.2L178.0 431.3L178.5 430.9L179.0 431.0L179.5 431.0L180.0 431.2L180.5 431.2L181.0 431.2L181.5 431.2L182.0 431.1L182.5 431.0L183.0 431.3L183.5 431.2L184.0 431.4L184.5 431.2L185.0 431.1L185.5 431.1L186.0 431.3L186.5 431.3L187.0 431.2L187.5 431.1L188.0 431.1L188.5 431.0L189.0 430.9L189.5 431.4L190.0 431.0L190.5 431.3L191.0 431.3L191.5 431.6L192.0 430.8L192.5 430.9L193.0 431.1L193.5 431.2L194.0 431.2L194.5 431.2L195.0 431.1L195.5 431.1L196.0 431.2L196.5 431.3L197.0 431.1L197.5 431.2L198.0 431.4L198.5 431.4L199.0 431.1L199.5 430.9L200.0 431.2L200.5 431.5L201.0 430.8L201.5 431.2L202.0 431.1L202.5 431.4L203.0 431.1L203.5 431.1L204.0 431.2L204.5 431.0L205.0 431.3L205.5 431.3L206.0 431.2L206.5 431.4L207.0 431.2L207.5 431.2L208.0 431.2L208.5 431.3L209.0 431.5L209.5 431.4L210.0 431.1L210.5 431.4L211.0 431.0L211.5 431.1L212.0 431.2L212.5 431.1L213.0 430.9L213.5 431.3L214.0 431.0L214.5 431.4L215.0 431.2L215.5 431.3L216.0 431.1L216.5 431.2L217.0 431.2L217.5 431.2L218.0 431.3L218.5 431.3L219.0 431.5L219.5 431.1L220.0 431.2L220.5 431.2L221.0 431.3L221.5 431.1L222.0 431.3L222.5 431.0L223.0 431.5L223.5 431.1L224.0 431.1L224.5 431.3L225.0 431.0L225.5 431.5L226.0 437.1L226.5 434.4L227.0 432.4L227.5 430.1L228.0 426.5L228.5 431.2L229.0 431.4L229.5 431.2L230.0 431.2L230.5 431.3L231.0 431.5L231.5 431.0L232.0 431.2L232.5 431.2L233.0 431.1L233.5 431.0L234.0 430.9L234.5 431.0L235.0 431.1L235.5 431.2L236.0 431.0L236.5 434.3L237.0 432.8L237.5 436.2L238.0 431.1L238.5 427.2L239.0 431.5L239.5 431.0L240.0 431.3L240.5 431.5L241.0 431.1L241.5 431.0L242.0 431.1L242.5 431.3L243.0 431.2L243.5 431.2L244.0 431.4L244.5 431.5L245.0 431.0L245.5 430.9L246.0 431.3L246.5 431.1L247.0 431.0L247.5 431.1L248.0 431.2L248.5 431.4L249.0 431.2L249.5 431.1L250.0 431.2L250.5 431.3L251.0 431.2L251.5 431.1L252.0 431.4L252.5 431.1L253.0 431.0L253.5 431.0L254.0 427.9L254.5 433.6L255.0 431.4L255.5 431.3L256.0 431.1L256.5 431.3L257.0 431.4L257.5 430.9L258.0 431.4L258.5 431.3L259.0 431.0L259.5 431.3L260.0 431.0L260.5 431.4L261.0 431.0L261.5 431.0L262.0 431.3L262.5 431.2L263.0 431.3L263.5 431.1L264.0 422.1L264.5 435.2L265.0 432.9L265.5 435.7L266.0 432.7L266.5 431.0L267.0 430.8L267.5 431.2L268.0 431.3L268.5 431.4L269.0 431.0L269.5 431.3L270.0 431.1L270.5 430.9L271.0 431.2L271.5 431.3L272.0 431.6L272.5 431.1L273.0 431.2L273.5 431.2L274.0 431.1L274.5 431.3L275.0 430.9L275.5 430.9L276.0 431.2L276.5 431.2L277.0 431.3L277.5 431.4L278.0 431.1L278.5 431.1L279.0 430.9L279.5 431.2L280.0 430.9L280.5 431.2L281.0 431.1L281.5 431.2L282.0 431.2L282.5 431.2L283.0 431.3L283.5 431.1L284.0 431.2L284.5 431.2L285.0 431.3L285.5 431.4L286.0 431.3L286.5 431.2L287.0 431.0L287.5 431.3L288.0 431.6L288.5 431.4L289.0 431.4L289.5 431.0L290.0 431.0L290.5 431.0L291.0 431.1L291.5 431.0L292.0 431.5L292.5 431.3L293.0 431.4L293.5 431.2L294.0 431.3L294.5 431.4L295.0 431.1L295.5 431.1L296.0 430.9L296.5 431.5L297.0 431.1L297.5 431.1L298.0 431.0L298.5 431.3L299.0 431.3L299.5 430.3L300.0 430.2L300.5 430.6L301.0 432.0L301.5 431.0L302.0 431.2L302.5 431.4L303.0 431.3L303.5 430.2L304.0 431.5L304.5 431.4L305.0 431.2L305.5 431.4L306.0 431.0L306.5 432.1L307.0 431.3L307.5 432.0L308.0 431.4L308.5 431.3L309.0 431.9L309.5 432.0L310.0 431.9L310.5 431.3L311.0 430.0L311.5 430.5L312.0 431.8L312.5 431.4L313.0 431.2L313.5 430.4L314.0 431.3L314.5 431.8L315.0 431.1L315.5 431.4L316.0 431.2L316.5 431.2L317.0 431.4L317.5 431.3L318.0 431.6L318.5 431.6L319.0 431.1L319.5 431.0L320.0 431.2L320.5 431.3L321.0 426.6L321.5 426.9L322.0 431.9L322.5 431.2L323.0 431.4L323.5 430.9L324.0 431.6L324.5 431.4L325.0 431.3L325.5 431.3L326.0 431.3L326.5 431.2L327.0 431.1L327.5 431.4L328.0 431.3L328.5 431.1L329.0 431.2L329.5 430.9L330.0 431.1L330.5 431.1L331.0 431.0L331.5 434.9L332.0 433.0L332.5 431.7L333.0 431.2L333.5 431.1L334.0 431.3L334.5 431.3L335.0 431.6L335.5 431.1L336.0 431.2L336.5 431.2L337.0 431.2L337.5 431.0L338.0 431.5L338.5 431.1L339.0 431.2L339.5 431.1L340.0 431.0L340.5 431.0L341.0 431.4L341.5 431.3L342.0 431.0L342.5 431.0L343.0 431.2L343.5 431.2L344.0 431.4L344.5 431.3L345.0 431.0L345.5 431.2L346.0 431.1" stroke="#1a2050" stroke-width="1"/><path d="M49.5 496.9L50.5 497.6L51.5 498.2L52.5 499.7L53.5 501.5L54.5 501.8L55.5 504.9L56.5 508.0L57.5 509.9L58.5 509.8L59.5 506.7L60.5 502.8L61.5 498.6L62.5 497.3L63.5 498.1L64.5 500.1L65.5 500.7L66.5 501.6L67.5 502.1L68.5 506.9L69.5 509.1L70.5 509.2L71.5 508.1L72.5 503.8L73.5 500.2L74.5 497.2L75.5 497.2L76.5 499.4L77.5 499.8L78.5 500.4L79.5 501.8L80.5 503.7L81.5 506.8L82.5 509.8L83.5 510.3L84.5 508.1L85.5 502.6L86.5 499.2L87.5 497.5L88.5 498.5L89.5 498.7L90.5 500.3L91.5 501.2L92.5 501.6L93.5 504.9L94.5 506.6L95.5 509.3L96.5 507.7L97.5 505.1L98.5 501.8L99.5 498.1L100.5 498.1L101.5 499.8L102.5 500.5L103.5 501.3L104.5 500.9L105.5 503.4L106.5 505.6L107.5 508.4L108.5 510.3L109.5 506.9L110.5 503.4L111.5 499.6L112.5 498.9L113.5 499.7L114.5 500.3L115.5 501.3L116.5 501.0L117.5 502.6L118.5 504.1L119.5 507.0L120.5 507.9L121.5 507.6L122.5 506.6L123.5 501.4L124.5 499.5L125.5 498.8L126.5 498.3L127.5 500.3L128.5 501.6L129.5 501.6L130.5 502.3L131.5 504.6L132.5 507.1L133.5 508.4L134.5 506.5L135.5 503.9L136.5 501.0L137.5 499.7L138.5 500.7L139.5 501.2L140.5 501.2L141.5 501.6L142.5 502.5L143.5 503.6L144.5 505.4L145.5 507.5L146.5 506.3L147.5 505.7L148.5 502.5L149.5 500.0L150.5 499.1L151.5 499.9L152.5 500.9L153.5 501.9L154.5 501.9L155.5 502.4L156.5 506.2L157.5 506.7L158.5 507.8L159.5 507.5L160.5 504.3L161.5 501.5L162.5 500.3L163.5 499.3L164.5 500.0L165.5 500.8L166.5 501.4L167.5 501.7L168.5 503.4L169.5 505.3L170.5 507.2L171.5 508.1L172.5 505.8L173.5 503.6L174.5 500.9L175.5 499.0L176.5 499.0L177.5 500.4L178.5 501.8L179.5 500.9L180.5 502.8L181.5 504.0L182.5 505.8L183.5 508.6L184.5 508.0L185.5 506.4L186.5 502.4L187.5 499.9L188.5 499.2L189.5 501.1L190.5 500.8L191.5 501.3L192.5 500.2L193.5 503.2L194.5 504.5L195.5 508.0L196.5 508.8L197.5 506.7L198.5 504.5L199.5 500.6L200.5 499.3L201.5 498.5L202.5 500.2L203.5 500.8L204.5 500.1L205.5 501.7L206.5 503.2L207.5 506.7L208.5 508.9L209.5 509.7L210.5 507.4L211.5 502.6L212.5 499.1L213.5 497.8L214.5 499.0L215.5 499.1L216.5 501.7L217.5 501.3L218.5 503.1L219.5 504.5L220.5 507.5L221.5 509.8L222.5 508.1L223.5 506.3L224.5 501.1L225.5 498.2L226.5 498.2L227.5 499.1L228.5 499.4L229.5 501.7L230.5 501.3L231.5 503.1L232.5 506.2L233.5 509.5L234.5 509.9L235.5 508.7L236.5 504.0L237.5 499.3L238.5 496.8L239.5 497.5L240.5 499.0L241.5 500.5L242.5 500.7L243.5 501.5L244.5 504.7L245.5 507.5L246.5 509.7L247.5 510.5L248.5 507.0L249.5 501.3L250.5 498.5L251.5 496.9L252.5 497.9L253.5 499.7L254.5 499.5L255.5 500.6L256.5 502.6L257.5 505.5L258.5 508.8L259.5 510.6L260.5 509.4L261.5 504.9L262.5 500.1L263.5 497.3L264.5 497.0L265.5 499.8L266.5 499.0L267.5 500.2L268.5 501.2L269.5 503.6L270.5 508.6L271.5 510.6L272.5 510.7L273.5 508.8L274.5 502.4L275.5 498.1L276.5 496.4L277.5 498.2L278.5 498.5L279.5 500.1L280.5 500.5L281.5 502.2L282.5 505.6L283.5 508.7L284.5 510.4L285.5 509.6L286.5 505.8L287.5 501.0L288.5 497.9L289.5 496.4L290.5 497.6L291.5 500.0L292.5 500.5L293.5 501.4L294.5 502.4L295.5 505.9L296.5 510.1L297.5 510.1L298.5 508.5L299.5 502.8L300.5 499.1L301.5 497.1L302.5 496.9L303.5 499.5L304.5 500.3L305.5 500.9L306.5 502.4L307.5 504.3L308.5 507.9L309.5 510.0L310.5 509.1L311.5 506.9L312.5 502.2L313.5 498.8L314.5 497.1L315.5 498.5L316.5 500.3L317.5 501.6L318.5 500.7L319.5 503.5L320.5 505.0L321.5 508.7L322.5 509.9L323.5 507.2L324.5 504.5L325.5 500.4L326.5 498.1L327.5 498.6L328.5 499.8L329.5 499.9L330.5 499.6L331.5 501.3L332.5 503.7L333.5 505.6L334.5 508.3L335.5 509.3L336.5 506.2L337.5 503.1L338.5 499.2L339.5 499.3L340.5 498.8L341.5 499.6L342.5 500.7L343.5 501.1L344.5 503.1L345.5 504.6" stroke="#3a3a3a" stroke-width="0.9"/><path d="M49.5 524.2L50.5 524.9L51.5 525.7L52.5 526.8L53.5 528.3L54.5 529.3L55.5 529.2L56.5 527.6L57.5 526.0L58.5 524.4L59.5 523.6L60.5 523.2L61.5 523.8L62.5 524.8L63.5 525.1L64.5 526.4L65.5 527.5L66.5 528.6L67.5 529.1L68.5 528.4L69.5 526.6L70.5 524.9L71.5 524.1L72.5 523.8L73.5 524.4L74.5 524.3L75.5 525.1L76.5 525.4L77.5 527.0L78.5 528.0L79.5 528.6L80.5 528.9L81.5 527.8L82.5 526.2L83.5 524.8L84.5 523.8L85.5 524.2L86.5 524.4L87.5 524.5L88.5 525.4L89.5 526.3L90.5 527.4L91.5 527.7L92.5 528.9L93.5 528.3L94.5 527.2L95.5 525.7L96.5 524.4L97.5 524.2L98.5 524.1L99.5 524.4L100.5 525.0L101.5 525.4L102.5 526.5L103.5 527.5L104.5 528.3L105.5 529.0L106.5 527.9L107.5 526.4L108.5 524.7L109.5 524.2L110.5 524.2L111.5 524.3L112.5 524.9L113.5 524.9L114.5 526.3L115.5 526.8L116.5 528.1L117.5 528.7L118.5 528.3L119.5 527.2L120.5 526.0L121.5 524.7L122.5 523.7L123.5 523.8L124.5 524.3L125.5 525.0L126.5 525.2L127.5 526.3L128.5 527.5L129.5 528.6L130.5 528.8L131.5 527.8L132.5 526.8L133.5 524.6L134.5 524.2L135.5 523.6L136.5 523.9L137.5 524.5L138.5 524.7L139.5 525.8L140.5 526.7L141.5 528.2L142.5 528.9L143.5 529.0L144.5 528.2L145.5 526.0L146.5 524.2L147.5 523.7L148.5 523.1L149.5 523.9L150.5 524.0L151.5 524.9L152.5 525.7L153.5 527.3L154.5 529.0L155.5 529.4L156.5 529.1L157.5 527.6L158.5 525.3L159.5 524.0L160.5 523.0L161.5 523.3L162.5 523.8L163.5 524.2L164.5 525.4L165.5 526.7L166.5 527.8L167.5 529.2L168.5 529.6L169.5 528.5L170.5 526.8L171.5 524.4L172.5 523.3L173.5 523.2L174.5 523.3L175.5 524.0L176.5 524.6L177.5 525.4L178.5 527.6L179.5 529.1L180.5 529.9L181.5 529.7L182.5 527.9L183.5 525.9L184.5 523.9L185.5 522.9L186.5 523.0L187.5 523.3L188.5 523.7L189.5 524.9L190.5 526.5L191.5 528.0L192.5 529.9L193.5 530.2L194.5 529.2L195.5 527.0L196.5 525.0L197.5 523.3L198.5 522.8L199.5 523.1L200.5 523.6L201.5 524.1L202.5 525.7L203.5 527.2L204.5 528.6L205.5 530.0L206.5 529.9L207.5 528.9L208.5 526.2L209.5 524.0L210.5 522.8L211.5 522.4L212.5 523.2L213.5 524.3L214.5 524.9L215.5 526.1L216.5 527.8L217.5 529.7L218.5 530.5L219.5 530.0L220.5 527.6L221.5 525.1L222.5 523.6L223.5 522.8L224.5 522.5L225.5 523.4L226.5 524.0L227.5 525.4L228.5 526.5L229.5 528.0L230.5 530.1L231.5 530.1L232.5 529.2L233.5 526.4L234.5 524.5L235.5 522.9L236.5 522.5L237.5 522.7L238.5 523.7L239.5 524.3L240.5 525.8L241.5 527.5L242.5 529.3L243.5 530.1L244.5 529.8L245.5 528.0L246.5 525.8L247.5 524.0L248.5 522.7L249.5 522.9L250.5 523.5L251.5 524.3L252.5 525.4L253.5 526.0L254.5 528.0L255.5 529.3L256.5 530.3L257.5 529.2L258.5 527.3L259.5 524.7L260.5 523.4L261.5 522.9L262.5 523.5L263.5 523.8L264.5 524.7L265.5 525.9L266.5 526.8L267.5 528.2L268.5 529.6L269.5 529.4L270.5 528.3L271.5 525.9L272.5 524.6L273.5 523.5L274.5 523.8L275.5 523.8L276.5 524.2L277.5 524.7L278.5 525.9L279.5 527.5L280.5 528.4L281.5 529.5L282.5 528.9L283.5 527.7L284.5 525.7L285.5 524.1L286.5 523.5L287.5 523.8L288.5 523.9L289.5 524.8L290.5 525.4L291.5 526.4L292.5 528.4L293.5 528.8L294.5 529.3L295.5 528.0L296.5 526.5L297.5 524.9L298.5 524.2L299.5 523.4L300.5 523.6L301.5 524.2L302.5 524.8L303.5 525.7L304.5 527.3L305.5 528.1L306.5 528.8L307.5 528.4L308.5 527.4L309.5 526.1L310.5 524.5L311.5 523.7L312.5 524.0L313.5 524.0L314.5 524.9L315.5 525.1L316.5 526.2L317.5 527.5L318.5 528.6L319.5 528.4L320.5 528.4L321.5 526.5L322.5 525.0L323.5 524.3L324.5 523.8L325.5 524.1L326.5 524.4L327.5 524.9L328.5 525.6L329.5 526.7L330.5 528.1L331.5 528.7L332.5 528.4L333.5 527.7L334.5 526.3L335.5 525.1L336.5 523.9L337.5 524.1L338.5 524.5L339.5 524.5L340.5 525.0L341.5 526.0L342.5 527.0L343.5 528.2L344.5 528.6L345.5 528.2" stroke="#6b3fb5" stroke-width="0.9"/><path d="M49.5 548.8L50.5 549.8L51.5 551.4L52.5 552.9L53.5 553.2L54.5 552.2L55.5 551.6L56.5 549.4L57.5 548.2L58.5 547.2L59.5 547.9L60.5 548.0L61.5 549.2L62.5 550.0L63.5 551.0L64.5 552.1L65.5 552.8L66.5 553.2L67.5 551.7L68.5 550.6L69.5 548.8L70.5 547.9L71.5 547.9L72.5 548.2L73.5 548.9L74.5 549.1L75.5 549.6L76.5 551.1L77.5 551.8L78.5 552.9L79.5 552.8L80.5 551.8L81.5 550.4L82.5 548.6L83.5 547.6L84.5 548.3L85.5 548.5L86.5 548.9L87.5 549.1L88.5 550.1L89.5 551.5L90.5 552.4L91.5 553.2L92.5 551.6L93.5 550.9L94.5 549.3L95.5 547.9L96.5 547.6L97.5 547.9L98.5 548.4L99.5 548.9L100.5 549.8L101.5 550.8L102.5 552.0L103.5 553.0L104.5 552.4L105.5 551.7L106.5 550.1L107.5 548.5L108.5 548.0L109.5 547.6L110.5 547.6L111.5 548.3L112.5 548.8L113.5 550.0L114.5 550.8L115.5 552.9L116.5 552.9L117.5 552.6L118.5 551.5L119.5 549.2L120.5 548.2L121.5 547.3L122.5 547.3L123.5 547.6L124.5 548.7L125.5 549.0L126.5 550.7L127.5 551.8L128.5 553.0L129.5 553.3L130.5 552.6L131.5 550.2L132.5 548.6L133.5 547.4L134.5 547.1L135.5 547.9L136.5 548.0L137.5 548.9L138.5 549.5L139.5 551.3L140.5 552.8L141.5 553.4L142.5 553.3L143.5 552.3L144.5 549.8L145.5 547.8L146.5 546.4L147.5 546.5L148.5 547.3L149.5 547.9L150.5 549.1L151.5 550.7L152.5 551.7L153.5 553.7L154.5 554.3L155.5 553.5L156.5 551.8L157.5 548.4L158.5 547.0L159.5 547.0L160.5 546.8L161.5 547.4L162.5 548.4L163.5 549.3L164.5 551.0L165.5 553.2L166.5 553.9L167.5 554.1L168.5 552.3L169.5 549.9L170.5 547.8L171.5 546.7L172.5 545.8L173.5 546.9L174.5 547.5L175.5 548.9L176.5 550.2L177.5 551.9L178.5 553.8L179.5 554.5L180.5 553.8L181.5 551.7L182.5 548.8L183.5 547.2L184.5 545.9L185.5 546.5L186.5 547.3L187.5 548.4L188.5 549.0L189.5 550.5L190.5 552.7L191.5 554.6L192.5 554.0L193.5 553.3L194.5 550.8L195.5 548.0L196.5 546.8L197.5 546.5L198.5 546.9L199.5 547.6L200.5 548.5L201.5 549.4L202.5 551.5L203.5 553.2L204.5 555.2L205.5 554.1L206.5 552.1L207.5 549.2L208.5 547.6L209.5 546.9L210.5 546.7L211.5 547.1L212.5 548.0L213.5 548.7L214.5 550.3L215.5 552.2L216.5 553.9L217.5 554.6L218.5 553.0L219.5 551.0L220.5 548.6L221.5 547.2L222.5 546.3L223.5 547.2L224.5 547.7L225.5 548.0L226.5 550.0L227.5 551.4L228.5 552.9L229.5 554.0L230.5 554.2L231.5 552.2L232.5 550.4L233.5 548.0L234.5 547.3L235.5 547.0L236.5 547.4L237.5 547.9L238.5 549.0L239.5 549.9L240.5 551.9L241.5 552.9L242.5 554.0L243.5 553.1L244.5 551.0L245.5 548.9L246.5 547.8L247.5 546.6L248.5 547.2L249.5 547.7L250.5 548.7L251.5 549.2L252.5 550.4L253.5 552.1L254.5 553.5L255.5 553.7L256.5 552.0L257.5 550.6L258.5 548.6L259.5 547.4L260.5 547.1L261.5 547.8L262.5 548.1L263.5 548.7L264.5 549.7L265.5 551.5L266.5 552.5L267.5 553.4L268.5 553.2L269.5 551.9L270.5 550.0L271.5 548.0L272.5 547.5L273.5 547.5L274.5 547.8L275.5 548.7L276.5 549.5L277.5 550.2L278.5 551.7L279.5 552.8L280.5 553.2L281.5 552.9L282.5 550.9L283.5 549.1L284.5 548.6L285.5 547.7L286.5 547.9L287.5 548.2L288.5 548.7L289.5 549.5L290.5 550.4L291.5 552.0L292.5 552.6L293.5 553.1L294.5 551.9L295.5 550.0L296.5 548.8L297.5 548.1L298.5 548.2L299.5 547.8L300.5 548.2L301.5 549.2L302.5 550.0L303.5 550.7L304.5 552.4L305.5 552.8L306.5 552.6L307.5 551.3L308.5 549.6L309.5 548.4L310.5 547.7L311.5 547.9L312.5 548.4L313.5 549.1L314.5 549.4L315.5 550.3L316.5 551.6L317.5 552.6L318.5 552.7L319.5 551.6L320.5 550.6L321.5 548.7L322.5 547.9L323.5 548.0L324.5 547.9L325.5 548.0L326.5 548.9L327.5 550.0L328.5 550.5L329.5 552.1L330.5 552.9L331.5 552.9L332.5 551.3L333.5 549.7L334.5 548.3L335.5 548.2L336.5 547.9L337.5 548.4L338.5 548.7L339.5 549.5L340.5 550.3L341.5 551.4L342.5 552.7L343.5 553.0L344.5 552.5L345.5 550.9L346.5 549.5L347.5 548.1L348.5 547.5L349.5 547.4L350.5 548.1L351.5 548.7L352.5 549.6L353.5 551.1L354.5 552.1L355.5 553.2L356.5 553.1L357.5 552.5L358.5 550.0L359.5 548.4L360.5 547.3L361.5 547.4L362.5 547.8L363.5 548.4L364.5 548.9L365.5 550.1L366.5 551.5L367.5 552.5L368.5 554.0L369.5 553.0L370.5 551.4L371.5 549.2L372.5 547.5L373.5 547.3L374.5 547.4L375.5 547.3L376.5 548.3L377.5 549.4L378.5 551.2L379.5 552.5L380.5 553.8L381.5 553.8L382.5 553.2L383.5 550.9L384.5 548.2L385.5 546.8L386.5 546.5L387.5 547.5L388.5 547.9L389.5 548.6L390.5 549.7L391.5 551.4L392.5 553.1L393.5 554.2L394.5 554.3L395.5 552.3L396.5 549.6L397.5 547.1L398.5 546.7L399.5 546.7L400.5 547.4L401.5 547.8L402.5 549.2L403.5 550.5L404.5 552.4L405.5 553.8L406.5 554.6L407.5 553.9L408.5 551.2L409.5 548.6L410.5 547.4L411.5 546.2L412.5 546.6L413.5 547.5L414.5 548.3L415.5 549.5L416.5 550.6L417.5 553.3L418.5 554.7L419.5 554.4L420.5 552.8L421.5 550.1L422.5 548.1L423.5 546.6L424.5 546.6L425.5 547.1L426.5 548.2L427.5 548.6L428.5 550.2L429.5 551.2L430.5 554.2L431.5 554.7L432.5 553.6L433.5 552.1L434.5 549.0L435.5 547.0L436.5 546.5L437.5 546.6L438.5 547.6L439.5 547.6L440.5 549.3L441.5 550.2L442.5 552.3L443.5 554.3L444.5 554.7L445.5 552.7L446.5 550.7L447.5 548.6L448.5 546.5L449.5 546.8L450.5 547.0L451.5 547.4L452.5 548.8L453.5 549.7L454.5 551.6L455.5 553.0L456.5 554.3L457.5 553.6L458.5 552.2L459.5 549.6L460.5 547.3L461.5 547.1L462.5 547.1L463.5 547.2L464.5 548.1L465.5 549.3L466.5 550.5L467.5 552.2L468.5 553.8L469.5 554.0L470.5 553.7L471.5 551.5L472.5 548.6L473.5 546.9L474.5 546.8L475.5 546.6L476.5 547.7L477.5 548.5L478.5 549.5L479.5 551.2L480.5 552.5L481.5 553.9L482.5 553.5L483.5 552.6L484.5 550.1L485.5 548.2L486.5 547.5L487.5 547.3L488.5 547.4L489.5 548.0L490.5 548.7L491.5 549.9L492.5 551.3L493.5 552.8L494.5 553.5L495.5 552.9L496.5 551.5L497.5 549.2L498.5 547.8L499.5 547.3L500.5 547.0L501.5 548.5L502.5 548.2L503.5 549.3L504.5 550.6L505.5 552.2L506.5 553.1L507.5 553.2L508.5 552.0L509.5 550.7L510.5 548.6L511.5 547.9L512.5 547.6L513.5 547.7L514.5 548.6L515.5 549.2L516.5 549.6L517.5 550.5L518.5 552.5L519.5 552.7L520.5 552.5L521.5 551.5L522.5 549.8L523.5 548.5L524.5 547.4L525.5 547.8L526.5 548.3L527.5 548.8L528.5 549.0L529.5 550.3L530.5 551.2L531.5 552.2L532.5 553.0L533.5 552.2L534.5 551.2L535.5 549.2L536.5 547.9L537.5 547.8L538.5 548.2L539.5 548.3L540.5 549.0L541.5 549.7L542.5 550.2L543.5 551.3L544.5 553.2L545.5 552.5L546.5 551.5L547.5 550.1L548.5 548.6L549.5 547.7L550.5 547.6L551.5 548.1L552.5 548.3L553.5 549.6L554.5 549.7L555.5 551.3L556.5 552.3L557.5 552.8L558.5 552.6L559.5 551.3L560.5 549.6L561.5 548.0L562.5 547.9L563.5 548.4L564.5 548.6L565.5 549.0L566.5 549.5L567.5 550.7L568.5 551.9L569.5 552.8L570.5 553.3L571.5 552.5L572.5 550.6L573.5 548.6L574.5 547.6L575.5 547.5L576.5 547.7L577.5 548.5L578.5 548.8L579.5 550.0L580.5 550.8L581.5 552.3L582.5 553.7L583.5 552.9L584.5 552.0L585.5 549.8L586.5 547.9L587.5 547.4L588.5 547.5L589.5 547.5L590.5 548.0L591.5 549.3L592.5 550.2L593.5 552.3L594.5 553.0L595.5 553.2L596.5 552.8L597.5 551.3L598.5 549.2L599.5 547.6L600.5 546.7L601.5 547.2L602.5 548.3L603.5 549.2L604.5 549.7L605.5 551.1L606.5 552.4L607.5 554.2L608.5 554.1L609.5 552.6L610.5 550.1L611.5 548.4L612.5 547.3L613.5 546.6L614.5 547.0L615.5 548.2L616.5 548.6L617.5 550.1L618.5 551.6L619.5 553.3L620.5 554.1L621.5 553.1L622.5 551.4L623.5 549.5L624.5 547.9L625.5 546.9L626.5 547.2L627.5 547.9L628.5 548.2L629.5 548.9L630.5 550.5L631.5 552.4L632.5 554.3L633.5 554.4L634.5 553.2L635.5 550.8L636.5 548.2L637.5 546.8L638.5 546.2L639.5 546.8L640.5 548.1L641.5 548.7L642.5 549.3L643.5 551.2L644.5 553.6L645.5 554.6L646.5 554.0L647.5 552.3L648.5 550.1L649.5 547.5L650.5 546.5L651.5 546.1L652.5 547.0L653.5 547.9L654.5 548.6L655.5 550.2L656.5 552.1L657.5 554.2L658.5 554.5L659.5 553.4L660.5 551.5L661.5 548.3L662.5 547.4L663.5 546.0" stroke="#6b3fb5" stroke-width="0.9"/><path d="M50 591H170l2-.5H330l3-.4H664" stroke="#444" stroke-width="1"/><path d="M49.5 653.4L51.0 653.4L52.5 653.7L54.0 653.4L55.5 653.2L57.0 652.9L58.5 652.6L60.0 653.0L61.5 653.2L63.0 653.6L64.5 653.6L66.0 653.5L67.5 653.3L69.0 652.8L70.5 652.8L72.0 652.8L73.5 653.1L75.0 653.5L76.5 653.6L78.0 653.9L79.5 653.6L81.0 652.9L82.5 652.9L84.0 652.8L85.5 652.7L87.0 653.2L88.5 653.6L90.0 653.5L91.5 653.4L93.0 653.2L94.5 652.7L96.0 652.7L97.5 652.6L99.0 652.9L100.5 653.4L102.0 653.4L103.5 653.7L105.0 653.6L106.5 652.7L108.0 652.9L109.5 652.7L111.0 652.9L112.5 653.4L114.0 653.6L115.5 653.7L117.0 653.6L118.5 652.9L120.0 653.0L121.5 652.7L123.0 652.8L124.5 653.0L126.0 653.4L127.5 653.9L129.0 653.6L130.5 653.2L132.0 652.8L133.5 652.9L135.0 652.7L136.5 653.2L138.0 653.5L139.5 653.5L141.0 653.7L142.5 653.3L144.0 653.2L145.5 652.9L147.0 652.7L148.5 652.8L150.0 652.9L151.5 653.5L153.0 653.7L154.5 653.5L156.0 653.1L157.5 653.0L159.0 652.7L160.5 652.7L162.0 653.2L163.5 653.5L165.0 653.7L166.5 653.9L168.0 653.4L169.5 653.0L171.0 652.8L172.5 652.7L174.0 652.9L175.5 653.3L177.0 653.6L178.5 653.6L180.0 653.5L181.5 653.3L183.0 653.0L184.5 652.6L186.0 652.9L187.5 653.4L189.0 653.5L190.5 653.7L192.0 653.5L193.5 653.5L195.0 652.9L196.5 652.7L198.0 652.7L199.5 653.3L201.0 653.6L202.5 653.8L204.0 653.6L205.5 653.5L207.0 653.0L208.5 652.8L210.0 652.7L211.5 653.0L213.0 653.4L214.5 653.7L216.0 653.6L217.5 653.6L219.0 653.3L220.5 652.9L222.0 652.6L223.5 652.8L225.0 653.1L226.5 653.4L228.0 653.5L229.5 653.5L231.0 653.5L232.5 653.1L234.0 653.0L235.5 652.8L237.0 653.1L238.5 653.2L240.0 653.7L241.5 653.6L243.0 653.5L244.5 653.0L246.0 652.7L247.5 652.8L249.0 652.9L250.5 653.3L252.0 653.6L253.5 653.6L255.0 653.7L256.5 653.2L258.0 652.9L259.5 652.9L261.0 652.8L262.5 653.1L264.0 653.4L265.5 653.5L267.0 653.9L268.5 653.5L270.0 653.1L271.5 652.6L273.0 652.6L274.5 652.6L276.0 653.3L277.5 653.6L279.0 653.6L280.5 653.5L282.0 653.3L283.5 652.9L285.0 652.5L286.5 652.9L288.0 653.2L289.5 653.5L291.0 653.9L292.5 653.8L294.0 653.5L295.5 652.9L297.0 652.7L298.5 652.6L300.0 653.1L301.5 653.4L303.0 653.6L304.5 653.8L306.0 653.4L307.5 653.3L309.0 652.9L310.5 652.7L312.0 652.8L313.5 653.3L315.0 653.3L316.5 653.7L318.0 653.5L319.5 653.3L321.0 653.1L322.5 652.7L324.0 652.8L325.5 653.1L327.0 653.5L328.5 653.6L330.0 653.4L331.5 653.5L333.0 653.1L334.5 652.9L336.0 652.7L337.5 652.9L339.0 653.3L340.5 653.6L342.0 653.9L343.5 653.4L345.0 653.4L346.5 652.9L348.0 652.7L349.5 652.8L351.0 653.0L352.5 653.4L354.0 653.7L355.5 653.4L357.0 653.5L358.5 653.0L360.0 652.8L361.5 652.7L363.0 653.1L364.5 653.5L366.0 653.7L367.5 653.7L369.0 653.5L370.5 653.1L372.0 652.8L373.5 652.7L375.0 652.8L376.5 653.2L378.0 653.2L379.5 653.6L381.0 653.7L382.5 653.3L384.0 652.9L385.5 652.8L387.0 652.7L388.5 652.9L390.0 653.5L391.5 653.7L393.0 653.5L394.5 653.5L396.0 652.9L397.5 652.7L399.0 652.5L400.5 653.0L402.0 653.3L403.5 653.5L405.0 653.7L406.5 653.6L408.0 653.4L409.5 652.9L411.0 652.7L412.5 652.7L414.0 653.3L415.5 653.5L417.0 653.7L418.5 653.5L420.0 653.4L421.5 653.0L423.0 652.6L424.5 652.6L426.0 653.0L427.5 653.4L429.0 653.8L430.5 653.7L432.0 653.6L433.5 653.0L435.0 652.9L436.5 652.8L438.0 652.8L439.5 653.1L441.0 653.7L442.5 653.6L444.0 653.6L445.5 653.3L447.0 652.8L448.5 652.6L450.0 652.8L451.5 653.1L453.0 653.3L454.5 653.6L456.0 653.7L457.5 653.3L459.0 653.0L460.5 652.8L462.0 652.9L463.5 653.0L465.0 653.1L466.5 653.4L468.0 653.8L469.5 653.7L471.0 653.1L472.5 653.1L474.0 652.6L475.5 652.8L477.0 653.0L478.5 653.5L480.0 653.6L481.5 653.8L483.0 653.3L484.5 653.0L486.0 652.6L487.5 652.8L489.0 653.0L490.5 653.0L492.0 653.8L493.5 653.9L495.0 653.7L496.5 653.2L498.0 652.7L499.5 652.5L501.0 652.9L502.5 653.0L504.0 653.6L505.5 653.6L507.0 653.6L508.5 653.4L510.0 653.0L511.5 652.7L513.0 652.8L514.5 653.1L516.0 653.4L517.5 653.4L519.0 653.7L520.5 653.4L522.0 653.4L523.5 652.8L525.0 652.9L526.5 652.8L528.0 653.0L529.5 653.6L531.0 653.7L532.5 653.7L534.0 653.2L535.5 652.9L537.0 652.8L538.5 652.8L540.0 653.0L541.5 653.5L543.0 653.7L544.5 653.6L546.0 653.4L547.5 652.8L549.0 652.8L550.5 652.7L552.0 652.7L553.5 653.5L555.0 653.5L556.5 653.7L558.0 653.6L559.5 653.3L561.0 652.8L562.5 652.6L564.0 652.8L565.5 653.3L567.0 653.5L568.5 653.9L570.0 653.6L571.5 653.3L573.0 653.0L574.5 652.7L576.0 652.6L577.5 652.9L579.0 653.3L580.5 653.4L582.0 653.8L583.5 653.4L585.0 652.8L586.5 653.1L588.0 652.8L589.5 653.0L591.0 653.2L592.5 653.5L594.0 653.8L595.5 653.4L597.0 653.5L598.5 653.0L600.0 652.6L601.5 652.9L603.0 653.2L604.5 653.7L606.0 653.6L607.5 653.5L609.0 653.4L610.5 653.1L612.0 652.9L613.5 652.7L615.0 653.1L616.5 653.4L618.0 653.4L619.5 653.6L621.0 653.6L622.5 653.1L624.0 652.6L625.5 652.7L627.0 652.6L628.5 653.3L630.0 653.5L631.5 653.6L633.0 653.8L634.5 653.3L636.0 653.0L637.5 652.7L639.0 652.7L640.5 653.1L642.0 653.3L643.5 653.6L645.0 653.6L646.5 653.4L648.0 652.9L649.5 652.9L651.0 652.7L652.5 652.9L654.0 653.3L655.5 653.6L657.0 653.6L658.5 653.6L660.0 653.0L661.5 653.0L663.0 652.8" stroke="#333" stroke-width="0.9"/><path d="M49.5 676.3L51.0 676.7L52.5 676.9L54.0 676.3L55.5 676.2L57.0 675.9L58.5 675.9L60.0 675.9L61.5 676.4L63.0 676.6L64.5 676.7L66.0 676.4L67.5 676.2L69.0 676.0L70.5 675.7L72.0 676.1L73.5 676.0L75.0 676.5L76.5 676.7L78.0 676.5L79.5 676.4L81.0 676.2L82.5 675.8L84.0 675.9L85.5 675.9L87.0 676.4L88.5 676.9L90.0 676.7L91.5 676.7L93.0 676.5L94.5 676.0L96.0 675.8L97.5 675.9L99.0 676.2L100.5 676.4L102.0 676.7L103.5 676.6L105.0 676.5L106.5 676.3L108.0 675.9L109.5 675.9L111.0 676.0L112.5 676.4L114.0 676.6L115.5 676.8L117.0 676.4L118.5 676.3L120.0 676.2L121.5 675.8L123.0 676.0L124.5 676.2L126.0 676.4L127.5 676.7L129.0 676.6L130.5 676.5L132.0 676.2L133.5 675.8L135.0 675.7L136.5 676.3L138.0 676.6L139.5 676.8L141.0 676.9L142.5 676.6L144.0 676.0L145.5 676.1L147.0 676.0L148.5 675.9L150.0 676.2L151.5 676.7L153.0 676.5L154.5 676.5L156.0 676.2L157.5 675.9L159.0 675.9L160.5 675.9L162.0 676.3L163.5 676.4L165.0 676.4L166.5 676.4L168.0 676.6L169.5 676.2L171.0 676.0L172.5 676.0L174.0 676.1L175.5 676.5L177.0 676.8L178.5 676.8L180.0 676.5L181.5 676.0L183.0 675.9L184.5 675.8L186.0 676.1L187.5 676.2L189.0 676.6L190.5 676.8L192.0 676.8L193.5 676.4L195.0 675.9L196.5 676.1L198.0 675.9L199.5 676.2L201.0 676.4L202.5 676.5L204.0 676.7L205.5 676.5L207.0 676.2L208.5 676.2L210.0 676.0L211.5 676.0L213.0 676.3L214.5 676.6L216.0 676.5L217.5 676.5L219.0 676.3L220.5 675.7L222.0 675.8L223.5 675.9L225.0 676.1L226.5 676.4L228.0 676.4L229.5 676.8L231.0 676.3L232.5 676.0L234.0 675.9L235.5 675.9L237.0 676.1L238.5 676.5L240.0 676.7L241.5 676.8L243.0 676.7L244.5 676.3L246.0 676.0L247.5 675.7L249.0 676.2L250.5 676.5L252.0 676.5L253.5 676.9L255.0 676.5L256.5 676.2L258.0 675.9L259.5 675.8L261.0 676.2L262.5 676.2L264.0 676.4L265.5 676.5L267.0 676.7L268.5 676.4L270.0 676.1L271.5 675.9L273.0 675.9L274.5 676.0L276.0 676.3L277.5 676.7L279.0 676.8L280.5 676.5L282.0 676.2L283.5 676.1L285.0 675.9L286.5 676.1L288.0 676.1L289.5 676.5L291.0 676.7L292.5 676.9L294.0 676.4L295.5 676.2L297.0 675.9L298.5 676.0L300.0 676.1L301.5 676.6L303.0 676.7L304.5 676.9L306.0 676.6L307.5 676.5L309.0 675.9L310.5 675.9L312.0 676.1L313.5 676.2L315.0 676.3L316.5 676.7L318.0 676.5L319.5 676.3L321.0 676.1L322.5 676.0L324.0 675.8L325.5 676.2L327.0 676.4L328.5 676.7L330.0 676.8L331.5 676.4L333.0 676.4L334.5 675.9L336.0 675.8L337.5 676.1L339.0 676.0L340.5 676.6L342.0 676.5L343.5 676.5L345.0 676.2L346.5 675.8L348.0 675.9L349.5 675.9L351.0 676.3L352.5 676.5L354.0 677.0L355.5 676.7L357.0 676.4L358.5 676.2L360.0 675.9L361.5 675.8L363.0 676.1L364.5 676.3L366.0 676.7L367.5 676.8L369.0 676.6L370.5 676.0L372.0 675.9L373.5 675.7L375.0 676.2L376.5 676.3L378.0 676.5L379.5 677.0L381.0 676.4L382.5 676.3L384.0 676.2L385.5 675.9L387.0 676.3L388.5 676.2L390.0 676.3L391.5 676.7L393.0 676.8L394.5 676.5L396.0 676.1L397.5 675.9L399.0 676.0L400.5 676.2L402.0 676.3L403.5 676.7L405.0 677.0L406.5 676.6L408.0 676.1L409.5 676.2L411.0 675.7L412.5 675.8L414.0 676.2L415.5 676.6L417.0 676.8L418.5 676.8L420.0 676.4L421.5 676.1L423.0 675.7L424.5 675.7L426.0 676.1L427.5 676.3L429.0 676.7L430.5 676.8L432.0 676.5L433.5 676.3L435.0 676.0L436.5 676.1L438.0 676.1L439.5 676.5L441.0 676.7L442.5 676.8L444.0 676.8L445.5 676.5L447.0 676.2L448.5 675.7L450.0 675.8L451.5 676.3L453.0 676.4L454.5 676.7L456.0 676.8L457.5 676.5L459.0 676.2L460.5 675.9L462.0 675.9L463.5 675.9L465.0 676.4L466.5 676.5L468.0 676.7L469.5 676.9L471.0 676.3L472.5 676.2L474.0 676.2L475.5 676.0L477.0 676.3L478.5 676.5L480.0 676.9L481.5 676.9L483.0 676.6L484.5 676.1L486.0 675.8L487.5 676.0L489.0 676.2L490.5 676.6L492.0 676.6L493.5 676.7L495.0 676.4L496.5 676.1L498.0 676.0L499.5 675.9L501.0 676.0L502.5 676.1L504.0 676.4L505.5 676.8L507.0 676.7L508.5 676.4L510.0 676.0L511.5 675.8L513.0 676.0L514.5 676.2L516.0 676.2L517.5 676.6L519.0 676.8L520.5 676.5L522.0 676.1L523.5 675.9L525.0 676.0L526.5 676.2L528.0 676.2L529.5 676.7L531.0 676.7L532.5 676.7L534.0 676.5L535.5 676.2L537.0 675.9L538.5 675.9L540.0 676.1L541.5 676.4L543.0 676.6L544.5 676.8L546.0 676.3L547.5 676.1L549.0 675.8L550.5 675.9L552.0 676.0L553.5 676.3L555.0 676.5L556.5 676.8L558.0 676.6L559.5 676.1L561.0 675.9L562.5 675.8L564.0 676.0L565.5 676.3L567.0 676.6L568.5 676.9L570.0 676.7L571.5 676.4L573.0 676.0L574.5 675.9L576.0 676.0L577.5 676.2L579.0 676.6L580.5 676.7L582.0 676.8L583.5 676.6L585.0 676.2L586.5 675.8L588.0 675.9L589.5 676.0L591.0 676.3L592.5 676.7L594.0 676.7L595.5 676.8L597.0 676.2L598.5 676.1L600.0 675.8L601.5 676.1L603.0 676.0L604.5 676.5L606.0 676.6L607.5 676.9L609.0 676.4L610.5 676.2L612.0 676.0L613.5 675.8L615.0 676.0L616.5 676.4L618.0 676.7L619.5 676.6L621.0 676.6L622.5 676.5L624.0 676.1L625.5 676.1L627.0 676.2L628.5 676.2L630.0 676.6L631.5 676.9L633.0 676.7L634.5 676.3L636.0 676.1L637.5 676.0L639.0 675.7L640.5 676.2L642.0 676.4L643.5 676.8L645.0 676.7L646.5 676.4L648.0 676.2L649.5 675.8L651.0 675.9L652.5 676.1L654.0 676.4L655.5 676.8L657.0 676.7L658.5 676.8L660.0 676.5L661.5 675.7L663.0 675.9" stroke="#333" stroke-width="0.9"/><path d="M49.500 696.500h2M84.0 696.500H102.0M135.3 696.500H153.3M186.6 696.500H204.6M237.9 696.500H255.9M289.2 696.500H307.2M340.5 696.500H358.5M391.8 696.500H409.8M443.1 696.500H461.1M494.4 696.500H512.4M545.7 696.500H563.7M597.0 696.500H615.0M648.3 696.500H666.3" stroke="#444" stroke-width="0.9"/></svg>
<div class="t" style="left:75.30px;top:380.31px;font-size:7.2px;color:#222;letter-spacing:-0.085px;">84 bpm</div>
<div class="t" style="left:126.60px;top:380.31px;font-size:7.2px;color:#222;letter-spacing:-0.085px;">85 bpm</div>
<div class="t" style="left:177.90px;top:380.31px;font-size:7.2px;color:#222;letter-spacing:-0.085px;">83 bpm</div>
<div class="t" style="left:229.20px;top:380.31px;font-size:7.2px;color:#222;letter-spacing:-0.085px;">83 bpm</div>
<div class="t" style="left:280.50px;top:380.31px;font-size:7.2px;color:#222;letter-spacing:-0.085px;">80 bpm</div>
<div class="t" style="left:331.80px;top:380.31px;font-size:7.2px;color:#222;letter-spacing:-0.085px;">80 bpm</div>
<div class="t" style="left:49.00px;top:594.57px;font-size:7.6px;color:#222;letter-spacing:-0.227px;">94</div>
<div class="t" style="left:100.30px;top:594.57px;font-size:7.6px;color:#222;letter-spacing:-0.227px;">95</div>
<div class="t" style="left:151.60px;top:594.57px;font-size:7.6px;color:#222;letter-spacing:-0.227px;">95</div>
<div class="t" style="left:202.90px;top:594.57px;font-size:7.6px;color:#222;letter-spacing:-0.227px;">94</div>
<div class="t" style="left:254.20px;top:594.57px;font-size:7.6px;color:#222;letter-spacing:-0.227px;">94</div>
<div class="t" style="left:305.50px;top:594.57px;font-size:7.6px;color:#222;letter-spacing:-0.227px;">94</div>
<div class="t" style="left:356.80px;top:594.57px;font-size:7.6px;color:#222;letter-spacing:-0.227px;">95</div>
<div class="t" style="left:408.10px;top:594.57px;font-size:7.6px;color:#222;letter-spacing:-0.227px;">94</div>
<div class="t" style="left:459.40px;top:594.57px;font-size:7.6px;color:#222;letter-spacing:-0.227px;">94</div>
<div class="t" style="left:510.70px;top:594.57px;font-size:7.6px;color:#222;letter-spacing:-0.227px;">95</div>
<div class="t" style="left:562.00px;top:594.57px;font-size:7.6px;color:#222;letter-spacing:-0.227px;">95</div>
<div class="t" style="left:613.30px;top:594.57px;font-size:7.6px;color:#222;letter-spacing:-0.227px;">95</div>
<div class="t" style="left:53.00px;top:689.87px;font-size:7.6px;color:#222;letter-spacing:-0.505px;">34 mm Hg</div>
<div class="t" style="left:104.30px;top:689.87px;font-size:7.6px;color:#222;letter-spacing:-0.505px;">34 mm Hg</div>
<div class="t" style="left:155.60px;top:689.87px;font-size:7.6px;color:#222;letter-spacing:-0.505px;">34 mm Hg</div>
<div class="t" style="left:206.90px;top:689.87px;font-size:7.6px;color:#222;letter-spacing:-0.505px;">34 mm Hg</div>
<div class="t" style="left:258.20px;top:689.87px;font-size:7.6px;color:#222;letter-spacing:-0.505px;">34 mm Hg</div>
<div class="t" style="left:309.50px;top:689.87px;font-size:7.6px;color:#222;letter-spacing:-0.505px;">34 mm Hg</div>
<div class="t" style="left:360.80px;top:689.87px;font-size:7.6px;color:#222;letter-spacing:-0.505px;">34 mm Hg</div>
<div class="t" style="left:412.10px;top:689.87px;font-size:7.6px;color:#222;letter-spacing:-0.505px;">34 mm Hg</div>
<div class="t" style="left:463.40px;top:689.87px;font-size:7.6px;color:#222;letter-spacing:-0.505px;">34 mm Hg</div>
<div class="t" style="left:514.70px;top:689.87px;font-size:7.6px;color:#222;letter-spacing:-0.505px;">34 mm Hg</div>
<div class="t" style="left:566.00px;top:689.87px;font-size:7.6px;color:#222;letter-spacing:-0.505px;">34 mm Hg</div>
<div class="t" style="left:617.30px;top:689.87px;font-size:7.6px;color:#222;letter-spacing:-0.505px;">34 mm Hg</div>
<div class="t" style="left:49.00px;top:710.07px;font-size:7.6px;color:#222;letter-spacing:-0.194px;">2:10:55 AM</div>
<div class="t" style="left:49.00px;top:719.57px;font-size:7.6px;color:#10104a;letter-spacing:-0.362px;">Page# 462</div>
<div class="t" style="left:203.00px;top:710.07px;font-size:7.6px;color:#222;letter-spacing:-0.138px;">2:11:25 AM</div>
<div class="t" style="left:203.00px;top:719.57px;font-size:7.6px;color:#10104a;letter-spacing:-0.362px;">Page# 463</div>
<div class="t" style="left:357.00px;top:710.07px;font-size:7.6px;color:#222;letter-spacing:-0.138px;">2:11:55 AM</div>
<div class="t" style="left:357.00px;top:719.57px;font-size:7.6px;color:#10104a;letter-spacing:-0.362px;">Page# 464</div>
<div class="t" style="left:511.00px;top:710.07px;font-size:7.6px;color:#222;letter-spacing:-0.194px;">2:12:25 AM</div>
<div class="t" style="left:511.00px;top:719.57px;font-size:7.6px;color:#10104a;letter-spacing:-0.362px;">Page# 465</div>
<div class="t" style="left:594.00px;top:603.57px;font-size:7.6px;color:#222;letter-spacing:-0.254px;">Min:  94%  Avg:  95%</div>
<div class="t" style="left:561.00px;top:642.07px;font-size:7.6px;color:#222;letter-spacing:-0.362px;">Min:  5 cm H2O  Max:  7 cm H2O</div>
<div class="t" style="left:583.00px;top:665.07px;font-size:7.6px;color:#222;letter-spacing:-0.388px;">Min:  23 lpm  Max:  30 lpm</div>
<div class="t" style="left:561.00px;top:698.57px;font-size:7.6px;color:#222;letter-spacing:-0.419px;">Max:  34 mm Hg  Min:  34 mm Hg</div>
<div class="a" style="left:662px;top:40px;width:176px;height:200px;background:#4f66b4;"></div>
<div class="a" style="left:666px;top:44.5px;width:167.5px;height:152px;background:#000;"></div>
<div class="a" style="left:829px;top:203px;width:9px;height:25.5px;background:linear-gradient(#9c9ca2,#d6d6da 45%,#b0b0b4 70%,#86868a);"></div>
<div class="a" style="left:838px;top:40px;width:182px;height:188px;background:#fff;"></div>
<div class="a" style="left:1019.5px;top:40px;width:4.5px;height:340px;background:linear-gradient(90deg,#d8d8d8,#8a8a8a 70%,#404040);"></div>
<div class="a" style="left:868.6px;top:42px;width:151.4px;height:12px;background:#f0f0f0;border-bottom:1px solid #d9d9d9"></div>
<div class="a tab" style="left:868.6px;width:28.4px"></div>
<div class="a tab" style="left:897px;width:40px"></div>
<div class="a tab" style="left:937px;width:42px"></div>
<div class="a tab" style="left:979px;width:21px"></div>
<div class="t" style="left:844.00px;top:42.77px;font-size:8.3px;color:#000;letter-spacing:-0.908px;">All</div>
<div class="t" style="left:871.00px;top:42.77px;font-size:8.3px;color:#000;letter-spacing:-0.561px;">Events</div>
<div class="t" style="left:901.00px;top:42.77px;font-size:8.3px;color:#000;letter-spacing:-0.926px;">Comments</div>
<div class="t" style="left:941.60px;top:42.77px;font-size:8.3px;color:#000;letter-spacing:-0.921px;">Bookmarks</div>
<div class="t" style="left:983.30px;top:42.77px;font-size:8.3px;color:#000;letter-spacing:-1.044px;">Snap</div>
<div class="a" style="left:1001px;top:42px;width:8px;height:11px;background:#f0f0f0;border:1px solid #c0c0c0"></div>
<div class="a" style="left:1010px;top:42px;width:9px;height:11px;background:#f0f0f0;border:1px solid #c0c0c0"></div>
<svg style="left:1001px;top:42px" width="18" height="11"><path d="M5.500 3.500v4l-2.500-2zM12 3.500v4l2.500-2z" fill="#000"/></svg>
<div class="a" style="left:842px;top:59px;width:33px;height:14.5px;background:#fff;border:1px solid #7a7a7a"></div>
<div class="a" style="left:877.5px;top:60.5px;width:37px;height:12.5px;background:#e1e1e1;border:1px solid #adadad"></div>
<div class="t" style="left:881.00px;top:62.77px;font-size:8.3px;color:#000;letter-spacing:-0.488px;">page</div>
<svg style="left:902px;top:63px" width="10" height="8"><path d="M1.500 2l3 3 3-3" stroke="#444" fill="none" stroke-width="1"/></svg>
<div class="a btn" style="left:918.5px;top:59.500px;width:33px;height:13.500px"></div><div class="a btn" style="left:955.5px;top:59.500px;width:33.500px;height:13.500px"></div>
<div class="t" style="left:925.50px;top:62.47px;font-size:8.3px;color:#000;letter-spacing:-0.597px;">Go To</div>
<div class="t" style="left:961.80px;top:62.47px;font-size:8.3px;color:#000;letter-spacing:-0.547px;">Delete</div>
<div class="t" style="left:848.70px;top:81.27px;font-size:8.3px;color:#000;letter-spacing:-0.729px;">Text</div>
<div class="t" style="left:888.30px;top:81.27px;font-size:8.3px;color:#000;letter-spacing:-0.540px;">Elapsed</div>
<div class="t" style="left:927.60px;top:81.27px;font-size:8.3px;color:#000;letter-spacing:-0.190px;">Start Time</div>
<div class="t" style="left:977.80px;top:81.27px;font-size:8.3px;color:#000;letter-spacing:-0.427px;">Durati...</div>
<div class="a" style="left:883.7px;top:78px;width:1px;height:15px;background:#e5e5e5;"></div>
<div class="a" style="left:923.6px;top:78px;width:1px;height:15px;background:#e5e5e5;"></div>
<div class="a" style="left:973.5px;top:78px;width:1px;height:15px;background:#e5e5e5;"></div>
<div class="a" style="left:848px;top:143.5px;width:157px;height:12px;background:#f0f0f0;"></div>
<div class="t" style="left:849.00px;top:95.57px;font-size:8.3px;color:#111;letter-spacing:-0.410px;">Short R-R</div>
<div class="t" style="left:888.30px;top:95.57px;font-size:8.3px;color:#111;letter-spacing:-0.636px;">03:48:20</div>
<div class="t" style="left:927.60px;top:95.57px;font-size:8.3px;color:#111;letter-spacing:-0.407px;">2:08:44 AM</div>
<div class="t" style="left:977.80px;top:95.57px;font-size:8.3px;color:#111;letter-spacing:-0.384px;">0.4</div>
<div class="t" style="left:849.00px;top:108.07px;font-size:8.3px;color:#111;letter-spacing:-0.410px;">Short R-R</div>
<div class="t" style="left:888.30px;top:108.07px;font-size:8.3px;color:#111;letter-spacing:-0.636px;">03:48:26</div>
<div class="t" style="left:927.60px;top:108.07px;font-size:8.3px;color:#111;letter-spacing:-0.407px;">2:08:50 AM</div>
<div class="t" style="left:977.80px;top:108.07px;font-size:8.3px;color:#111;letter-spacing:-0.384px;">0.4</div>
<div class="t" style="left:849.00px;top:120.57px;font-size:8.3px;color:#111;letter-spacing:-0.410px;">Short R-R</div>
<div class="t" style="left:888.30px;top:120.57px;font-size:8.3px;color:#111;letter-spacing:-0.636px;">03:48:34</div>
<div class="t" style="left:927.60px;top:120.57px;font-size:8.3px;color:#111;letter-spacing:-0.407px;">2:08:59 AM</div>
<div class="t" style="left:977.80px;top:120.57px;font-size:8.3px;color:#111;letter-spacing:-0.384px;">0.4</div>
<div class="t" style="left:849.00px;top:133.07px;font-size:8.3px;color:#111;letter-spacing:-0.576px;">LM</div>
<div class="t" style="left:888.30px;top:133.07px;font-size:8.3px;color:#111;letter-spacing:-0.636px;">03:50:25</div>
<div class="t" style="left:927.60px;top:133.07px;font-size:8.3px;color:#111;letter-spacing:-0.407px;">2:10:49 AM</div>
<div class="t" style="left:977.80px;top:133.07px;font-size:8.3px;color:#111;letter-spacing:-0.384px;">3.0</div>
<div class="t" style="left:849.00px;top:145.57px;font-size:8.3px;color:#111;letter-spacing:-0.410px;">Short R-R</div>
<div class="t" style="left:888.30px;top:145.57px;font-size:8.3px;color:#111;letter-spacing:-0.636px;">03:51:04</div>
<div class="t" style="left:927.60px;top:145.57px;font-size:8.3px;color:#111;letter-spacing:-0.345px;">2:11:29 AM</div>
<div class="t" style="left:977.80px;top:145.57px;font-size:8.3px;color:#111;letter-spacing:-0.384px;">0.4</div>
<div class="t" style="left:849.00px;top:158.07px;font-size:8.3px;color:#111;letter-spacing:-0.410px;">Short R-R</div>
<div class="t" style="left:888.30px;top:158.07px;font-size:8.3px;color:#111;letter-spacing:-0.636px;">03:51:08</div>
<div class="t" style="left:927.60px;top:158.07px;font-size:8.3px;color:#111;letter-spacing:-0.345px;">2:11:33 AM</div>
<div class="t" style="left:977.80px;top:158.07px;font-size:8.3px;color:#111;letter-spacing:-0.384px;">0.7</div>
<div class="t" style="left:849.00px;top:170.57px;font-size:8.3px;color:#111;letter-spacing:-0.402px;">Arousal</div>
<div class="t" style="left:888.30px;top:170.57px;font-size:8.3px;color:#111;letter-spacing:-0.636px;">03:52:32</div>
<div class="t" style="left:927.60px;top:170.57px;font-size:8.3px;color:#111;letter-spacing:-0.407px;">2:12:56 AM</div>
<div class="t" style="left:977.80px;top:170.57px;font-size:8.3px;color:#111;letter-spacing:-0.384px;">3.0</div>
<div class="t" style="left:849.00px;top:183.07px;font-size:8.3px;color:#111;letter-spacing:-0.410px;">Short R-R</div>
<div class="t" style="left:888.30px;top:183.07px;font-size:8.3px;color:#111;letter-spacing:-0.636px;">03:53:05</div>
<div class="t" style="left:927.60px;top:183.07px;font-size:8.3px;color:#111;letter-spacing:-0.407px;">2:13:29 AM</div>
<div class="t" style="left:977.80px;top:183.07px;font-size:8.3px;color:#111;letter-spacing:-0.384px;">0.4</div>
<div class="t" style="left:849.00px;top:195.57px;font-size:8.3px;color:#111;letter-spacing:-0.386px;">Hypop...</div>
<div class="t" style="left:888.30px;top:195.57px;font-size:8.3px;color:#111;letter-spacing:-0.636px;">03:53:27</div>
<div class="t" style="left:927.60px;top:195.57px;font-size:8.3px;color:#111;letter-spacing:-0.407px;">2:13:52 AM</div>
<div class="t" style="left:977.80px;top:195.57px;font-size:8.3px;color:#111;letter-spacing:-0.388px;">11.0</div>
<div class="a" style="left:1006px;top:78px;width:10px;height:147px;background:#f0f0f0;"></div>
<div class="a" style="left:1006px;top:138px;width:10px;height:11px;background:#cdcdcd;"></div>
<svg style="left:1006px;top:78px" width="10" height="147"><path d="M2.500 7l2.500-2.500 2.500 2.500M2.500 139l2.500 2.500 2.500-2.500" stroke="#444" fill="none" stroke-width="1.1"/></svg>
<div class="a" style="left:845px;top:214.5px;width:160px;height:9px;background:#f0f0f0;"></div>
<div class="a" style="left:856px;top:214.5px;width:111px;height:9px;background:#cdcdcd;"></div>
<svg style="left:845px;top:214.500px" width="160" height="9"><path d="M6 2l-2.500 2.500 2.500 2.500M154 2l2.500 2.500-2.500 2.500" stroke="#444" fill="none" stroke-width="1.1"/></svg>
<div class="a" style="left:829px;top:228px;width:191px;height:152px;background:#f0f0f0;"></div>
<div class="t" style="left:829.00px;top:233.53px;font-size:8px;color:#4a4a4a;">Items :</div>
<div class="t" style="left:946.00px;top:233.53px;font-size:8px;color:#4a4a4a;letter-spacing:-0.203px;">Result :</div>
<div class="a" style="left:800px;top:244.5px;width:140.5px;height:133px;background:#fff;border:1px solid #828790"></div>
<div class="a" style="left:929px;top:245.5px;width:10.5px;height:131px;background:#f0f0f0;"></div>
<div class="a" style="left:929.5px;top:257.5px;width:9.5px;height:71px;background:#cdcdcd;"></div>
<svg style="left:929px;top:245.500px" width="11" height="131"><path d="M2.500 7l3-3 3 3M2.500 123.500l3 3 3-3" stroke="#444" fill="none" stroke-width="1.1"/></svg>
<div class="a" style="left:828px;top:288.3px;width:100.5px;height:8.6px;background:#0078d7;"></div>
<div class="t" style="left:829.50px;top:254.74px;font-size:8.1px;color:#111;letter-spacing:-0.486px;">hout stage</div>
<div class="t" style="left:830.50px;top:263.34px;font-size:8.1px;color:#111;letter-spacing:-0.494px;">Count Central</div>
<div class="t" style="left:830.50px;top:271.84px;font-size:8.1px;color:#111;letter-spacing:-0.531px;">Count Mixed</div>
<div class="t" style="left:830.50px;top:280.54px;font-size:8.1px;color:#111;letter-spacing:-0.490px;">Count Obstructive</div>
<div class="t" style="left:830.50px;top:297.64px;font-size:8.1px;color:#111;letter-spacing:-0.472px;">% of Total Events</div>
<div class="t" style="left:829.50px;top:306.14px;font-size:8.1px;color:#111;letter-spacing:-0.520px;">HI</div>
<div class="t" style="left:829.50px;top:314.84px;font-size:8.1px;color:#111;letter-spacing:-0.441px;">stic AHI</div>
<div class="t" style="left:829.50px;top:323.44px;font-size:8.1px;color:#111;letter-spacing:-0.533px;">nea Count</div>
<div class="t" style="left:829.50px;top:332.14px;font-size:8.1px;color:#111;letter-spacing:-0.694px;">On</div>
<div class="t" style="left:829.50px;top:340.64px;font-size:8.1px;color:#111;letter-spacing:-0.559px;">Out</div>
<div class="t" style="left:829.50px;top:349.14px;font-size:8.1px;color:#111;letter-spacing:-0.655px;">pO2</div>
<div class="t" style="left:829.50px;top:366.44px;font-size:8.1px;color:#111;letter-spacing:-0.475px;">l Pressure AHI</div>
<div class="a" style="left:829px;top:374px;width:100px;height:3.500px;overflow:hidden"><div class="t" style="left:1.00px;top:-0.53px;font-size:8.3px;color:#111;">dex</div></div>
<div class="a" style="left:945px;top:244.5px;width:74.5px;height:16px;background:#f0f0f0;border:1px solid #a0a0a0;border-right-color:#fff;border-bottom-color:#fff"></div>
<div class="t" style="left:947.30px;top:246.50px;font-size:12.5px;color:#000;letter-spacing:-0.142px;font-weight:bold;font-family:'Liberation Serif',serif;">0.8</div>
<div class="a" style="left:945.3px;top:369.2px;width:9px;height:9px;background:#fff;border:1px solid #333"></div>
<div class="t" style="left:956.50px;top:369.97px;font-size:8.3px;color:#111;letter-spacing:-0.596px;">Show Parameters</div>
<div class="a" style="left:664px;top:380px;width:357.5px;height:348px;background:#fff;"></div>
<div class="a" style="left:1021.3px;top:380px;width:2.7px;height:348px;background:#383838;"></div>
<div class="a" style="left:692px;top:437.7px;width:328px;height:58.10000000000002px;background:#f3f3f3;"></div>
<div class="a" style="left:692px;top:554.2px;width:328px;height:58.799999999999955px;background:#f3f3f3;"></div>
<div class="a" style="left:692px;top:670.5px;width:328px;height:57.5px;background:#f3f3f3;"></div>
<div class="a" style="left:664px;top:554.2px;width:28px;height:58.8px;background:#e4e4fa;"></div>
<div class="a" style="left:664px;top:670.5px;width:28px;height:57.5px;background:#e4e4fa;"></div>
<svg style="left:0;top:0" width="1024" height="791" viewBox="0 0 1024 791" fill="none"><path d="M690.9 385.7H1021M690.9 400.6H1021M690.9 416.3H1021M690.9 431.6H1021M690.9 442.7H1021M690.9 454.6H1021M690.9 466.4H1021M690.9 479.2H1021M690.9 491.4H1021M690.9 497.8H1021M690.9 511.2H1021M690.9 525.5H1021M690.9 538H1021M690.9 552.7H1021M690.9 558.4H1021M690.9 570.9H1021M690.9 583H1021M690.9 595.3H1021M690.9 607.5H1021" stroke="#444" stroke-width="1" stroke-dasharray="3 9.416"/><path d="M829 403.800H1021" stroke="#666" stroke-width="1.200" stroke-dasharray="1.500 1"/><path d="M692.500 380V728" stroke="#000" stroke-width="1"/><path d="M829.0 394.2L829.4 395.0L829.8 395.3L830.2 394.5L830.6 394.1L831.0 394.8L831.4 395.0L831.8 395.3L832.2 394.2L832.6 394.2L833.0 395.2L833.4 395.0L833.8 395.6L834.2 395.3L834.6 394.7L835.0 394.7L835.4 396.1L835.8 394.7L836.2 394.4L836.6 394.2L837.0 394.8L837.4 394.9L837.8 394.6L838.2 394.8L838.6 394.9L839.0 395.1L839.4 395.3L839.8 394.9L840.2 393.9L840.6 395.2L841.0 394.1L841.4 394.7L841.8 394.1L842.2 394.8L842.6 394.4L843.0 394.9L843.4 396.5L843.8 394.8L844.2 395.2L844.6 394.1L845.0 394.7L845.4 395.1L845.8 394.8L846.2 395.0L846.6 394.9L847.0 394.3L847.4 395.1L847.8 394.4L848.2 395.7L848.6 394.5L849.0 395.1L849.4 394.8L849.8 395.3L850.2 394.5L850.6 395.3L851.0 394.7L851.4 395.4L851.8 395.1L852.2 394.9L852.6 394.4L853.0 395.2L853.4 395.0L853.8 395.6L854.2 394.6L854.6 395.1L855.0 395.1L855.4 394.9L855.8 394.9L856.2 394.9L856.6 394.5L857.0 394.3L857.4 394.6L857.8 395.1L858.2 395.6L858.6 395.3L859.0 395.3L859.4 395.2L859.8 395.1L860.2 394.9L860.6 395.2L861.0 395.7L861.4 394.1L861.8 395.8L862.2 393.9L862.6 394.2L863.0 394.1L863.4 394.6L863.8 398.2L864.2 395.6L864.6 395.2L865.0 393.2L865.4 393.7L865.8 392.2L866.2 395.1L866.6 397.3L867.0 398.4L867.4 396.0L867.8 397.8L868.2 398.7L868.6 393.5L869.0 395.2L869.4 395.1L869.8 394.4L870.2 393.3L870.6 394.5L871.0 400.0L871.4 391.9L871.8 399.2L872.2 396.0L872.6 394.1L873.0 394.8L873.4 395.4L873.8 395.7L874.2 394.7L874.6 393.2L875.0 397.6L875.4 391.0L875.8 392.4L876.2 394.6L876.6 391.3L877.0 394.6L877.4 393.1L877.8 394.4L878.2 395.2L878.6 398.3L879.0 398.5L879.4 394.0L879.8 394.9L880.2 397.1L880.6 395.2L881.0 395.6L881.4 394.9L881.8 394.7L882.2 396.9L882.6 394.0L883.0 392.7L883.4 392.4L883.8 394.5L884.2 399.8L884.6 395.5L885.0 393.6L885.4 392.8L885.8 396.5L886.2 397.0L886.6 392.3L887.0 398.7L887.4 393.5L887.8 395.7L888.2 394.8L888.6 393.5L889.0 396.0L889.4 394.1L889.8 395.3L890.2 394.4L890.6 396.5L891.0 396.3L891.4 393.0L891.8 396.4L892.2 396.3L892.6 392.5L893.0 394.3L893.4 397.5L893.8 393.0L894.2 397.1L894.6 393.7L895.0 395.5L895.4 395.5L895.8 391.3L896.2 396.7L896.6 396.4L897.0 396.0L897.4 395.4L897.8 394.1L898.2 395.5L898.6 394.5L899.0 396.6L899.4 392.3L899.8 392.6L900.2 395.5L900.6 394.3L901.0 396.3L901.4 396.4L901.8 392.9L902.2 396.6L902.6 396.9L903.0 394.0L903.4 394.2L903.8 391.2L904.2 395.8L904.6 399.0L905.0 391.4L905.4 394.0L905.8 395.9L906.2 393.3L906.6 391.5L907.0 389.7L907.4 394.3L907.8 395.0L908.2 396.7L908.6 393.7L909.0 391.8L909.4 394.5L909.8 392.1L910.2 393.3L910.6 391.3L911.0 393.4L911.4 390.5L911.8 394.4L912.2 398.7L912.6 393.7L913.0 396.4L913.4 396.7L913.8 394.0L914.2 391.3L914.6 392.8L915.0 394.6L915.4 391.7L915.8 395.0L916.2 398.0L916.6 393.1L917.0 393.0L917.4 394.9L917.8 396.9L918.2 393.6L918.6 396.3L919.0 395.1L919.4 395.9L919.8 395.1L920.2 393.1L920.6 397.0L921.0 396.5L921.4 396.5L921.8 392.7L922.2 394.4L922.6 393.6L923.0 394.6L923.4 393.2L923.8 392.9L924.2 395.7L924.6 393.7L925.0 396.2L925.4 393.8L925.8 396.2L926.2 401.8L926.6 395.0L927.0 398.0L927.4 395.8L927.8 393.0L928.2 396.3L928.6 396.5L929.0 392.5L929.4 397.7L929.8 393.6L930.2 393.4L930.6 395.5L931.0 392.6L931.4 396.7L931.8 393.5L932.2 395.3L932.6 395.8L933.0 393.9L933.4 390.3L933.8 393.8L934.2 396.8L934.6 394.5L935.0 394.6L935.4 395.7L935.8 396.8L936.2 395.2L936.6 391.9L937.0 395.8L937.4 391.8L937.8 392.6L938.2 396.3L938.6 395.3L939.0 393.3L939.4 395.4L939.8 391.2L940.2 397.0L940.6 392.7L941.0 392.1L941.4 396.6L941.8 398.2L942.2 397.3L942.6 396.3L943.0 395.3L943.4 395.2L943.8 396.8L944.2 397.7L944.6 394.8L945.0 395.2L945.4 394.7L945.8 398.7L946.2 396.8L946.6 396.3L947.0 394.9L947.4 392.8L947.8 394.3L948.2 396.6L948.6 396.1L949.0 392.4L949.4 390.5L949.8 390.8L950.2 398.3L950.6 393.1L951.0 393.6L951.4 393.4L951.8 395.8L952.2 394.2L952.6 399.4L953.0 398.2L953.4 395.4L953.8 392.2L954.2 396.4L954.6 400.5L955.0 400.7L955.4 392.7L955.8 395.8L956.2 390.1L956.6 394.1L957.0 398.5L957.4 394.3L957.8 393.2L958.2 393.2L958.6 395.9L959.0 396.4L959.4 392.5L959.8 393.1L960.2 394.7L960.6 391.1L961.0 396.4L961.4 396.5L961.8 390.9L962.2 394.6L962.6 394.3L963.0 391.7L963.4 395.1L963.8 399.7L964.2 395.8L964.6 397.7L965.0 392.3L965.4 396.1L965.8 395.6L966.2 395.2L966.6 393.5L967.0 393.4L967.4 393.0L967.8 393.5L968.2 391.3L968.6 396.0L969.0 391.7L969.4 395.9L969.8 397.0L970.2 397.9L970.6 395.0L971.0 391.1L971.4 392.9L971.8 393.7L972.2 392.4L972.6 395.9L973.0 394.9L973.4 394.6L973.8 392.3L974.2 392.9L974.6 392.9L975.0 398.4L975.4 392.8L975.8 398.7L976.2 391.2L976.6 392.4L977.0 388.7L977.4 393.6L977.8 398.0L978.2 394.1L978.6 395.0L979.0 394.4L979.4 395.7L979.8 391.7L980.2 396.3L980.6 397.0L981.0 391.0L981.4 395.9L981.8 395.9L982.2 395.2L982.6 397.1L983.0 395.8L983.4 397.6L983.8 396.4L984.2 394.1L984.6 394.0L985.0 394.8L985.4 396.2L985.8 395.0L986.2 392.8L986.6 393.7L987.0 392.7L987.4 389.6L987.8 386.5L988.2 388.8L988.6 387.4L989.0 394.6L989.4 391.6L989.8 393.9L990.2 391.3L990.6 396.8L991.0 397.4L991.4 395.5L991.8 396.0L992.2 395.5L992.6 394.7L993.0 392.7L993.4 392.0L993.8 397.1L994.2 395.0L994.6 397.6L995.0 398.8L995.4 394.7L995.8 397.4L996.2 393.4L996.6 399.5L997.0 399.4L997.4 396.1L997.8 392.9L998.2 399.9L998.6 400.3L999.0 399.2L999.4 399.4L999.8 399.7L1000.2 401.5L1000.6 393.5L1001.0 400.1L1001.4 393.9L1001.8 393.4L1002.2 398.9L1002.6 399.7L1003.0 400.4L1003.4 396.9L1003.8 394.2L1004.2 397.0L1004.6 396.9L1005.0 397.4L1005.4 396.3L1005.8 398.9L1006.2 398.3L1006.6 393.6L1007.0 395.0L1007.4 393.1L1007.8 399.2L1008.2 397.6L1008.6 399.4L1009.0 397.9L1009.4 395.5L1009.8 396.0L1010.2 396.9L1010.6 398.6L1011.0 398.2L1011.4 398.4L1011.8 394.4L1012.2 395.4L1012.6 397.3L1013.0 399.4L1013.4 394.0L1013.8 398.6L1014.2 399.3L1014.6 400.2L1015.0 396.0L1015.4 397.7L1015.8 398.8L1016.2 396.7L1016.6 399.2L1017.0 396.3L1017.4 397.6L1017.8 396.1L1018.2 396.1L1018.6 396.3L1019.0 396.5L1019.4 398.5L1019.8 398.4" stroke="#000" stroke-width="0.9"/><path d="M829 466.400H830V478.500H851.400V454.600H862V441.700H871.600V466.400H874V478.500H875.500V454.600H877.400V441.700H880.600V466.400H882V441.700H883.500V466.400H884.500V441.700H885.400V478.500H888.900V466.400H889.600V441.700H890.400V466.400H891.200V441.700H892V466.400H895V441.700H896V466.400H897.900V454.600H907.400V441.700V454.600H913.200V478.500V454.600H916.400V441.700H918.400V466.400H925.600V441.700H980.600V466.400H981.500V478.500V454.600H987.800V441.700H1020V466.400" stroke="#000" stroke-width="1"/><path d="M851.400 454.600H862M875.800 454.600h1.800M898.400 454.600H912.200M913.400 454.600h3M982 454.600h5.500" stroke="#108a10" stroke-width="3"/><path d="M693.0 534.0L693.7 534.0L694.4 534.4L695.1 534.6L695.8 531.5L696.5 533.7L697.2 532.4L697.9 532.3L698.6 532.7L699.3 532.7L700.0 533.3L700.7 532.5L701.4 534.2L702.1 532.9L702.8 532.9L703.5 533.5L704.2 532.5L704.9 533.6L705.6 532.1L706.3 532.4L707.0 532.2L707.7 533.1L708.4 533.5L709.1 533.2L709.8 532.2L710.5 533.3L711.2 531.9L711.9 532.7L712.6 531.2L713.3 531.2L714.0 531.3L714.7 531.6L715.4 534.7L716.1 530.4L716.8 531.1L717.5 529.6L718.2 531.4L718.9 531.5L719.6 530.7L720.3 530.2L721.0 532.1L721.7 532.2L722.4 530.7L723.1 531.8L723.8 532.9L724.5 532.4L725.2 531.2L725.9 533.3L726.6 530.0L727.3 531.8L728.0 531.5L728.7 532.6L729.4 531.1L730.1 531.4L730.8 531.9L731.5 531.2L732.2 531.5L732.9 529.6L733.6 531.3L734.3 532.0L735.0 531.7L735.7 531.6L736.4 531.3L737.1 530.9L737.8 531.7L738.5 530.9L739.2 532.4L739.9 532.8L740.6 532.1L741.3 530.9L742.0 530.5L742.7 532.7L743.4 534.8L744.1 530.4L744.8 532.8L745.5 533.0L746.2 532.9L746.9 530.2L747.6 530.8L748.3 530.9L749.0 531.8L749.7 531.2L750.4 531.5L751.1 531.8L751.8 531.2L752.5 531.5L753.2 530.9L753.9 532.0L754.6 531.9L755.3 531.9L756.0 531.6L756.7 531.2L757.4 531.6L758.1 529.8L758.8 531.3L759.5 530.2L760.2 530.6L760.9 530.9L761.6 529.8L762.3 532.4L763.0 531.7L763.7 530.0L764.4 530.0L765.1 530.9L765.8 531.2L766.5 529.7L767.2 531.5L767.9 529.5L768.6 527.4L769.3 526.7L770.0 529.1L770.7 528.8L771.4 529.9L772.1 531.3L772.8 530.2L773.5 530.4L774.2 531.0L774.9 529.9L775.6 529.6L776.3 529.6L777.0 529.7L777.7 530.8L778.4 530.6L779.1 528.4L779.8 530.6L780.5 529.6L781.2 530.5L781.9 529.5L782.6 531.7L783.3 528.3L784.0 529.6L784.7 530.0L785.4 530.9L786.1 529.3L786.8 528.7L787.5 528.1L788.2 532.4L788.9 527.5L789.6 529.6L790.3 528.0L791.0 529.0L791.7 530.6L792.4 529.2L793.1 529.5L793.8 529.1L794.5 528.9L795.2 529.9L795.9 529.9L796.6 529.1L797.3 529.5L798.0 530.4L798.7 528.7L799.4 528.8L800.1 529.7L800.8 529.4L801.5 529.2L802.2 529.9L802.9 530.2L803.6 528.3L804.3 529.7L805.0 530.2L805.7 530.4L806.4 529.4L807.1 530.0L807.8 528.5L808.5 529.4L809.2 528.9L809.9 529.6L810.6 529.4L811.3 527.6L812.0 529.5L812.7 528.6L813.4 529.9L814.1 527.9L814.8 529.7L815.5 529.2L816.2 530.2L816.9 527.4L817.6 530.2L818.3 529.0L819.0 528.5L819.7 527.7L820.4 528.2L821.1 528.6L821.8 531.1L822.5 528.0L823.2 528.3L823.9 528.1L824.6 529.6L825.3 526.6L826.0 528.5L826.7 529.5L827.4 529.2L828.1 528.0L828.8 530.0L829.5 528.1L830.2 528.0L830.9 528.7L831.6 528.7L832.3 528.1L833.0 528.1L833.7 527.7L834.4 528.1L835.1 527.3L835.8 528.1L836.5 529.0L837.2 528.6L837.9 527.2L838.6 529.0L839.3 528.9L840.0 530.1L840.7 527.9L841.4 528.4L842.1 528.7L842.8 529.0L843.5 529.0L844.2 527.7L844.9 528.1L845.6 528.3L846.3 527.8L847.0 528.0L847.7 527.8L848.4 526.9L849.1 527.3L849.8 526.8L850.5 528.4L851.2 529.2L851.9 530.1L852.6 528.0L853.3 528.2L854.0 527.7L854.7 527.5L855.4 527.8L856.1 527.1L856.8 528.6L857.5 526.8L858.2 528.6L858.9 526.9L859.6 529.4L860.3 527.5L861.0 527.8L861.7 527.6L862.4 527.8L863.1 525.5L863.8 527.0L864.5 528.3L865.2 528.1L865.9 527.5L866.6 528.0L867.3 526.3L868.0 528.9L868.7 527.2L869.4 526.2L870.1 527.2L870.8 527.5L871.5 527.0L872.2 526.2L872.9 527.9L873.6 526.7L874.3 527.2L875.0 527.1L875.7 526.0L876.4 527.3L877.1 528.5L877.8 528.1L878.5 526.4L879.2 527.4L879.9 528.0L880.6 527.7L881.3 527.3L882.0 525.6L882.7 528.0L883.4 526.8L884.1 528.5L884.8 526.1L885.5 526.4L886.2 526.0L886.9 527.4L887.6 527.5L888.3 527.2L889.0 527.8L889.7 527.8L890.4 526.6L891.1 526.5L891.8 527.2L892.5 526.2L893.2 528.3L893.9 527.7L894.6 526.8L895.3 525.8L896.0 527.3L896.7 525.8L897.4 527.5L898.1 526.3L898.8 526.8L899.5 526.5L900.2 526.9L900.9 527.9L901.6 526.1L902.3 527.4L903.0 526.6L903.7 526.8L904.4 527.0L905.1 528.3L905.8 527.0L906.5 526.1L907.2 527.9L907.9 527.3L908.6 527.4L909.3 526.2L910.0 528.4L910.7 528.5L911.4 524.8L912.1 527.0L912.8 528.3L913.5 527.4L914.2 527.0L914.9 527.3L915.6 526.4L916.3 527.0L917.0 529.6L917.7 526.5L918.4 526.8L919.1 526.1L919.8 528.6L920.5 527.2L921.2 527.3L921.9 527.8L922.6 528.0L923.3 526.7L924.0 528.0L924.7 527.7L925.4 526.6L926.1 529.4L926.8 528.0L927.5 527.1L928.2 528.0L928.9 528.4L929.6 528.9L930.3 527.4L931.0 525.6L931.7 526.6L932.4 528.9L933.1 526.0L933.8 528.2L934.5 529.0L935.2 528.0L935.9 527.2L936.6 527.2L937.3 527.6L938.0 526.8L938.7 527.7L939.4 527.8L940.1 525.8L940.8 526.5L941.5 527.5L942.2 526.1L942.9 526.6L943.6 526.4L944.3 527.6L945.0 527.0L945.7 527.0L946.4 526.3L947.1 527.5L947.8 527.2L948.5 527.5L949.2 527.0L949.9 529.6L950.6 526.6L951.3 526.6L952.0 527.3L952.7 526.3L953.4 526.2L954.1 526.9L954.8 527.5L955.5 527.8L956.2 528.8L956.9 527.9L957.6 527.5L958.3 526.9L959.0 527.5L959.7 529.1L960.4 529.7L961.1 529.6L961.8 527.9L962.5 526.6L963.2 527.9L963.9 526.7L964.6 527.3L965.3 529.2L966.0 527.0L966.7 526.7L967.4 526.6L968.1 526.7L968.8 527.8L969.5 528.4L970.2 527.8L970.9 527.8L971.6 526.5L972.3 527.9L973.0 527.0L973.7 526.4L974.4 526.7L975.1 527.2L975.8 526.6L976.5 527.7L977.2 528.6L977.9 526.2L978.6 526.4L979.3 527.2L980.0 528.1L980.7 528.2L981.4 527.1L982.1 527.7L982.8 526.6L983.5 528.3L984.2 528.5L984.9 528.7L985.6 527.4L986.3 526.4L987.0 528.9L987.7 527.5L988.4 527.3L989.1 521.6L989.8 524.5L990.5 523.6L991.2 522.1L991.9 522.6L992.6 524.0L993.3 524.0L994.0 521.8L994.7 524.0L995.4 522.8L996.1 539.0L996.8 528.2L997.5 528.1L998.2 525.3L998.9 527.5L999.6 527.1L1000.3 528.8L1001.0 527.8L1001.7 529.4L1002.4 527.9L1003.1 528.9L1003.8 526.6L1004.5 528.5L1005.2 525.9L1005.9 527.2L1006.6 528.8L1007.3 526.5L1008.0 526.7L1008.7 527.5L1009.4 527.9L1010.1 526.8L1010.8 529.1L1011.5 526.4L1012.2 528.8L1012.9 528.8L1013.6 528.0L1014.3 527.0L1015.0 526.2L1015.7 528.6L1016.4 527.0L1017.1 528.8L1017.8 527.7L1018.5 527.2L1019.2 528.2L1019.9 527.6" stroke="#0a8a0a" stroke-width="1.1"/><path d="M697.500 583H757.500V570.5h1.500V583H774V570.5H864.400V583H938.600V570.5h1.200V583h1.200V570.5h1.200V583h1.200V570.5V583H994.500V570.5H1020" stroke="#000" stroke-width="1.4"/><path d="M697 633H707V649H697zM709 633H710V649H709zM717 633H720V649H717zM723 633H724.5V649H723zM729 633H730.5V649H729zM733 633H736V649H733zM740 633H741V649H740zM744 633H746V649H744zM748 633H749V649H748zM755 633H758V649H755zM760 633H772V649H760zM774 633H781V649H774zM783 633H784V649H783zM786 633H787V649H786zM789 633H790V649H789zM792 633H793V649H792zM796 633H797V649H796zM799 633H800V649H799zM802 633H803V649H802zM813 633H815V649H813zM816 633H819V649H816zM820 633H821.5V649H820zM823 633H825V649H823zM832 633H833V649H832zM840 633H841V649H840zM846 633H847V649H846zM851 633H852V649H851zM855 633H856V649H855zM858 633H859.5V649H858zM864 633H866V649H864zM869 633H870V649H869zM872 633H877V649H872zM878 633H881V649H878zM883 633H884.5V649H883zM890 633H893V649H890zM895 633H896V649H895zM898 633H900V649H898zM902 633H905V649H902zM908 633H909V649H908zM912 633H913V649H912zM916 633H917V649H916zM925 633H927V649H925zM929 633H932V649H929zM936 633H938V649H936zM941 633H947V649H941zM948 633H952V649H948zM957 633H958V649H957zM960 633H963V649H960zM965 633H966V649H965zM969 633H973V649H969zM974 633H975V649H974zM981 633H982V649H981zM984 633H985V649H984zM988 633H989V649H988zM991 633H993V649H991zM995 633H999V649H995zM1000 633H1002V649H1000zM1004 633H1006V649H1004zM1008 633H1009V649H1008zM1011 633H1012V649H1011z" fill="#0a0aff" stroke="none"/><path d="M692.500 675.5H700M734.1 675.5h7.500M775.1 675.5h7.500M816.2 675.5h7.500M898.3 675.5h7.500M939.4 675.5h7.500M980.4 675.5h7.500M857 675.5h8M692.500 685H700M734.1 685h7.500M775.1 685h7.500M816.2 685h7.500M898.3 685h7.500M939.4 685h7.500M980.4 685h7.500M857 685h8M692.500 694H700M734.1 694h7.500M775.1 694h7.500M816.2 694h7.500M898.3 694h7.500M939.4 694h7.500M980.4 694h7.500M857 694h8M692.500 703.5H700M734.1 703.5h7.500M775.1 703.5h7.500M816.2 703.5h7.500M898.3 703.5h7.500M939.4 703.5h7.500M980.4 703.5h7.500M857 703.5h8M692.500 712.5H700M734.1 712.5h7.500M775.1 712.5h7.500M816.2 712.5h7.500M898.3 712.5h7.500M939.4 712.5h7.500M980.4 712.5h7.500M857 712.5h8M692.500 722H700M734.1 722h7.500M775.1 722h7.500M816.2 722h7.500M898.3 722h7.500M939.4 722h7.500M980.4 722h7.500M857 722h8" stroke="#000" stroke-width="1.5"/><path d="M692.500 641H699M734.1 641h8M775.1 641h8M816.2 641h8M898.3 641h8M939.4 641h8M980.4 641h8M857 641h8" stroke="#000" stroke-width="1.2"/><path d="M694 671H697.5V683H694zM722.2 671H723.2V683H722.2zM775 671H776.2V683H775zM862.3 671H863.3V683H862.3zM874.6 671H875.6V683H874.6zM881.5 671H891V683H881.5zM892 671H894V683H892zM895 671H897.5V683H895zM898.5 671H901V683H898.5zM902 671H904V683H902zM905 671H907V683H905zM917 671H921V683H917zM922 671H925V683H922zM926 671H928V683H926zM931.5 671H932.5V683H931.5zM977 671H978.2V683H977z" fill="#50f050" stroke="none"/><path d="M694 689.500v9M702 689.500v9M729 689.500v9" stroke="#ff5050" stroke-width="1.3"/><path d="M890 698.500v9M904 698.500v9" stroke="#3060e0" stroke-width="1.3"/><path d="M939.700 708v9" stroke="#a020c0" stroke-width="1.3"/><path d="M861 380V728" stroke="#000" stroke-width="1.4"/></svg>
<div class="t" style="left:712.00px;top:636.88px;font-size:9px;color:#8a8ac8;letter-spacing:-0.111px;font-weight:bold;opacity:.55;">LM Events</div>
<div class="t" style="left:682.00px;top:535.22px;font-size:6px;color:#111;letter-spacing:-0.586px;font-weight:bold;">60</div>
<div class="t" style="left:682.00px;top:549.12px;font-size:6px;color:#111;letter-spacing:-0.586px;font-weight:bold;">30</div>
<div class="t" style="left:674.70px;top:554.88px;font-size:6.4px;color:#222;letter-spacing:-0.432px;font-weight:bold;">Left</div>
<div class="t" style="left:672.70px;top:567.58px;font-size:6.4px;color:#222;letter-spacing:-0.470px;font-weight:bold;">Right</div>
<div class="t" style="left:671.45px;top:580.08px;font-size:6.4px;color:#222;letter-spacing:-0.806px;font-weight:bold;">Supine</div>
<div class="t" style="left:672.20px;top:592.38px;font-size:6.4px;color:#222;letter-spacing:-0.627px;font-weight:bold;">Prone</div>
<div class="t" style="left:670.70px;top:604.58px;font-size:6.4px;color:#222;letter-spacing:-0.678px;font-weight:bold;">Upright</div>
<div class="t" style="left:666.00px;top:672.84px;font-size:6.1px;color:#222;letter-spacing:-0.662px;">Hypopnea</div>
<div class="t" style="left:669.00px;top:682.34px;font-size:6.1px;color:#222;letter-spacing:-0.603px;">C Hypop</div>
<div class="t" style="left:669.00px;top:691.34px;font-size:6.1px;color:#222;letter-spacing:-0.604px;">O Apnea</div>
<div class="t" style="left:669.00px;top:700.84px;font-size:6.1px;color:#222;letter-spacing:-0.556px;">C Apnea</div>
<div class="t" style="left:668.00px;top:709.84px;font-size:6.1px;color:#222;letter-spacing:-0.509px;">M Apnea</div>
<div class="t" style="left:673.00px;top:719.34px;font-size:6.1px;color:#222;letter-spacing:-0.359px;">RERA</div>
<div class="a" style="left:3px;top:728px;width:754px;height:26px;background:repeating-linear-gradient(#fdfdfd 0 1.500px,#bdbdbd 1.500px 3px);"></div>
<div class="a" style="left:3px;top:728px;width:13px;height:26px;background:linear-gradient(90deg,#7c8cb0,#9cb0d0 40%,#d8dcf8 75%,#e8e8fa);border-radius:5px 0 0 5px"></div>
<div class="a" style="left:2px;top:753.9px;width:755px;height:3.5px;background:linear-gradient(#6a7274,#343c40 40%,#2c3438);"></div>
<div class="a" style="left:1.3px;top:757.3px;width:1022.7px;height:2.1px;background:#c9c9cb;border-radius:0 0 0 2px"></div>
<svg style="left:0;top:0" width="1024" height="791" viewBox="0 0 1024 791"><rect x="23" y="729.500" width="228" height="4.500" fill="#8b0000"/><rect x="251" y="729.500" width="48" height="4.500" fill="#8484f8"/><rect x="300" y="729.500" width="17" height="4.500" fill="#f4f400"/><rect x="317" y="729.500" width="3" height="4.500" fill="#8484f8"/><rect x="320" y="729.500" width="47" height="4.500" fill="#f4f400"/><rect x="367" y="729.500" width="23" height="4.500" fill="#ff00ff"/><rect x="403" y="729.500" width="9" height="4.500" fill="#8b0000"/><rect x="414" y="729.500" width="7" height="4.500" fill="#f4f400"/><rect x="421" y="729.500" width="3" height="4.500" fill="#8484f8"/><rect x="424" y="729.500" width="10" height="4.500" fill="#8b0000"/><rect x="434" y="729.500" width="2" height="4.500" fill="#f4f400"/><rect x="436" y="729.500" width="3" height="4.500" fill="#8b0000"/><rect x="439" y="729.500" width="2" height="4.500" fill="#8484f8"/><rect x="441" y="729.500" width="3" height="4.500" fill="#8b0000"/><rect x="444" y="729.500" width="2" height="4.500" fill="#f4f400"/><rect x="446" y="729.500" width="3" height="4.500" fill="#8b0000"/><rect x="449" y="729.500" width="2" height="4.500" fill="#f4f400"/><rect x="451" y="729.500" width="4" height="4.500" fill="#8b0000"/><rect x="455" y="729.500" width="2" height="4.500" fill="#8484f8"/><rect x="457" y="729.500" width="5" height="4.500" fill="#8b0000"/><rect x="462" y="729.500" width="8" height="4.500" fill="#8484f8"/><rect x="472" y="729.500" width="19" height="4.500" fill="#ff00ff"/><rect x="493" y="729.500" width="10" height="4.500" fill="#ff00ff"/><rect x="503" y="729.500" width="2" height="4.500" fill="#f4f400"/><rect x="505" y="729.500" width="7" height="4.500" fill="#ff00ff"/><rect x="512" y="729.500" width="6" height="4.500" fill="#8b0000"/><rect x="518" y="729.500" width="14" height="4.500" fill="#8484f8"/><rect x="532" y="729.500" width="121" height="4.500" fill="#8b0000"/><rect x="654" y="729.500" width="2" height="4.500" fill="#f4f400"/><rect x="656" y="729.500" width="2" height="4.500" fill="#8484f8"/><rect x="659" y="729.500" width="12" height="4.500" fill="#ff00ff"/><rect x="671" y="729.500" width="74" height="4.500" fill="#8b0000"/><rect x="745" y="729.500" width="6" height="4.500" fill="#8484f8"/><rect x="390" y="729.300" width="13.500" height="25" fill="#6f9cec"/><rect x="390" y="729.300" width="13.500" height="4.400" fill="#5f8cdc"/><path d="M17.0 734.5h1.800v2h-1.800zM35.0 734.5h1.800v2h-1.800zM96.0 734.5h1.800v2h-1.800zM20.0 743h1.800v2h-1.800zM24.0 743h1.800v2h-1.800zM83.0 743h1.800v2h-1.800zM201.0 743h1.800v2h-1.800zM24.0 748h1.800v2h-1.800zM422.0 743h1.800v2h-1.800zM423.0 746h1.800v2h-1.800zM421.0 749h1.800v2h-1.800zM479.7 743h1.800v2h-1.800zM491.3 744h1.800v2h-1.800zM439.9 741h1.800v2h-1.800zM490.0 743h1.800v2h-1.800zM481.5 743h1.800v2h-1.800zM445.6 741h1.800v2h-1.800zM496.2 741h1.800v2h-1.800zM474.4 744h1.800v2h-1.800zM454.7 743h1.800v2h-1.800zM465.3 743h1.800v2h-1.800zM499.4 741h1.800v2h-1.800zM448.7 743h1.800v2h-1.800zM447.3 744h1.800v2h-1.800zM467.8 743h1.800v2h-1.800zM438.1 743h1.800v2h-1.800zM452.0 743h1.800v2h-1.800zM502.3 743h1.800v2h-1.800zM496.5 743h1.800v2h-1.800zM459.0 743h1.800v2h-1.800zM474.1 743h1.800v2h-1.800zM450.2 743h1.800v2h-1.800zM502.8 741h1.800v2h-1.800zM458.0 743h1.800v2h-1.800zM465.8 743h1.800v2h-1.800zM455.7 743h1.800v2h-1.800zM458.2 744h1.800v2h-1.800zM477.3 744h1.800v2h-1.800zM483.4 743h1.800v2h-1.800zM442.4 743h1.800v2h-1.800zM492.8 741h1.800v2h-1.800zM484.7 743h1.800v2h-1.800zM470.2 743h1.800v2h-1.800zM441.8 743h1.800v2h-1.800zM501.6 743h1.800v2h-1.800zM494.6 743h1.800v2h-1.800zM474.8 741h1.800v2h-1.800zM462.5 744h1.800v2h-1.800zM494.4 741h1.800v2h-1.800zM513.3 743h1.800v2h-1.800zM517.1 743h1.800v2h-1.800zM538.7 743h1.800v2h-1.800zM517.5 743h1.800v2h-1.800zM533.2 743h1.800v2h-1.800zM538.0 743h1.800v2h-1.800zM538.4 743h1.800v2h-1.800zM521.6 743h1.800v2h-1.800zM521.9 743h1.800v2h-1.800zM526.7 743h1.800v2h-1.800zM566.0 737h1.800v2h-1.800zM650.0 743h1.800v2h-1.800zM664.0 746h1.800v2h-1.800zM430.0 733.5h1.800v2h-1.800zM346.0 734h1.800v2h-1.800zM655.0 734h1.800v2h-1.800z" fill="#f01010"/></svg>
<div class="a" style="left:757px;top:728.2px;width:264px;height:26.3px;background:linear-gradient(#b4c4dc 0,#9cb0cc 2px,#8ca0bc 50%,#7a8eac 85%,#5c7090);"></div>
<div class="a" style="left:759px;top:729.3px;width:62.8px;height:23.7px;background:linear-gradient(#94a6c2,#8698b6);border-radius:4px;border:1px solid #b4c4dc;box-shadow:inset 0 0 2px #4a5c7c"></div>
<div class="a" style="left:762.6px;top:730.9000000000001px;width:19.600px;height:19.600px;border-radius:10px;background:linear-gradient(#7486a6,#b4c4dc)"></div>
<div class="a" style="left:764.1px;top:732.4000000000001px;width:16.600px;height:16.600px;border-radius:9px;background:radial-gradient(circle at 45% 40%,#d8bc5c,#c4a444 60%,#8a7428);border:1px solid #5e5224"></div>
<div class="a" style="left:784.2px;top:730.9000000000001px;width:19.600px;height:19.600px;border-radius:10px;background:linear-gradient(#7486a6,#b4c4dc)"></div>
<div class="a" style="left:785.7px;top:732.4000000000001px;width:16.600px;height:16.600px;border-radius:9px;background:radial-gradient(circle at 45% 40%,#d8bc5c,#c4a444 60%,#8a7428);border:1px solid #5e5224"></div>
<svg style="left:764px;top:732.400px" width="40" height="17"><path d="M4.500 8.300l6.500-3.800v7.600zM33.500 8.300l-6.500-3.800v7.600z" fill="#181410"/></svg>
<div class="a" style="left:807.9px;top:732px;width:8px;height:17px;background:linear-gradient(90deg,#a8b4cc,#dce4f4 50%,#a8b4cc);border-radius:4px;border:1px solid #56627e"></div>
<div class="a" style="left:810px;top:735px;width:3.6px;height:11px;background:#b01828;border-radius:1.500px"></div>
<div class="a" style="left:822.5px;top:728.5px;width:1.2px;height:26px;background:#586a8c;"></div>
<div class="a" style="left:826.5px;top:729px;width:14px;height:7px;background:#101c30;border-radius:3.500px"></div>
<div class="t" style="left:831.80px;top:729.27px;font-size:7px;color:#a8cc30;font-weight:bold;">1</div>
<div class="a" style="left:826.9px;top:737.8px;width:13.5px;height:6.9px;background:linear-gradient(#d4bc50,#bca43c);border:1px solid #84742c"></div>
<div class="a" style="left:826.9px;top:746.2px;width:13.5px;height:6.8px;background:linear-gradient(#d4bc50,#bca43c);border:1px solid #84742c"></div>
<svg style="left:826.900px;top:737.800px" width="14" height="16"><path d="M3.500 5l3.300-3 3.300 3zM3.500 10.300l3.300 3 3.300-3z" fill="#48546a"/></svg>
<div class="a" style="left:847.8px;top:728.6px;width:12.8px;height:25.4px;background:#283040;"></div>
<div class="a" style="left:849px;top:730.5px;width:4px;height:10px;background:#1c2434;"></div>
<div class="a" style="left:854.5px;top:730.5px;width:5px;height:10px;background:#7486a2;"></div>
<div class="a" style="left:849px;top:742.5px;width:4px;height:10px;background:#1c2434;"></div>
<div class="a" style="left:854.5px;top:742.5px;width:5px;height:10px;background:#7486a2;"></div>
<div class="a" style="left:850px;top:750.5px;width:2.5px;height:2.5px;background:#6cd0a8;border-radius:1.200px"></div>
<div class="a" style="left:860.2px;top:728px;width:1.2px;height:26px;background:#0a0c14;"></div>
<div class="a" style="left:863.5px;top:732.3px;width:20.5px;height:16.7px;background:linear-gradient(#94aad0,#7c94c0);border-radius:3px;border:1px solid #6880ac"></div>
<div class="a" style="left:866.5px;top:735px;width:14.5px;height:11px;background:#bcc8ea;border-radius:2px"></div>
<div class="a" style="left:757px;top:754.2px;width:264px;height:3.1px;background:#22345a;"></div>
<div class="a" style="left:777px;top:754.5px;width:31px;height:2.5px;background:#0e1a38;"></div>
<div class="a" style="left:886px;top:729px;width:5px;height:25px;background:linear-gradient(90deg,#6c80a4,#b4c4dc 50%,#6c80a4);"></div>
<div class="a" style="left:894.7px;top:729px;width:123.2px;height:24.8px;background:linear-gradient(#e4e4fc,#d4d6f4);border-radius:9px;box-shadow:0 0 2px #334,inset 0 0 2px #fff"></div>
<div class="t" style="left:914.70px;top:732.17px;font-size:7.6px;color:#1c2040;letter-spacing:-0.271px;">Page# 462  RT: 2:10:55 AM</div>
<div class="t" style="left:930.00px;top:740.47px;font-size:7.6px;color:#1c2040;letter-spacing:-0.287px;">Page# 462 of 905</div>
<div class="a" style="left:0px;top:759.4px;width:1024px;height:31.6px;background:linear-gradient(#0e2044 0,#0c1a38 4.500px,#04060c 6.500px,#020308);"></div>
<svg style="left:0;top:758px" width="1024" height="33" viewBox="0 0 1024 33" fill="none"><path d="M10 14.500l4.800-.7v4.800H10zM15.600 13.700l5.900-.9v5.800h-5.900zM10 19.400h4.800v4.800l-4.800-.7zM15.600 19.400h5.900v5.800l-5.900-.9z" fill="#fff"/><circle cx="47.400" cy="20.500" r="4.700" stroke="#fff" stroke-width="1.500"/><path d="M75.500 15.500h7v8.500h-7zM73 17.500v4.500M85 17.500v4.500" stroke="#fff" stroke-width="1.100"/><path d="M107.300 20.500c.2-5 3.500-7.700 6.800-7.700 3.800 0 6 2.800 5.800 6.800h-8.700c.2 2.800 2.300 3.800 4.300 3.800 1.600 0 2.900-.4 4-1.100v2.700c-1.300.8-3 1.200-4.800 1.200-4.300 0-6.900-2.700-6.700-6.400.1-2.400 1.500-4.500 3.500-5.500-1 1-1.500 2.200-1.600 3.300h5.800c0-1.900-1-3-2.700-3-2.400 0-4.800 2-5.700 5.900z" fill="#1f8fe8"/><path d="M899.500 21l3.500-3.500 3.500 3.500" stroke="#fff" stroke-width="1.100"/><path d="M914 17.500h10v5h-10zM916 16h3v1.500M924 19h1.500v2H924" stroke="#ddd" stroke-width="1" fill="#bbb"/><path d="M931.500 15.500h8v6h-8zM934 24h5M936.500 21.500v2.500M930.500 18v5h3" stroke="#eee" stroke-width="1"/><path d="M946 18.500h2l2.500-2.500v7.500L948 21h-2z" fill="#eee"/><path d="M952 17.500c1 1 1 3.500 0 4.500M953.800 16c1.800 2 1.800 5.500 0 7.500" stroke="#eee" stroke-width=".9"/><path d="M1006.500 15.500h11v8h-5l-2.500 2.500v-2.500h-3.500z" stroke="#fff" stroke-width="1.100"/></svg>
<div class="t" style="left:966.80px;top:768.00px;font-size:7.8px;color:#fff;letter-spacing:-0.306px;">3:54 PM</div>
<div class="t" style="left:963.20px;top:779.10px;font-size:7.8px;color:#fff;letter-spacing:0.068px;">5/22/2017</div>
<div class="a" style="left:339.5px;top:104px;width:489.5px;height:424.5px;background:#6f6f6f;box-shadow:0 0 3px rgba(0,0,0,.5)"></div>
<div class="a" style="left:339.5px;top:104px;width:489.5px;height:43.5px;background:#404040;"></div>
<svg style="left:340px;top:104px" width="489" height="24" viewBox="0 0 489 24" fill="none" stroke="#e8e8e8" stroke-width="0.9"><path d="M9.500 7.500h9v9h-9zM11.500 7.500v3h5v-3M11.500 16.500v-3.500h5v3.500" /><path d="M34 9l-3 3 3 3M31 12h5.500a2.500 2.500 0 0 1 0 6h-1" stroke="#c8c8c8"/><path d="M45.300 12h1.800" stroke="#aaa"/><path d="M57.500 9.500a3.600 3.600 0 1 0 3 1.500M57 7.500l1.500 2-2 1" stroke="#aaa"/><path d="M76 10h4M76.500 12.500h3l-1.500 1.500z" stroke="#ddd" stroke-width="0.9"/><path d="M378.500 7.500h9v7h-9zM378.500 9.500h9M383 13.500v-2.500M381.500 12l1.500-1.500 1.500 1.500" stroke-width="1"/><path d="M409 11.500h8"/><path d="M440 7.500h7.500v7.500h-7.500z"/><path d="M470.500 7.500l7 7M477.500 7.500l-7 7"/></svg>
<div class="t" style="left:436.80px;top:111.97px;font-size:8.3px;color:#fff;letter-spacing:-0.231px;">Test, ASV , 11-28-2016 10-17-23 [Compatibility Mode]  -  Word</div>
<div class="t" style="left:670.00px;top:111.97px;font-size:8.3px;color:#fff;letter-spacing:-0.152px;">Sign in</div>
<div class="a" style="left:380px;top:128px;width:39.5px;height:20px;background:#b5b5b5;"></div>
<div class="t" style="left:353.00px;top:134.03px;font-size:8.0px;color:#fff;letter-spacing:-0.223px;">File</div>
<div class="t" style="left:388.80px;top:134.03px;font-size:8.0px;color:#222;letter-spacing:0.090px;">Home</div>
<div class="t" style="left:428.60px;top:134.03px;font-size:8.0px;color:#fff;letter-spacing:-0.101px;">Insert</div>
<div class="t" style="left:465.50px;top:134.03px;font-size:8.0px;color:#fff;letter-spacing:-0.067px;">Design</div>
<div class="t" style="left:509.00px;top:134.03px;font-size:8.0px;color:#fff;">Layout</div>
<div class="t" style="left:550.60px;top:134.03px;font-size:8.0px;color:#fff;letter-spacing:-0.251px;">References</div>
<div class="t" style="left:606.30px;top:134.03px;font-size:8.0px;color:#fff;letter-spacing:0.082px;">Mailings</div>
<div class="t" style="left:653.80px;top:134.03px;font-size:8.0px;color:#fff;letter-spacing:-0.288px;">Review</div>
<div class="t" style="left:695.80px;top:134.03px;font-size:8.0px;color:#fff;letter-spacing:-0.124px;">View</div>
<div class="t" style="left:740.00px;top:134.03px;font-size:8.0px;color:#9a9a9a;letter-spacing:0.023px;">Tell me</div>
<svg style="left:726px;top:131px" width="10" height="13" fill="none" stroke="#ddd" stroke-width="1"><path d="M3.500 9.500h3M3.500 8c0-1.500-1.500-2-1.500-4a3 3 0 0 1 6 0c0 2-1.500 2.500-1.500 4z"/></svg>
<div class="a" style="left:776.8px;top:128px;width:40.7px;height:19px;background:#2b2b2b;"></div>
<svg style="left:780px;top:131px" width="12" height="13" fill="none" stroke="#fff" stroke-width="1.1"><circle cx="5.500" cy="4.500" r="2.800"/><path d="M1 12c0-3 2-4.500 4.500-4.500M7.500 10h4M9.500 8v4"/></svg>
<div class="t" style="left:793.80px;top:134.03px;font-size:8.0px;color:#fff;letter-spacing:-0.430px;">Share</div>
<div class="a" style="left:339.5px;top:147.5px;width:489.5px;height:61px;background:#b5b5b5;"></div>
<div class="a" style="left:388px;top:151px;width:1px;height:54px;background:#9c9c9c;"></div>
<div class="a" style="left:516.8px;top:151px;width:1px;height:54px;background:#9c9c9c;"></div>
<div class="a" style="left:590px;top:152px;width:1px;height:40px;background:#9c9c9c;"></div>
<div class="a" style="left:625.8px;top:151px;width:1px;height:54px;background:#9c9c9c;"></div>
<div class="a" style="left:659.5px;top:151px;width:1px;height:54px;background:#9c9c9c;"></div>
<div class="a" style="left:688.8px;top:151px;width:1px;height:54px;background:#9c9c9c;"></div>
<svg style="left:340px;top:148px" width="489" height="61" viewBox="0 0 489 61" fill="none"><path d="M8.500 7.500h15.500v15.500H8.500z" fill="#e2c572" stroke="#b89c50" stroke-width=".8"/><path d="M12.500 5.500h7.500v3h-7.500zM15 4.500h2.500v1.500H15z" fill="#555" stroke="#555" stroke-width=".5"/><path d="M18.500 13h5l3 3v8h-8z" fill="#fff" stroke="#777" stroke-width=".8"/><path d="M14.500 41.500l2 2 2-2z" fill="#555"/><path d="M34.500 4l4.500 7M41.500 4l-4.500 7" stroke="#8a8a8a" stroke-width="1"/><circle cx="35.500" cy="12" r="1.600" stroke="#8a8a8a"/><circle cx="40.500" cy="12" r="1.600" stroke="#8a8a8a"/><path d="M34.500 20.500h5v7h-5zM37.500 23h5v7h-5z" fill="#f4f4f4" stroke="#666" stroke-width=".8"/><path d="M35 41l4-4 3 3-4 4z" fill="#d8b048" stroke="#7a6020" stroke-width=".6"/><path d="M40 36l3-2 2 2-2 3z" fill="#444"/><path d="M52.500 3.500h93v13h-93zM147.500 3.500h27v13h-27z" fill="#cacaca" stroke="#999" stroke-width="1"/><path d="M138 9l2.500 2.500 2.500-2.500zM167.500 9l2.500 2.500 2.500-2.500z" fill="#555"/><g fill="#333"><path d="M97 23.500l2 2 2-2zM111.700 39l2 2 2-2zM89.500 39l2 2 2-2zM66 39l2 2 2-2zM133 39l2 2 2-2z" transform="scale(1)" opacity=".8"/></g><path d="M84 29h7" stroke="#333" stroke-width=".9"/><path d="M157 19l6 6-3 3-6-6z" fill="#e85a6a"/><path d="M155 19l4 4" stroke="#8040a0" stroke-width="1.200"/><path d="M75 43.300h11" stroke="#f8ec00" stroke-width="2.600"/><path d="M97 43.300h11" stroke="#f01010" stroke-width="2.600"/><path d="M84.800 35l-5 6.500" stroke="#333" stroke-width="1.300"/><path d="M142.500 34v13" stroke="#9c9c9c"/><g stroke="#3a78c8" stroke-width="1.600"><path d="M181 5.500h2M181 9.500h2M181 13.500h2"/></g><g stroke="#555" stroke-width="1"><path d="M185 5.500h8M185 9.500h8M185 13.500h8M208 5.500h8M208 9.500h8M208 13.500h8M232 5.500h6M234 9.500h6M236 13.500h5"/></g><g stroke="#3a78c8" stroke-width="1.200"><path d="M204 4v3M204 8v3M204 12v3M228.500 4v2M230.500 8v2M232.500 12v2"/></g><path d="M196 8.500l2 2 2-2zM219 8.500l2 2 2-2zM243 8.500l2 2 2-2z" fill="#444"/><g stroke="#555" stroke-width="1"><path d="M256 4.500h11M261 7.500h6M261 10.500h6M256 13.500h11M271 4.500h11M276 7.500h6M276 10.500h6M271 13.500h11"/></g><path d="M259.500 7l-3 2 3 2zM271 7l3 2-3 2z" fill="#3a78c8"/><path d="M181.500 17.500h14v14h-14z" fill="#9a9a9a"/><g stroke="#444" stroke-width="1"><path d="M184 20.500h10M184 23h7M184 25.500h10M184 28h7M198.500 20.500h10M200 23h7M198.500 25.500h10M200 28h7M213 20.500h10M216 23h7M213 25.500h10M216 28h7M227 20.500h10M227 23h10M227 25.500h10M227 28h10"/><path d="M252 20.500h6M252 24h6M252 27.500h6"/></g><path d="M248.500 19v10M246.500 21.500l2-2.500 2 2.500M246.500 27l2 2.500 2-2.500" stroke="#3a78c8" stroke-width="1"/><path d="M260 23l2 2 2-2z" fill="#444"/><path d="M184 38l3-3 4 4-3 3zM192 39c1 1.500 1 2.500 0 3" fill="#fff" stroke="#555" stroke-width=".8"/><path d="M183 43.500h9" stroke="#888" stroke-width="1.500"/><path d="M196 38.500l2 2 2-2zM219 38.500l2 2 2-2z" fill="#444"/><path d="M205.500 34.500h9v9h-9zM210 34.500v9M205.500 39h9" stroke="#777" stroke-width=".8" fill="#e8e8e8"/><path d="M244 34v10M242 41.500l2 2.500 2-2.500" stroke="#444" stroke-width="1"/><path d="M294.500 17.500l5.500-13h1.500l5.500 13M297 13h8.500" stroke="#2563b8" stroke-width="1.900"/><path d="M307.500 9l3.500-2.500-2 6-3.500 6-3 1.500.5-3.500z" fill="#555"/><circle cx="303.500" cy="19.500" r="2" fill="#2c6cc0"/><path d="M299 42l2 2 2-2zM332 41l2 2 2-2z" fill="#555"/><path d="M324.500 3h19v18.500h-19z" fill="#dedede" stroke="#8c8c8c"/><circle cx="335.500" cy="10.500" r="2.700" stroke="#2c6cc0" stroke-width="1.300"/><path d="M333.500 12.500l-3.500 3.500" stroke="#2c6cc0" stroke-width="1.500"/><path d="M476 57l3-3 3 3" stroke="#333" stroke-width="1.200"/><path d="M41 53.500h4v4h-4zM170 53.500h4v4h-4zM277.500 53.500h4v4h-4zM312 53.500h4v4h-4z" stroke="#555" stroke-width=".8"/></svg>
<div class="t" style="left:393.60px;top:153.74px;font-size:7.4px;color:#222;letter-spacing:-0.130px;">Verdana</div>
<div class="t" style="left:489.00px;top:153.74px;font-size:7.4px;color:#222;letter-spacing:-0.027px;">8</div>
<div class="t" style="left:347.40px;top:175.90px;font-size:7.8px;color:#222;letter-spacing:-0.367px;">Paste</div>
<div class="t" style="left:395.80px;top:168.00px;font-size:7.8px;color:#222;font-weight:bold;">B</div>
<div class="t" style="left:411.00px;top:167.83px;font-size:8px;color:#222;font-weight:bold;font-style:italic;font-family:'Liberation Serif',serif;">I</div>
<div class="t" style="left:424.80px;top:168.00px;font-size:7.8px;color:#222;">U</div>
<div class="t" style="left:444.50px;top:169.01px;font-size:6.6px;color:#222;letter-spacing:-0.509px;font-weight:bold;text-decoration:line-through;">abc</div>
<div class="t" style="left:461.00px;top:167.86px;font-size:8.2px;color:#222;font-weight:bold;">x</div>
<div class="t" style="left:466.00px;top:172.74px;font-size:4.8px;color:#2c6cc0;">2</div>
<div class="t" style="left:476.00px;top:167.86px;font-size:8.2px;color:#222;font-weight:bold;">x</div>
<div class="t" style="left:481.00px;top:166.94px;font-size:4.8px;color:#2c6cc0;">2</div>
<div class="t" style="left:394.30px;top:181.69px;font-size:11px;color:#999;-webkit-text-stroke:.5px #8a8a8a;color:#c4c4c4;">A</div>
<div class="t" style="left:414.80px;top:182.87px;font-size:6.3px;color:#222;">ab</div>
<div class="t" style="left:439.30px;top:181.85px;font-size:8.8px;color:#222;">A</div>
<div class="t" style="left:459.50px;top:182.80px;font-size:8.5px;color:#333;letter-spacing:-0.137px;">Aa</div>
<div class="t" style="left:490.00px;top:182.46px;font-size:9.5px;color:#333;">A</div>
<div class="t" style="left:505.50px;top:183.73px;font-size:8px;color:#333;">A</div>
<svg style="left:495px;top:180px" width="22" height="5"><path d="M2 4l1.500-3 1.500 3zM15 1l1.500 3 1.500-3z" fill="#2c6cc0"/></svg>
<div class="t" style="left:574.50px;top:180.92px;font-size:6px;color:#2c6cc0;font-weight:bold;">A</div>
<div class="t" style="left:574.50px;top:186.92px;font-size:6px;color:#7a3fb0;font-weight:bold;">Z</div>
<div class="t" style="left:598.00px;top:182.53px;font-size:10px;color:#444;">&para;</div>
<div class="t" style="left:632.00px;top:175.90px;font-size:7.8px;color:#222;letter-spacing:-0.205px;">Styles</div>
<div class="t" style="left:662.00px;top:174.40px;font-size:7.8px;color:#222;">Editing</div>
<div class="t" style="left:342.00px;top:199.25px;font-size:7.5px;color:#333;letter-spacing:0.064px;">Clipboard</div>
<div class="t" style="left:440.00px;top:199.25px;font-size:7.5px;color:#333;letter-spacing:-0.051px;">Font</div>
<div class="t" style="left:548.50px;top:199.25px;font-size:7.5px;color:#333;letter-spacing:-0.110px;">Paragraph</div>
<div class="t" style="left:627.50px;top:199.25px;font-size:7.5px;color:#333;letter-spacing:-0.315px;">Styles</div>
<div class="a" style="left:352.5px;top:208.5px;width:453px;height:305px;background:#fff;"></div>
<div class="t" style="left:504.29px;top:219.73px;font-size:9.3px;color:#000;letter-spacing:-0.120px;font-weight:bold;">Titration Polysomnography Report</div>
<div class="t" style="left:378.70px;top:241.93px;font-size:8px;color:#000;letter-spacing:-0.151px;font-weight:bold;">Sleep Data</div>
<div class="t" style="left:378.70px;top:260.02px;font-size:6.0px;color:#0c0c0c;">Lights Out:</div>
<div class="t" style="left:485.80px;top:260.02px;font-size:6.0px;color:#0c0c0c;">10:26:55 PM</div>
<div class="t" style="left:592.50px;top:260.02px;font-size:6.0px;color:#0c0c0c;">Sleep Latency:</div>
<div class="t" style="left:699.00px;top:260.02px;font-size:6.0px;color:#0c0c0c;">7.5 min.</div>
<div class="t" style="left:378.70px;top:268.60px;font-size:6.0px;color:#0c0c0c;">Lights On:</div>
<div class="t" style="left:485.80px;top:268.60px;font-size:6.0px;color:#0c0c0c;">5:51:25 AM</div>
<div class="t" style="left:592.50px;top:268.60px;font-size:6.0px;color:#0c0c0c;">REM Latency:</div>
<div class="t" style="left:699.00px;top:268.60px;font-size:6.0px;color:#0c0c0c;">47.5 min.</div>
<div class="t" style="left:378.70px;top:277.18px;font-size:6.0px;color:#0c0c0c;">Sleep Onset:</div>
<div class="t" style="left:485.80px;top:277.18px;font-size:6.0px;color:#0c0c0c;">7.5 min.</div>
<div class="t" style="left:592.50px;top:277.18px;font-size:6.0px;color:#0c0c0c;">Wake After Sleep Onset (WASO):</div>
<div class="t" style="left:699.00px;top:277.18px;font-size:6.0px;color:#0c0c0c;">55.0 min.</div>
<div class="t" style="left:378.70px;top:285.76px;font-size:6.0px;color:#0c0c0c;">Total Recording Time (TRT):</div>
<div class="t" style="left:485.80px;top:285.76px;font-size:6.0px;color:#0c0c0c;">444.5 min. (7.4 hrs.)</div>
<div class="t" style="left:592.50px;top:285.76px;font-size:6.0px;color:#0c0c0c;">Sleep Efficiency:</div>
<div class="t" style="left:699.00px;top:285.76px;font-size:6.0px;color:#0c0c0c;">86%</div>
<div class="t" style="left:378.70px;top:294.34px;font-size:6.0px;color:#0c0c0c;">Sleep Period Time (SPT):</div>
<div class="t" style="left:485.80px;top:294.34px;font-size:6.0px;color:#0c0c0c;">435.5 min. (7.3 hrs.)</div>
<div class="t" style="left:592.50px;top:294.34px;font-size:6.0px;color:#0c0c0c;">Sleep Maintenance Efficiency:</div>
<div class="t" style="left:699.00px;top:294.34px;font-size:6.0px;color:#0c0c0c;">87%</div>
<div class="t" style="left:378.70px;top:302.92px;font-size:6.0px;color:#0c0c0c;">Total Sleep Time (TST):</div>
<div class="t" style="left:485.80px;top:302.92px;font-size:6.0px;color:#0c0c0c;">380.5 min. (6.3 hrs.)</div>
<div class="t" style="left:378.70px;top:328.52px;font-size:6px;color:#0c0c0c;letter-spacing:-0.156px;font-weight:bold;text-decoration:underline;">Sleep Stages</div>
<div class="t" style="left:466.00px;top:328.52px;font-size:6px;color:#0c0c0c;letter-spacing:-0.151px;font-weight:bold;text-decoration:underline;">Time (min)</div>
<div class="t" style="left:540.00px;top:328.52px;font-size:6px;color:#0c0c0c;letter-spacing:-0.183px;font-weight:bold;text-decoration:underline;">% TST</div>
<div class="t" style="left:592.50px;top:328.52px;font-size:6px;color:#0c0c0c;letter-spacing:-0.162px;font-weight:bold;text-decoration:underline;">Arousals and Awakenings</div>
<div class="t" style="left:378.70px;top:337.52px;font-size:6.0px;color:#0c0c0c;">TST</div>
<div class="t" style="left:467.03px;top:337.52px;font-size:6.0px;color:#0c0c0c;">380.5 min.</div>
<div class="t" style="left:592.50px;top:337.52px;font-size:6.0px;color:#0c0c0c;">Total Awakenings:</div>
<div class="t" style="left:699.00px;top:337.52px;font-size:6.0px;color:#0c0c0c;">15</div>
<div class="t" style="left:378.70px;top:346.07px;font-size:6.0px;color:#0c0c0c;">NREM</div>
<div class="t" style="left:467.03px;top:346.07px;font-size:6.0px;color:#0c0c0c;">240.0 min.</div>
<div class="t" style="left:540.80px;top:346.07px;font-size:6.0px;color:#0c0c0c;">63%</div>
<div class="t" style="left:592.50px;top:346.07px;font-size:6.0px;color:#0c0c0c;">Awakening Index:</div>
<div class="t" style="left:699.00px;top:346.07px;font-size:6.0px;color:#0c0c0c;">2.4</div>
<div class="t" style="left:381.50px;top:354.62px;font-size:6.0px;color:#0c0c0c;">N1</div>
<div class="t" style="left:470.42px;top:354.62px;font-size:6.0px;color:#0c0c0c;">49.0 min.</div>
<div class="t" style="left:540.80px;top:354.62px;font-size:6.0px;color:#0c0c0c;">13%</div>
<div class="t" style="left:592.50px;top:354.62px;font-size:6.0px;color:#0c0c0c;">Total Arousals:</div>
<div class="t" style="left:699.00px;top:354.62px;font-size:6.0px;color:#0c0c0c;">34</div>
<div class="t" style="left:381.50px;top:363.17px;font-size:6.0px;color:#0c0c0c;">N2</div>
<div class="t" style="left:467.03px;top:363.17px;font-size:6.0px;color:#0c0c0c;">186.5 min.</div>
<div class="t" style="left:540.80px;top:363.17px;font-size:6.0px;color:#0c0c0c;">49%</div>
<div class="t" style="left:592.50px;top:363.17px;font-size:6.0px;color:#0c0c0c;">Arousal Index:</div>
<div class="t" style="left:699.00px;top:363.17px;font-size:6.0px;color:#0c0c0c;">5.4</div>
<div class="t" style="left:381.50px;top:371.72px;font-size:6.0px;color:#0c0c0c;">N3</div>
<div class="t" style="left:473.81px;top:371.72px;font-size:6.0px;color:#0c0c0c;">4.5 min.</div>
<div class="t" style="left:544.19px;top:371.72px;font-size:6.0px;color:#0c0c0c;">1%</div>
<div class="t" style="left:378.70px;top:380.27px;font-size:6.0px;color:#0c0c0c;">REM</div>
<div class="t" style="left:467.03px;top:380.27px;font-size:6.0px;color:#0c0c0c;">140.5 min.</div>
<div class="t" style="left:540.80px;top:380.27px;font-size:6.0px;color:#0c0c0c;">37%</div>
<div class="t" style="left:378.70px;top:388.82px;font-size:6.0px;color:#0c0c0c;">Wake</div>
<div class="t" style="left:470.42px;top:388.82px;font-size:6.0px;color:#0c0c0c;">64.0 min.</div>
<div class="t" style="left:378.70px;top:404.93px;font-size:8px;color:#000;letter-spacing:-0.148px;font-weight:bold;">Respiratory Data</div>
<div class="a" style="left:374.3px;top:413.5px;width:386.5px;height:1px;background:#333;"></div>
<div class="a" style="left:374.3px;top:438.5px;width:386.5px;height:1px;background:#333;"></div>
<div class="a" style="left:374.3px;top:440.2px;width:386.5px;height:1px;background:#ddd;"></div>
<div class="t" style="left:378.70px;top:416.12px;font-size:6px;color:#0c0c0c;">AHI:</div>
<div class="t" style="left:427.00px;top:416.12px;font-size:6px;color:#0c0c0c;font-weight:bold;">8.7</div>
<div class="t" style="left:474.50px;top:416.12px;font-size:6px;color:#0c0c0c;">CMS AHI:</div>
<div class="t" style="left:522.50px;top:416.12px;font-size:6px;color:#0c0c0c;">3.5</div>
<div class="t" style="left:571.50px;top:416.12px;font-size:6px;color:#0c0c0c;">RDI:</div>
<div class="t" style="left:619.00px;top:416.12px;font-size:6px;color:#0c0c0c;">8.7</div>
<div class="t" style="left:667.50px;top:416.12px;font-size:6px;color:#0c0c0c;">CAHI:</div>
<div class="t" style="left:715.50px;top:416.12px;font-size:6px;color:#0c0c0c;">1.4</div>
<div class="t" style="left:378.70px;top:424.02px;font-size:6px;color:#0c0c0c;">AHI REM:</div>
<div class="t" style="left:427.00px;top:424.02px;font-size:6px;color:#0c0c0c;">6.0</div>
<div class="t" style="left:474.50px;top:424.02px;font-size:6px;color:#0c0c0c;">CMS AHI REM:</div>
<div class="t" style="left:522.50px;top:424.02px;font-size:6px;color:#0c0c0c;">3.4</div>
<div class="t" style="left:571.50px;top:424.02px;font-size:6px;color:#0c0c0c;">RDI REM:</div>
<div class="t" style="left:619.00px;top:424.02px;font-size:6px;color:#0c0c0c;">6.0</div>
<div class="t" style="left:667.50px;top:424.02px;font-size:6px;color:#0c0c0c;">CAHI REM:</div>
<div class="t" style="left:715.50px;top:424.02px;font-size:6px;color:#0c0c0c;">0.2</div>
<div class="t" style="left:378.70px;top:431.92px;font-size:6px;color:#0c0c0c;">AHI NREM:</div>
<div class="t" style="left:427.00px;top:431.92px;font-size:6px;color:#0c0c0c;">10.5</div>
<div class="t" style="left:474.50px;top:431.92px;font-size:6px;color:#0c0c0c;">CMS AHI</div>
<div class="t" style="left:522.50px;top:431.92px;font-size:6px;color:#0c0c0c;">3.5</div>
<div class="t" style="left:571.50px;top:431.92px;font-size:6px;color:#0c0c0c;">RDI NREM:</div>
<div class="t" style="left:619.00px;top:431.92px;font-size:6px;color:#0c0c0c;">10.5</div>
<div class="t" style="left:667.50px;top:431.92px;font-size:6px;color:#0c0c0c;">CAHI NREM:</div>
<div class="t" style="left:715.50px;top:431.92px;font-size:6px;color:#0c0c0c;">1.8</div>
<div class="t" style="left:378.70px;top:451.64px;font-size:8.7px;color:#000;letter-spacing:-0.320px;font-weight:bold;">Titration Data</div>
<div class="a" style="left:374.3px;top:462px;width:387px;height:1px;background:#222;"></div>
<div class="a" style="left:374.3px;top:484px;width:387px;height:1px;background:#222;"></div>
<div class="a" style="left:374.8px;top:485px;width:386px;height:6.5px;background:#c8c8c8;"></div>
<div class="a" style="left:374.3px;top:462px;width:1px;height:23px;background:#222;"></div>
<div class="a" style="left:415.4px;top:462px;width:1px;height:23px;background:#222;"></div>
<div class="a" style="left:441px;top:462px;width:1px;height:23px;background:#222;"></div>
<div class="a" style="left:467px;top:462px;width:1px;height:23px;background:#222;"></div>
<div class="a" style="left:492.6px;top:462px;width:1px;height:23px;background:#222;"></div>
<div class="a" style="left:519.3px;top:462px;width:1px;height:23px;background:#222;"></div>
<div class="a" style="left:544.7px;top:462px;width:1px;height:23px;background:#222;"></div>
<div class="a" style="left:576.7px;top:462px;width:1px;height:23px;background:#222;"></div>
<div class="a" style="left:599.3px;top:462px;width:1px;height:23px;background:#222;"></div>
<div class="a" style="left:625.2px;top:462px;width:1px;height:23px;background:#222;"></div>
<div class="a" style="left:651.1px;top:462px;width:1px;height:23px;background:#222;"></div>
<div class="a" style="left:677.3px;top:462px;width:1px;height:23px;background:#222;"></div>
<div class="a" style="left:712.3px;top:462px;width:1px;height:23px;background:#222;"></div>
<div class="a" style="left:761px;top:462px;width:1px;height:23px;background:#222;"></div>
<div class="a" style="left:374.3px;top:485px;width:1px;height:28px;background:#555;"></div>
<div class="a" style="left:760.5px;top:485px;width:1px;height:28px;background:#555;"></div>
<div class="t" style="left:384.46px;top:463.86px;font-size:5.6px;color:#222;font-weight:bold;">Therapy</div>
<div class="t" style="left:387.73px;top:471.16px;font-size:5.6px;color:#222;font-weight:bold;">Detail</div>
<div class="t" style="left:422.22px;top:463.86px;font-size:5.6px;color:#222;font-weight:bold;">Total</div>
<div class="t" style="left:422.22px;top:471.16px;font-size:5.6px;color:#222;font-weight:bold;">Time</div>
<div class="t" style="left:421.08px;top:478.46px;font-size:5.6px;color:#222;font-weight:bold;">(min.)</div>
<div class="t" style="left:447.03px;top:463.86px;font-size:5.6px;color:#222;font-weight:bold;">Sleep</div>
<div class="t" style="left:448.02px;top:471.16px;font-size:5.6px;color:#222;font-weight:bold;">Time</div>
<div class="t" style="left:446.88px;top:478.46px;font-size:5.6px;color:#222;font-weight:bold;">(min.)</div>
<div class="t" style="left:474.08px;top:463.86px;font-size:5.6px;color:#222;font-weight:bold;">REM</div>
<div class="t" style="left:472.68px;top:471.16px;font-size:5.6px;color:#222;font-weight:bold;">(min.)</div>
<div class="t" style="left:498.21px;top:463.86px;font-size:5.6px;color:#222;font-weight:bold;">NREM</div>
<div class="t" style="left:498.83px;top:471.16px;font-size:5.6px;color:#222;font-weight:bold;">(min.)</div>
<div class="t" style="left:523.02px;top:463.86px;font-size:5.6px;color:#222;font-weight:bold;">Hypop.</div>
<div class="t" style="left:524.42px;top:471.16px;font-size:5.6px;color:#222;font-weight:bold;">Count</div>
<div class="t" style="left:552.65px;top:463.86px;font-size:5.6px;color:#222;font-weight:bold;">Apnea</div>
<div class="t" style="left:553.11px;top:471.16px;font-size:5.6px;color:#222;font-weight:bold;">C/O/M</div>
<div class="t" style="left:582.02px;top:463.86px;font-size:5.6px;color:#222;font-weight:bold;">Total</div>
<div class="t" style="left:580.88px;top:471.16px;font-size:5.6px;color:#222;font-weight:bold;">Resp.</div>
<div class="t" style="left:580.42px;top:478.46px;font-size:5.6px;color:#222;font-weight:bold;">Count</div>
<div class="t" style="left:607.93px;top:463.86px;font-size:5.6px;color:#222;font-weight:bold;">AHI</div>
<div class="t" style="left:629.01px;top:463.86px;font-size:5.6px;color:#222;font-weight:bold;">Central</div>
<div class="t" style="left:633.83px;top:471.16px;font-size:5.6px;color:#222;font-weight:bold;">AHI</div>
<div class="t" style="left:659.88px;top:463.86px;font-size:5.6px;color:#222;font-weight:bold;">RDI</div>
<div class="t" style="left:685.50px;top:463.86px;font-size:5.6px;color:#222;font-weight:bold;">SpO2%</div>
<div class="t" style="left:681.77px;top:471.16px;font-size:5.6px;color:#222;font-weight:bold;">Mean/Low</div>
<div class="t" style="left:721.65px;top:463.86px;font-size:5.6px;color:#222;font-weight:bold;">Time Below</div>
<div class="t" style="left:715.07px;top:471.16px;font-size:5.6px;color:#222;font-weight:bold;">SpO2 88% (min.)</div>
<div class="a" style="left:524.5px;top:469px;width:15px;height:0.8px;background:#e02020;"></div>
<div class="t" style="left:378.00px;top:485.56px;font-size:5.6px;color:#333;">CPAP (CPAP/Mask/Humidifier/Pressure Relief)</div>
<div class="t" style="left:378.00px;top:492.69px;font-size:5.8px;color:#444;">5/N/H/F</div>
<div class="t" style="left:425.22px;top:492.69px;font-size:5.8px;color:#444;">47.0</div>
<div class="t" style="left:451.22px;top:492.69px;font-size:5.8px;color:#444;">36.5</div>
<div class="t" style="left:480.05px;top:492.69px;font-size:5.8px;color:#444;">0.0</div>
<div class="t" style="left:503.52px;top:492.69px;font-size:5.8px;color:#444;">36.5</div>
<div class="t" style="left:530.89px;top:492.69px;font-size:5.8px;color:#444;">7</div>
<div class="t" style="left:559.81px;top:492.69px;font-size:5.8px;color:#444;">0/5/0</div>
<div class="t" style="left:586.85px;top:492.69px;font-size:5.8px;color:#444;">12</div>
<div class="t" style="left:607.11px;top:492.69px;font-size:5.8px;color:#111;font-weight:bold;">19.7</div>
<div class="t" style="left:634.62px;top:492.69px;font-size:5.8px;color:#444;">0.0</div>
<div class="t" style="left:659.06px;top:492.69px;font-size:5.8px;color:#111;font-weight:bold;">19.7</div>
<div class="t" style="left:688.05px;top:492.69px;font-size:5.8px;color:#444;">96/92</div>
<div class="t" style="left:733.12px;top:492.69px;font-size:5.8px;color:#444;">0.0</div>
<div class="t" style="left:378.00px;top:499.79px;font-size:5.8px;color:#444;">5/F/H/F</div>
<div class="t" style="left:425.22px;top:499.79px;font-size:5.8px;color:#444;">16.6</div>
<div class="t" style="left:451.22px;top:499.79px;font-size:5.8px;color:#444;">16.6</div>
<div class="t" style="left:480.05px;top:499.79px;font-size:5.8px;color:#444;">8.6</div>
<div class="t" style="left:506.75px;top:499.79px;font-size:5.8px;color:#444;">8.0</div>
<div class="t" style="left:530.89px;top:499.79px;font-size:5.8px;color:#444;">2</div>
<div class="t" style="left:559.81px;top:499.79px;font-size:5.8px;color:#444;">0/3/0</div>
<div class="t" style="left:590.08px;top:499.79px;font-size:5.8px;color:#444;">5</div>
<div class="t" style="left:607.11px;top:499.79px;font-size:5.8px;color:#111;font-weight:bold;">18.1</div>
<div class="t" style="left:634.62px;top:499.79px;font-size:5.8px;color:#444;">0.0</div>
<div class="t" style="left:659.06px;top:499.79px;font-size:5.8px;color:#111;font-weight:bold;">18.1</div>
<div class="t" style="left:688.05px;top:499.79px;font-size:5.8px;color:#444;">95/92</div>
<div class="t" style="left:733.12px;top:499.79px;font-size:5.8px;color:#444;">0.0</div>
<div class="t" style="left:378.00px;top:506.89px;font-size:5.8px;color:#444;">7/F/H/F</div>
<div class="t" style="left:425.22px;top:506.89px;font-size:5.8px;color:#444;">30.4</div>
<div class="t" style="left:451.22px;top:506.89px;font-size:5.8px;color:#444;">27.4</div>
<div class="t" style="left:480.05px;top:506.89px;font-size:5.8px;color:#444;">5.4</div>
<div class="t" style="left:503.52px;top:506.89px;font-size:5.8px;color:#444;">22.0</div>
<div class="t" style="left:530.89px;top:506.89px;font-size:5.8px;color:#444;">2</div>
<div class="t" style="left:559.81px;top:506.89px;font-size:5.8px;color:#444;">0/4/0</div>
<div class="t" style="left:590.08px;top:506.89px;font-size:5.8px;color:#444;">6</div>
<div class="t" style="left:607.11px;top:506.89px;font-size:5.8px;color:#111;font-weight:bold;">13.1</div>
<div class="t" style="left:634.62px;top:506.89px;font-size:5.8px;color:#444;">0.0</div>
<div class="t" style="left:659.06px;top:506.89px;font-size:5.8px;color:#111;font-weight:bold;">13.1</div>
<div class="t" style="left:688.05px;top:506.89px;font-size:5.8px;color:#444;">95/93</div>
<div class="t" style="left:733.12px;top:506.89px;font-size:5.8px;color:#444;">0.0</div>
<div class="a" style="left:339.5px;top:513.5px;width:489.5px;height:15px;background:#444;"></div>
<div class="t" style="left:344.60px;top:517.03px;font-size:8.0px;color:#e8e8e8;letter-spacing:-0.320px;">Page 1 of 4</div>
<div class="t" style="left:395.40px;top:517.03px;font-size:8.0px;color:#e8e8e8;letter-spacing:-0.301px;">993 words</div>
<div class="a" style="left:658px;top:513.5px;width:25px;height:15px;background:#5e5e5e;"></div>
<svg style="left:340px;top:513.500px" width="489" height="15" viewBox="0 0 489 15" fill="none" stroke="#ddd" stroke-width="1"><path d="M103.500 3.500h4v8h-4zM107.500 3.500h4v8M109 6l3 3M112 6l-3 3"/><path d="M301 4h3.500v7H301zM304.500 4H308v7h-3.500" fill="#aaa" stroke="#ccc"/><path d="M325.500 3.500h9v8h-9zM327 6h6M327 8.500h6" stroke="#ddd"/><path d="M351.500 3.500h7v8h-7zM353 6h4M353 8h2"/><circle cx="358.500" cy="10" r="2.500" fill="#444" stroke="#ccc"/><path d="M372 7.500h4M446 7.500h5M448.500 5v5" stroke="#fff" stroke-width="1.300"/><path d="M378.500 7.500h65" stroke="#bbb"/><path d="M405.500 3v9" stroke="#fff" stroke-width="2"/><path d="M411 6v3" stroke="#bbb"/></svg>
<div class="t" style="left:802.00px;top:517.20px;font-size:7.8px;color:#e8e8e8;letter-spacing:-0.535px;">84%</div>
</body></html>
